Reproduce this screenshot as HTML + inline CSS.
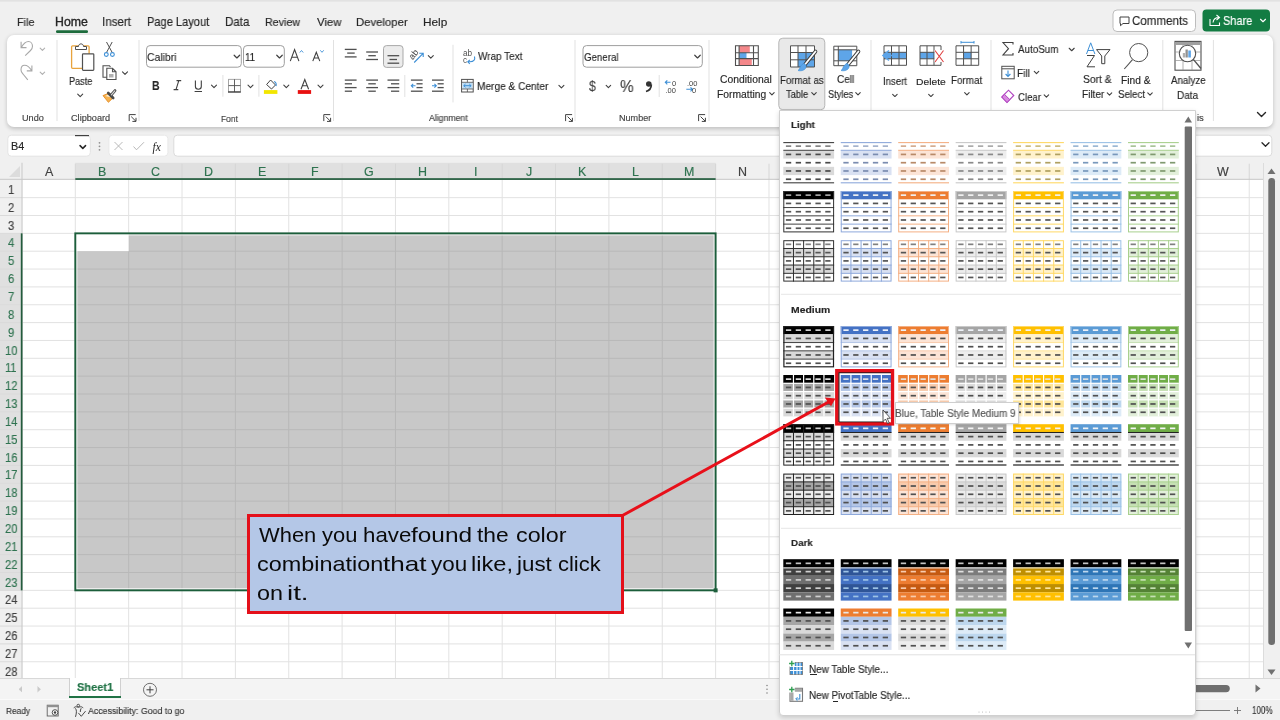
<!DOCTYPE html><html><head><meta charset="utf-8"><style>
*{margin:0;padding:0;box-sizing:border-box}
html,body{width:1280px;height:720px;overflow:hidden;background:#f0f0f0;font-family:"Liberation Sans",sans-serif;color:#262626}
.a{position:absolute}
.t{position:absolute;white-space:nowrap;line-height:1;transform-origin:0 0;will-change:transform;-webkit-text-stroke:0.15px currentColor}
svg.a{overflow:visible}
</style></head><body>
<div class="a" style="left:7px;top:35px;width:1266px;height:91.5px;background:#fff;border-radius:7px;box-shadow:0 1.5px 4px rgba(0,0,0,0.2)"></div><svg class="a" style="left:0;top:0;will-change:transform" width="1280" height="170"><rect x="0" y="0" width="1280" height="1.6" fill="#e2e2e2"/><rect x="56" y="30.2" width="32" height="2.7" rx="1.2" fill="#1d6b3c"/><rect x="1113" y="10" width="82.5" height="21.5" rx="4" fill="#fff" stroke="#bdbdbd" stroke-width="1"/><path d="M1120,17 h9 v6.5 h-6 l-2.5,2.2 v-2.2 h-0.5 z" fill="none" stroke="#404040" stroke-width="1"/><rect x="1202.5" y="9.5" width="67.5" height="22" rx="4" fill="#137c43"/><path d="M1210,19 v6.5 h9.5 v-3 M1213,22.5 c0.5,-3.5 2.5,-5 6,-5 M1216.5,15 l3,2.5 l-3,2.5" fill="none" stroke="#fff" stroke-width="1.1"/><path d="M1260.50,19.25 L1263.00,21.75 L1265.50,19.25" fill="none" stroke="#ffffff" stroke-width="1.1" stroke-linecap="round" stroke-linejoin="round"/><path d="M21.3,47.4 C23.5,43.5 26,41.5 28.5,41.5 C31,41.5 32.5,43.8 32.5,46.3 C32.5,48.2 31.5,49.5 30.5,50.5 L25.2,55.6 M21.1,41.8 V47.6 H26.5" fill="none" stroke="#a8a8a8" stroke-width="1.1"/><path d="M40.15,48.17 L42.40,50.42 L44.65,48.17" fill="none" stroke="#b0b0b0" stroke-width="1.1" stroke-linecap="round" stroke-linejoin="round"/><path d="M31.7,70.7 C29.5,67 27,65.3 24.6,65.3 C22.3,65.3 21,67.5 21,70 C21,71.8 22,73 23,74 L27.8,79.9 M31.9,65.5 V70.9 H26.8" fill="none" stroke="#a8a8a8" stroke-width="1.1"/><path d="M40.15,72.08 L42.40,74.33 L44.65,72.08" fill="none" stroke="#b0b0b0" stroke-width="1.1" stroke-linecap="round" stroke-linejoin="round"/><rect x="56.50" y="40" width="1" height="81" fill="#e1e1e1"/><rect x="71.6" y="45.8" width="17.5" height="22.5" rx="1" fill="#fff" stroke="#e8a33d" stroke-width="1.3"/><path d="M75.5,49.5 V46.5 H78.5 C78.5,43 83.5,43 83.5,46.5 H86.5 V49.5 Z" fill="#fff" stroke="#505050" stroke-width="1"/><rect x="82.5" y="53.8" width="11.3" height="16.5" rx="0.8" fill="#fff" stroke="#505050" stroke-width="1.2"/><path d="M77.70,94.15 L80.20,96.65 L82.70,94.15" fill="none" stroke="#404040" stroke-width="1.1" stroke-linecap="round" stroke-linejoin="round"/><path d="M106.5,42 L112.2,52.5 M112.2,42 L106.5,52.5" stroke="#505050" stroke-width="1" fill="none"/><circle cx="106.3" cy="54.5" r="1.9" fill="none" stroke="#3d8fd6" stroke-width="1.1"/><circle cx="112.4" cy="54.5" r="1.9" fill="none" stroke="#3d8fd6" stroke-width="1.1"/><path d="M108,77.2 H103 V65.8 H109.5 L110.5,67" fill="none" stroke="#505050" stroke-width="1.1"/><path d="M106.8,68.3 H112.5 L116,71.8 V79.5 H106.8 Z M112.5,68.3 V71.8 H116" fill="#fff" stroke="#505050" stroke-width="1.1"/><rect x="109" y="74" width="4.5" height="3.5" fill="#b0b0b0"/><path d="M122.50,71.95 L125.00,74.45 L127.50,71.95" fill="none" stroke="#404040" stroke-width="1.1" stroke-linecap="round" stroke-linejoin="round"/><path d="M103,95.6 L108.4,102.3 L112.4,98.4 L108.8,93.2 Z" fill="#f6b24f" stroke="#e48c22" stroke-width="0.9" stroke-linejoin="round"/><path d="M105.2,96 L109.2,94.2 L110.8,97.2 Z" fill="#fff4e0"/><path d="M108.2,93 L113.2,98" stroke="#4a4a4a" stroke-width="2.6" stroke-linecap="round"/><path d="M111.2,95 L115,90.6" stroke="#4a4a4a" stroke-width="2.8" stroke-linecap="round"/><path d="M111.4,94.8 L114.8,90.8" stroke="#d8d8d8" stroke-width="1.1" stroke-linecap="round"/><path d="M129.2,121.1 V114.6 H135.7" fill="none" stroke="#404040" stroke-width="1"/><path d="M131.2,116.6 L136.0,121.39999999999999 M136.0,117.8 V121.39999999999999 H132.39999999999998" fill="none" stroke="#404040" stroke-width="1"/><rect x="138.50" y="40" width="1" height="81" fill="#e1e1e1"/><rect x="146.5" y="45.6" width="94.8" height="21.6" rx="3.5" fill="#fff" stroke="#9e9e9e" stroke-width="1"/><path d="M234.15,55.23 L236.90,57.98 L239.65,55.23" fill="none" stroke="#404040" stroke-width="1.2" stroke-linecap="round" stroke-linejoin="round"/><rect x="243.5" y="45.6" width="40.8" height="21.6" rx="3.5" fill="#fff" stroke="#9e9e9e" stroke-width="1"/><path d="M276.75,55.23 L279.50,57.98 L282.25,55.23" fill="none" stroke="#404040" stroke-width="1.2" stroke-linecap="round" stroke-linejoin="round"/><path d="M290.3,61.1 L294.6,49.6 L298.9,61.1 M291.9,57.2 H297.3" fill="none" stroke="#404040" stroke-width="1.1"/><path d="M299.8,52.5 L301.5,50.5 L303.2,52.5" fill="none" stroke="#3d8fd6" stroke-width="0.9"/><path d="M312.8,61.1 L316.3,52.3 L319.8,61.1 M314.1,58 H318.5" fill="none" stroke="#404040" stroke-width="1.1"/><path d="M320.3,50.3 L322,52.3 L323.7,50.3" fill="none" stroke="#3d8fd6" stroke-width="0.9"/><path d="M176.5,80.6 H181.2 M173.6,89.6 H178.3 M178.8,80.6 L176,89.6" fill="none" stroke="#404040" stroke-width="1.1"/><path d="M195.4,80.4 V86.6 C195.4,90.2 201.3,90.2 201.3,86.6 V80.4" fill="none" stroke="#404040" stroke-width="1.1"/><rect x="194.60" y="91.00" width="7.40" height="1.0" fill="#404040"/><path d="M211.50,85.05 L214.00,87.55 L216.50,85.05" fill="none" stroke="#404040" stroke-width="1.1" stroke-linecap="round" stroke-linejoin="round"/><rect x="222.40" y="75" width="1" height="21.700000000000003" fill="#e1e1e1"/><rect x="228.6" y="79.3" width="11.8" height="12.6" fill="none" stroke="#909090" stroke-width="0.8"/><path d="M234.5,79.3 V92 M228.6,85.6 H240.4" stroke="#505050" stroke-width="0.9"/><rect x="228.00" y="91.35" width="12.80" height="1.3" fill="#404040"/><path d="M248.00,85.05 L250.50,87.55 L253.00,85.05" fill="none" stroke="#404040" stroke-width="1.1" stroke-linecap="round" stroke-linejoin="round"/><rect x="258.40" y="75" width="1" height="21.700000000000003" fill="#e1e1e1"/><path d="M266.6,84.5 L270.6,80 L275.5,85 L271.5,89 Z" fill="none" stroke="#404040" stroke-width="1"/><path d="M274,81.5 C276,82 276.5,84 276,86" fill="none" stroke="#3d8fd6" stroke-width="1.2"/><rect x="263.9" y="90.1" width="13.5" height="3.8" fill="#f2e600"/><path d="M283.80,85.05 L286.30,87.55 L288.80,85.05" fill="none" stroke="#404040" stroke-width="1.1" stroke-linecap="round" stroke-linejoin="round"/><path d="M301,89.2 L304.8,79.6 L308.6,89.2 M302.4,85.8 H307.2" fill="none" stroke="#404040" stroke-width="1.1"/><rect x="297.8" y="90.1" width="13.3" height="3.8" fill="#e81010"/><path d="M318.00,85.05 L320.50,87.55 L323.00,85.05" fill="none" stroke="#404040" stroke-width="1.1" stroke-linecap="round" stroke-linejoin="round"/><path d="M323.8,121.1 V114.6 H330.3" fill="none" stroke="#404040" stroke-width="1"/><path d="M325.8,116.6 L330.6,121.39999999999999 M330.6,117.8 V121.39999999999999 H327.0" fill="none" stroke="#404040" stroke-width="1"/><rect x="333.00" y="40" width="1" height="81" fill="#e1e1e1"/><rect x="344.80" y="48.75" width="11.80" height="1.3" fill="#505050"/><rect x="347.20" y="52.45" width="7.50" height="1.3" fill="#505050"/><rect x="344.80" y="56.25" width="11.80" height="1.3" fill="#505050"/><rect x="366.20" y="51.35" width="11.80" height="1.3" fill="#505050"/><rect x="368.30" y="55.05" width="7.50" height="1.3" fill="#505050"/><rect x="366.20" y="58.85" width="11.80" height="1.3" fill="#505050"/><rect x="383.5" y="45.6" width="19.5" height="21.8" rx="3" fill="#ececec" stroke="#a0a0a0" stroke-width="0.9"/><rect x="387.50" y="55.05" width="11.70" height="1.3" fill="#505050"/><rect x="389.50" y="58.85" width="7.50" height="1.3" fill="#505050"/><rect x="387.50" y="62.55" width="11.70" height="1.3" fill="#505050"/><text x="0" y="0" transform="translate(412.8,60.2) rotate(-52)" font-family="Liberation Sans" font-size="9" fill="#404040">ab</text><path d="M414.2,62.5 L423.1,53.3 M419.3,53.2 H423.2 V57" fill="none" stroke="#3d8fd6" stroke-width="1.1"/><path d="M428.30,55.55 L430.80,58.05 L433.30,55.55" fill="none" stroke="#404040" stroke-width="1.1" stroke-linecap="round" stroke-linejoin="round"/><rect x="344.80" y="79.45" width="11.80" height="1.3" fill="#505050"/><rect x="344.80" y="83.15" width="7.20" height="1.3" fill="#505050"/><rect x="344.80" y="86.95" width="11.80" height="1.3" fill="#505050"/><rect x="344.80" y="90.55" width="7.20" height="1.3" fill="#505050"/><rect x="366.20" y="79.45" width="11.80" height="1.3" fill="#505050"/><rect x="368.30" y="83.15" width="7.50" height="1.3" fill="#505050"/><rect x="366.20" y="86.95" width="11.80" height="1.3" fill="#505050"/><rect x="368.30" y="90.55" width="7.50" height="1.3" fill="#505050"/><rect x="387.50" y="79.45" width="11.80" height="1.3" fill="#505050"/><rect x="391.00" y="83.15" width="8.20" height="1.3" fill="#505050"/><rect x="387.50" y="86.95" width="11.80" height="1.3" fill="#505050"/><rect x="391.00" y="90.55" width="8.20" height="1.3" fill="#505050"/><rect x="404.30" y="75" width="1" height="22" fill="#e1e1e1"/><rect x="410.90" y="79.45" width="11.70" height="1.3" fill="#505050"/><rect x="416.50" y="83.15" width="6.10" height="1.3" fill="#505050"/><rect x="416.50" y="86.95" width="6.10" height="1.3" fill="#505050"/><rect x="410.90" y="90.55" width="11.70" height="1.3" fill="#505050"/><path d="M415.5,85.7 H411.3 M413.2,83.8 L411.3,85.7 L413.2,87.6" fill="none" stroke="#3d8fd6" stroke-width="1.1"/><rect x="432.00" y="79.45" width="11.70" height="1.3" fill="#505050"/><rect x="437.60" y="83.15" width="6.10" height="1.3" fill="#505050"/><rect x="437.60" y="86.95" width="6.10" height="1.3" fill="#505050"/><rect x="432.00" y="90.55" width="11.70" height="1.3" fill="#505050"/><path d="M432,85.7 H436.3 M434.4,83.8 L436.3,85.7 L434.4,87.6" fill="none" stroke="#3d8fd6" stroke-width="1.1"/><rect x="452.50" y="44.8" width="1" height="57.60000000000001" fill="#e1e1e1"/><text x="463" y="55.5" font-family="Liberation Sans" font-size="8.2" fill="#505050">ab</text><text x="463" y="63" font-family="Liberation Sans" font-size="8.2" fill="#505050">c</text><path d="M474.5,56.5 C475.5,60 473.5,61.8 470,61.8 H467.8 M469.8,59.8 L467.8,61.8 L469.8,63.8" fill="none" stroke="#3d8fd6" stroke-width="1.1"/><rect x="461.6" y="79.4" width="11.6" height="12.6" fill="#fff" stroke="#505050" stroke-width="1"/><rect x="462.4" y="82.5" width="10" height="6.4" fill="#bcdcf5"/><path d="M461.6,82.3 H473.2 M461.6,89 H473.2 M467.4,79.4 V82.3 M467.4,89 V92" stroke="#505050" stroke-width="0.8"/><path d="M463.8,85.7 H471 M465.5,84 L463.8,85.7 L465.5,87.4 M469.3,84 L471,85.7 L469.3,87.4" fill="none" stroke="#3d8fd6" stroke-width="1"/><path d="M558.90,85.35 L561.40,87.85 L563.90,85.35" fill="none" stroke="#404040" stroke-width="1.1" stroke-linecap="round" stroke-linejoin="round"/><path d="M565.6,121.1 V114.6 H572.1" fill="none" stroke="#404040" stroke-width="1"/><path d="M567.6,116.6 L572.4,121.39999999999999 M572.4,117.8 V121.39999999999999 H568.8000000000001" fill="none" stroke="#404040" stroke-width="1"/><rect x="574.50" y="40" width="1" height="81" fill="#e1e1e1"/><rect x="583" y="45.6" width="119.3" height="21.6" rx="3.5" fill="#fff" stroke="#9e9e9e" stroke-width="1"/><path d="M694.75,55.23 L697.50,57.98 L700.25,55.23" fill="none" stroke="#404040" stroke-width="1.2" stroke-linecap="round" stroke-linejoin="round"/><path d="M606.15,85.38 L608.40,87.62 L610.65,85.38" fill="none" stroke="#404040" stroke-width="1.1" stroke-linecap="round" stroke-linejoin="round"/><circle cx="648.8" cy="84" r="2.8" fill="#333"/><path d="M651.3,84.5 C651.3,88 649.5,90.5 646,91.5" fill="none" stroke="#333" stroke-width="1.8"/><rect x="658.70" y="75" width="1" height="22" fill="#e1e1e1"/><path d="M670.5,82.3 H665.3 M667.3,80.3 L665.3,82.3 L667.3,84.3" fill="none" stroke="#3d8fd6" stroke-width="1.1"/><text x="672" y="85.5" font-family="Liberation Sans" font-size="7.5" fill="#404040">0</text><text x="665.5" y="92.6" font-family="Liberation Sans" font-size="7.5" fill="#404040">.00</text><text x="687" y="85.5" font-family="Liberation Sans" font-size="7.5" fill="#404040">.00</text><path d="M686.3,89.3 H692.5 M690.5,87.3 L692.5,89.3 L690.5,91.3" fill="none" stroke="#3d8fd6" stroke-width="1.1"/><text x="692" y="92.6" font-family="Liberation Sans" font-size="7.5" fill="#404040">0</text><path d="M698.6,121.1 V114.6 H705.1" fill="none" stroke="#404040" stroke-width="1"/><path d="M700.6,116.6 L705.4,121.39999999999999 M705.4,117.8 V121.39999999999999 H701.8000000000001" fill="none" stroke="#404040" stroke-width="1"/><rect x="708.50" y="40" width="1" height="81" fill="#e1e1e1"/><rect x="739.1" y="45.6" width="10.7" height="7.1" fill="#f4878a"/><rect x="739.1" y="52.7" width="7.4" height="5.9" fill="#5ea5e8"/><rect x="739.1" y="58.6" width="12.7" height="7.1" fill="#f4878a"/><path d="M735.5,45.8 H758.3 V65.5 H735.5 Z M739.1,45.8 V65.5 M753.5,45.8 V65.5 M735.5,52.7 H758.3 M735.5,58.6 H758.3" fill="none" stroke="#505050" stroke-width="1.1"/><path d="M769.65,92.67 L771.90,94.92 L774.15,92.67" fill="none" stroke="#404040" stroke-width="1.1" stroke-linecap="round" stroke-linejoin="round"/><rect x="778.8" y="38.2" width="46" height="71.5" rx="4" fill="#e9e9e9" stroke="#b5b5b5" stroke-width="1"/><rect x="790.5" y="45.8" width="24" height="21.2" fill="#fff"/><rect x="798" y="52.5" width="16.5" height="14.5" fill="#5ea5e8"/><path d="M790.5,45.8 H814.5 V67 H790.5 Z M798,45.8 V67 M806,45.8 V67 M790.5,52.5 H814.5 M790.5,59.8 H814.5" fill="none" stroke="#505050" stroke-width="1"/><path d="M815.5,51.5 L805,64.5" stroke="#404040" stroke-width="3.6" stroke-linecap="round"/><path d="M815.5,51.5 L805,64.5" stroke="#fff" stroke-width="1.8" stroke-linecap="round"/><path d="M803.5,63.5 C806.5,64 807,67.5 804.5,69.5 C802.5,71 799.5,71 798,70.5 C800,69.5 799.5,66 803.5,63.5 Z" fill="#5ea5e8" stroke="#3d8fd6" stroke-width="0.6"/><path d="M811.75,92.67 L814.00,94.92 L816.25,92.67" fill="none" stroke="#404040" stroke-width="1.1" stroke-linecap="round" stroke-linejoin="round"/><rect x="833.8" y="46.2" width="23" height="19.5" fill="#fff"/><rect x="838.3" y="49.8" width="13.8" height="11" fill="#5ea5e8"/><path d="M833.8,46.2 H856.8 V65.7 H833.8 Z M838.3,46.2 V65.7 M833.8,49.8 H856.8 M833.8,60.8 H856.8" fill="none" stroke="#505050" stroke-width="1"/><path d="M858.5,51.5 L848,64.5" stroke="#404040" stroke-width="3.6" stroke-linecap="round"/><path d="M858.5,51.5 L848,64.5" stroke="#fff" stroke-width="1.8" stroke-linecap="round"/><path d="M846.5,63.5 C849.5,64 850,67.5 847.5,69.5 C845.5,71 842.5,71 841,70.5 C843,69.5 842.5,66 846.5,63.5 Z" fill="#5ea5e8" stroke="#3d8fd6" stroke-width="0.6"/><path d="M855.75,92.67 L858.00,94.92 L860.25,92.67" fill="none" stroke="#404040" stroke-width="1.1" stroke-linecap="round" stroke-linejoin="round"/><rect x="870.50" y="40" width="1" height="81" fill="#e1e1e1"/><rect x="884" y="52.2" width="23" height="6.6" fill="#5ea5e8"/><path d="M884,45.8 H906.5 V65.3 H884 Z M891.50,45.8 V65.3 M899.00,45.8 V65.3 M884,52.30 H906.5 M884,58.80 H906.5" fill="none" stroke="#505050" stroke-width="1"/><path d="M889,50.5 L883,55.5 L889,60.5 M883.5,55.5 H893" fill="none" stroke="#5ea5e8" stroke-width="1.6"/><path d="M892.65,94.28 L894.90,96.53 L897.15,94.28" fill="none" stroke="#404040" stroke-width="1.1" stroke-linecap="round" stroke-linejoin="round"/><rect x="920" y="52.2" width="16" height="6.6" fill="#5ea5e8"/><path d="M934,52.2 L937.5,55.5 L934,58.8 Z" fill="#5ea5e8"/><path d="M920,45.8 H941 V65.3 H920 Z M927.00,45.8 V65.3 M934.00,45.8 V65.3 M920,52.30 H941 M920,58.80 H941" fill="none" stroke="#505050" stroke-width="1"/><rect x="934.5" y="50" width="9.5" height="12" fill="#fff"/><path d="M935,50.5 L943.5,62 M943.5,50.5 L935,62" stroke="#e04040" stroke-width="1.1"/><path d="M928.65,94.28 L930.90,96.53 L933.15,94.28" fill="none" stroke="#404040" stroke-width="1.1" stroke-linecap="round" stroke-linejoin="round"/><rect x="963.5" y="52.2" width="7.7" height="6.6" fill="#5ea5e8"/><path d="M956,45.8 H978.7 V65.3 H956 Z M963.57,45.8 V65.3 M971.13,45.8 V65.3 M956,52.30 H978.7 M956,58.80 H978.7" fill="none" stroke="#505050" stroke-width="1"/><path d="M961,42.3 H974 M961,41 V43.6 M974,41 V43.6" stroke="#3d8fd6" stroke-width="1"/><path d="M964.65,92.58 L966.90,94.83 L969.15,92.58" fill="none" stroke="#404040" stroke-width="1.1" stroke-linecap="round" stroke-linejoin="round"/><rect x="990.50" y="40" width="1" height="81" fill="#e1e1e1"/><path d="M1013,44.5 V42.5 H1003 L1008.5,48.7 L1003,55 H1013 V53" fill="none" stroke="#404040" stroke-width="1.1"/><path d="M1069.20,48.25 L1071.70,50.75 L1074.20,48.25" fill="none" stroke="#404040" stroke-width="1.1" stroke-linecap="round" stroke-linejoin="round"/><rect x="1001.8" y="66.3" width="12.4" height="12.5" fill="#fff" stroke="#505050" stroke-width="1"/><path d="M1001.8,68.8 H1014.2" stroke="#505050" stroke-width="1"/><path d="M1008,70.5 V76.5 M1005.6,74 L1008,76.5 L1010.4,74" fill="none" stroke="#3d8fd6" stroke-width="1.1"/><path d="M1034.25,71.38 L1036.50,73.62 L1038.75,71.38" fill="none" stroke="#404040" stroke-width="1.1" stroke-linecap="round" stroke-linejoin="round"/><path d="M1001.8,97 L1008.5,90.2 L1013.8,95.5 L1007,102.5 Z" fill="#fff" stroke="#b043c0" stroke-width="1.1"/><path d="M1001.8,97 L1004.5,94.4 L1009.8,99.6 L1007,102.5 Z" fill="#d88ae0" stroke="#b043c0" stroke-width="1"/><path d="M1044.15,94.88 L1046.40,97.12 L1048.65,94.88" fill="none" stroke="#404040" stroke-width="1.1" stroke-linecap="round" stroke-linejoin="round"/><path d="M1086.5,54 L1090.7,42.8 L1094.9,54 M1088,50.5 H1093.5" fill="none" stroke="#3d8fd6" stroke-width="1"/><path d="M1087,55.5 H1094.5 L1087,66.8 H1095" fill="none" stroke="#404040" stroke-width="1"/><path d="M1096.5,49.6 H1110 L1104.8,56 V63.7 H1101.7 V56 Z" fill="none" stroke="#404040" stroke-width="1"/><path d="M1107.25,92.88 L1109.50,95.12 L1111.75,92.88" fill="none" stroke="#404040" stroke-width="1.1" stroke-linecap="round" stroke-linejoin="round"/><circle cx="1138.7" cy="52.6" r="9.1" fill="none" stroke="#505050" stroke-width="1"/><path d="M1132.5,59.6 L1124.3,69" stroke="#505050" stroke-width="1.1"/><path d="M1147.75,92.88 L1150.00,95.12 L1152.25,92.88" fill="none" stroke="#404040" stroke-width="1.1" stroke-linecap="round" stroke-linejoin="round"/><rect x="1162.30" y="40" width="1" height="81" fill="#e1e1e1"/><rect x="1175" y="41.4" width="26" height="28.8" fill="#fff" stroke="#505050" stroke-width="1.1"/><rect x="1175.5" y="42" width="25" height="3" fill="#a0a0a0"/><path d="M1175,52 H1201 M1175,60.5 H1201 M1183,45 V70 M1192,45 V70" stroke="#909090" stroke-width="0.7"/><circle cx="1187.5" cy="53.5" r="8.2" fill="#fff" stroke="#505050" stroke-width="1.1"/><rect x="1182.8" y="53" width="2.3" height="4.5" fill="#b0b0b0"/><rect x="1185.5" y="49.5" width="2.3" height="8" fill="#909090"/><rect x="1188.3" y="50.5" width="2.6" height="7" fill="#5ea5e8"/><path d="M1193.3,59.3 L1201,68.5" stroke="#505050" stroke-width="1.3"/><rect x="1212.90" y="40" width="1" height="81" fill="#e1e1e1"/><path d="M1257.50,112.60 L1261.50,116.60 L1265.50,112.60" fill="none" stroke="#262626" stroke-width="1.4" stroke-linecap="round" stroke-linejoin="round"/><rect x="7.8" y="135.2" width="82.5" height="21" rx="3.5" fill="#fff" stroke="#e3e3e3" stroke-width="1"/><rect x="75" y="135" width="14" height="1.2" fill="#404040"/><path d="M80.05,145.62 L82.80,148.38 L85.55,145.62" fill="none" stroke="#262626" stroke-width="1.5" stroke-linecap="round" stroke-linejoin="round"/><circle cx="99.5" cy="142.8" r="0.9" fill="#909090"/><circle cx="99.5" cy="146.3" r="0.9" fill="#909090"/><circle cx="99.5" cy="149.8" r="0.9" fill="#909090"/><rect x="108.9" y="135.2" width="59" height="21" rx="3.5" fill="#fff" stroke="#e8e8e8" stroke-width="1"/><path d="M114.5,142 L122.5,150 M122.5,142 L114.5,150" stroke="#b0b0b0" stroke-width="0.9"/><path d="M133.5,146.5 L136.5,149.8 L144,142.2" fill="none" stroke="#b0b0b0" stroke-width="0.9"/><text x="152.5" y="151" font-family="Liberation Serif" font-style="italic" font-size="11.5" fill="#262626">fx</text><rect x="173.8" y="135.2" width="1098" height="21" rx="3.5" fill="#fff" stroke="#dadada" stroke-width="1"/><path d="M1262.00,142.75 L1265.50,146.25 L1269.00,142.75" fill="none" stroke="#262626" stroke-width="1.3" stroke-linecap="round" stroke-linejoin="round"/></svg><div class="t" style="left:17.13px;top:16.65px;font-size:11.59px;color:#262626;transform:scaleX(0.936);">File</div><div class="t" style="left:55.21px;top:16.15px;font-size:12.17px;color:#262626;transform:scaleX(1.012);-webkit-text-stroke:0.35px #262626;">Home</div><div class="t" style="left:101.76px;top:16.15px;font-size:12.17px;color:#262626;transform:scaleX(0.950);">Insert</div><div class="t" style="left:146.81px;top:16.15px;font-size:12.17px;color:#262626;transform:scaleX(0.911);">Page Layout</div><div class="t" style="left:224.68px;top:16.15px;font-size:12.17px;color:#262626;transform:scaleX(0.947);">Data</div><div class="t" style="left:265.14px;top:16.65px;font-size:11.59px;color:#262626;transform:scaleX(0.925);">Review</div><div class="t" style="left:316.54px;top:16.65px;font-size:11.59px;color:#262626;transform:scaleX(0.982);">View</div><div class="t" style="left:355.99px;top:16.65px;font-size:11.59px;color:#262626;transform:scaleX(0.979);">Developer</div><div class="t" style="left:423.45px;top:16.65px;font-size:11.59px;color:#262626;transform:scaleX(1.021);">Help</div><div class="t" style="left:1132.42px;top:15.11px;font-size:12.57px;color:#262626;transform:scaleX(0.921);">Comments</div><div class="t" style="left:1222.50px;top:15.48px;font-size:12.14px;color:#ffffff;transform:scaleX(0.909);">Share</div><div class="t" style="left:21.51px;top:114.06px;font-size:9.10px;color:#404040;transform:scaleX(1.004);">Undo</div><div class="t" style="left:69.07px;top:76.49px;font-size:11.30px;color:#262626;transform:scaleX(0.808);">Paste</div><div class="t" style="left:71.04px;top:113.96px;font-size:9.10px;color:#404040;transform:scaleX(1.007);">Clipboard</div><div class="t" style="left:147.48px;top:51.59px;font-size:11.31px;color:#262626;transform:scaleX(0.920);">Calibri</div><div class="t" style="left:245.47px;top:51.84px;font-size:11.01px;color:#262626;transform:scaleX(0.883);">11</div><div class="t" style="left:152.22px;top:78.72px;font-size:13.62px;color:#262626;font-weight:bold;transform:scaleX(0.770);">B</div><div class="t" style="left:220.93px;top:113.57px;font-size:9.57px;color:#404040;transform:scaleX(0.879);">Font</div><div class="t" style="left:478.15px;top:51.37px;font-size:11.45px;color:#262626;transform:scaleX(0.869);">Wrap Text</div><div class="t" style="left:477.39px;top:81.49px;font-size:10.71px;color:#262626;transform:scaleX(0.945);">Merge &amp; Center</div><div class="t" style="left:428.60px;top:113.96px;font-size:9.10px;color:#404040;transform:scaleX(0.957);">Alignment</div><div class="t" style="left:584.31px;top:51.69px;font-size:11.31px;color:#262626;transform:scaleX(0.858);">General</div><div class="t" style="left:588.58px;top:79.46px;font-size:14.86px;color:#404040;transform:scaleX(0.825);">$</div><div class="t" style="left:619.86px;top:78.32px;font-size:17.27px;color:#404040;transform:scaleX(0.890);">%</div><div class="t" style="left:618.98px;top:113.96px;font-size:9.10px;color:#404040;transform:scaleX(0.994);">Number</div><div class="t" style="left:720.48px;top:75.31px;font-size:10.34px;color:#262626;transform:scaleX(0.999);">Conditional</div><div class="t" style="left:716.92px;top:90.31px;font-size:10.34px;color:#262626;transform:scaleX(0.998);">Formatting</div><div class="t" style="left:779.82px;top:74.86px;font-size:10.87px;color:#262626;transform:scaleX(0.892);">Format as</div><div class="t" style="left:786.32px;top:90.31px;font-size:10.34px;color:#262626;transform:scaleX(0.894);">Table</div><div class="t" style="left:837.00px;top:75.31px;font-size:10.34px;color:#262626;transform:scaleX(0.964);">Cell</div><div class="t" style="left:828.08px;top:90.31px;font-size:10.34px;color:#262626;transform:scaleX(0.895);">Styles</div><div class="t" style="left:882.84px;top:76.95px;font-size:10.29px;color:#262626;transform:scaleX(0.933);">Insert</div><div class="t" style="left:916.38px;top:77.38px;font-size:9.79px;color:#262626;transform:scaleX(1.053);">Delete</div><div class="t" style="left:951.01px;top:75.21px;font-size:10.58px;color:#262626;transform:scaleX(0.933);">Format</div><div class="t" style="left:1018.20px;top:44.49px;font-size:11.43px;color:#262626;transform:scaleX(0.860);">AutoSum</div><div class="t" style="left:1017.38px;top:68.32px;font-size:11.03px;color:#262626;transform:scaleX(0.930);">Fill</div><div class="t" style="left:1017.72px;top:91.52px;font-size:11.03px;color:#262626;transform:scaleX(0.871);">Clear</div><div class="t" style="left:1083.14px;top:75.44px;font-size:10.43px;color:#262626;transform:scaleX(0.985);">Sort &amp;</div><div class="t" style="left:1081.50px;top:90.34px;font-size:10.07px;color:#262626;transform:scaleX(0.991);">Filter</div><div class="t" style="left:1120.68px;top:75.74px;font-size:10.07px;color:#262626;transform:scaleX(1.013);">Find &amp;</div><div class="t" style="left:1117.76px;top:90.34px;font-size:10.07px;color:#262626;transform:scaleX(0.966);">Select</div><div class="t" style="left:1170.90px;top:75.64px;font-size:10.07px;color:#262626;transform:scaleX(0.965);">Analyze</div><div class="t" style="left:1177.10px;top:89.91px;font-size:10.58px;color:#262626;transform:scaleX(0.941);">Data</div><div class="t" style="left:1196.98px;top:114.26px;font-size:9.10px;color:#404040;transform:scaleX(1.045);">is</div><div class="t" style="left:10.83px;top:141.46px;font-size:10.87px;color:#262626;transform:scaleX(0.999);">B4</div><div class="a" style="left:0;top:162.7px;width:1263.0px;height:515.5999999999999px;background:#fff"></div><svg class="a" style="left:0;top:0" width="1280" height="720"><rect x="0" y="162.7" width="1263.0" height="17.100000000000023" fill="#f0f0f0"/><rect x="0" y="179.8" width="22.5" height="498.49999999999994" fill="#f0f0f0"/><rect x="75.3" y="162.7" width="640.3199999999999" height="17.100000000000023" fill="#e0e0e0"/><rect x="0" y="233.35000000000002" width="22.5" height="357.0" fill="#e0e0e0"/><path d="M9,177 L20,177 L20,166 Z" fill="#dcdcdc"/><rect x="74.80" y="179.8" width="1" height="498.49999999999994" fill="#e2e2e2"/><rect x="74.80" y="163.7" width="1" height="16.100000000000023" fill="#d6d6d6"/><rect x="128.16" y="179.8" width="1" height="498.49999999999994" fill="#e2e2e2"/><rect x="128.16" y="163.7" width="1" height="16.100000000000023" fill="#d6d6d6"/><rect x="181.52" y="179.8" width="1" height="498.49999999999994" fill="#e2e2e2"/><rect x="181.52" y="163.7" width="1" height="16.100000000000023" fill="#d6d6d6"/><rect x="234.88" y="179.8" width="1" height="498.49999999999994" fill="#e2e2e2"/><rect x="234.88" y="163.7" width="1" height="16.100000000000023" fill="#d6d6d6"/><rect x="288.24" y="179.8" width="1" height="498.49999999999994" fill="#e2e2e2"/><rect x="288.24" y="163.7" width="1" height="16.100000000000023" fill="#d6d6d6"/><rect x="341.60" y="179.8" width="1" height="498.49999999999994" fill="#e2e2e2"/><rect x="341.60" y="163.7" width="1" height="16.100000000000023" fill="#d6d6d6"/><rect x="394.96" y="179.8" width="1" height="498.49999999999994" fill="#e2e2e2"/><rect x="394.96" y="163.7" width="1" height="16.100000000000023" fill="#d6d6d6"/><rect x="448.32" y="179.8" width="1" height="498.49999999999994" fill="#e2e2e2"/><rect x="448.32" y="163.7" width="1" height="16.100000000000023" fill="#d6d6d6"/><rect x="501.68" y="179.8" width="1" height="498.49999999999994" fill="#e2e2e2"/><rect x="501.68" y="163.7" width="1" height="16.100000000000023" fill="#d6d6d6"/><rect x="555.04" y="179.8" width="1" height="498.49999999999994" fill="#e2e2e2"/><rect x="555.04" y="163.7" width="1" height="16.100000000000023" fill="#d6d6d6"/><rect x="608.40" y="179.8" width="1" height="498.49999999999994" fill="#e2e2e2"/><rect x="608.40" y="163.7" width="1" height="16.100000000000023" fill="#d6d6d6"/><rect x="661.76" y="179.8" width="1" height="498.49999999999994" fill="#e2e2e2"/><rect x="661.76" y="163.7" width="1" height="16.100000000000023" fill="#d6d6d6"/><rect x="715.12" y="179.8" width="1" height="498.49999999999994" fill="#e2e2e2"/><rect x="715.12" y="163.7" width="1" height="16.100000000000023" fill="#d6d6d6"/><rect x="768.48" y="179.8" width="1" height="498.49999999999994" fill="#e2e2e2"/><rect x="768.48" y="163.7" width="1" height="16.100000000000023" fill="#d6d6d6"/><rect x="821.84" y="179.8" width="1" height="498.49999999999994" fill="#e2e2e2"/><rect x="821.84" y="163.7" width="1" height="16.100000000000023" fill="#d6d6d6"/><rect x="875.20" y="179.8" width="1" height="498.49999999999994" fill="#e2e2e2"/><rect x="875.20" y="163.7" width="1" height="16.100000000000023" fill="#d6d6d6"/><rect x="928.56" y="179.8" width="1" height="498.49999999999994" fill="#e2e2e2"/><rect x="928.56" y="163.7" width="1" height="16.100000000000023" fill="#d6d6d6"/><rect x="981.92" y="179.8" width="1" height="498.49999999999994" fill="#e2e2e2"/><rect x="981.92" y="163.7" width="1" height="16.100000000000023" fill="#d6d6d6"/><rect x="1035.28" y="179.8" width="1" height="498.49999999999994" fill="#e2e2e2"/><rect x="1035.28" y="163.7" width="1" height="16.100000000000023" fill="#d6d6d6"/><rect x="1088.64" y="179.8" width="1" height="498.49999999999994" fill="#e2e2e2"/><rect x="1088.64" y="163.7" width="1" height="16.100000000000023" fill="#d6d6d6"/><rect x="1142.00" y="179.8" width="1" height="498.49999999999994" fill="#e2e2e2"/><rect x="1142.00" y="163.7" width="1" height="16.100000000000023" fill="#d6d6d6"/><rect x="1195.36" y="179.8" width="1" height="498.49999999999994" fill="#e2e2e2"/><rect x="1195.36" y="163.7" width="1" height="16.100000000000023" fill="#d6d6d6"/><rect x="1248.72" y="179.8" width="1" height="498.49999999999994" fill="#e2e2e2"/><rect x="1248.72" y="163.7" width="1" height="16.100000000000023" fill="#d6d6d6"/><rect x="22.5" y="197.15" width="1240.5" height="1" fill="#e2e2e2"/><rect x="0" y="197.15" width="22.5" height="1" fill="#dadada"/><rect x="22.5" y="215.00" width="1240.5" height="1" fill="#e2e2e2"/><rect x="0" y="215.00" width="22.5" height="1" fill="#dadada"/><rect x="22.5" y="232.85" width="1240.5" height="1" fill="#e2e2e2"/><rect x="0" y="232.85" width="22.5" height="1" fill="#dadada"/><rect x="22.5" y="250.70" width="1240.5" height="1" fill="#e2e2e2"/><rect x="0" y="250.70" width="22.5" height="1" fill="#dadada"/><rect x="22.5" y="268.55" width="1240.5" height="1" fill="#e2e2e2"/><rect x="0" y="268.55" width="22.5" height="1" fill="#dadada"/><rect x="22.5" y="286.40" width="1240.5" height="1" fill="#e2e2e2"/><rect x="0" y="286.40" width="22.5" height="1" fill="#dadada"/><rect x="22.5" y="304.25" width="1240.5" height="1" fill="#e2e2e2"/><rect x="0" y="304.25" width="22.5" height="1" fill="#dadada"/><rect x="22.5" y="322.10" width="1240.5" height="1" fill="#e2e2e2"/><rect x="0" y="322.10" width="22.5" height="1" fill="#dadada"/><rect x="22.5" y="339.95" width="1240.5" height="1" fill="#e2e2e2"/><rect x="0" y="339.95" width="22.5" height="1" fill="#dadada"/><rect x="22.5" y="357.80" width="1240.5" height="1" fill="#e2e2e2"/><rect x="0" y="357.80" width="22.5" height="1" fill="#dadada"/><rect x="22.5" y="375.65" width="1240.5" height="1" fill="#e2e2e2"/><rect x="0" y="375.65" width="22.5" height="1" fill="#dadada"/><rect x="22.5" y="393.50" width="1240.5" height="1" fill="#e2e2e2"/><rect x="0" y="393.50" width="22.5" height="1" fill="#dadada"/><rect x="22.5" y="411.35" width="1240.5" height="1" fill="#e2e2e2"/><rect x="0" y="411.35" width="22.5" height="1" fill="#dadada"/><rect x="22.5" y="429.20" width="1240.5" height="1" fill="#e2e2e2"/><rect x="0" y="429.20" width="22.5" height="1" fill="#dadada"/><rect x="22.5" y="447.05" width="1240.5" height="1" fill="#e2e2e2"/><rect x="0" y="447.05" width="22.5" height="1" fill="#dadada"/><rect x="22.5" y="464.90" width="1240.5" height="1" fill="#e2e2e2"/><rect x="0" y="464.90" width="22.5" height="1" fill="#dadada"/><rect x="22.5" y="482.75" width="1240.5" height="1" fill="#e2e2e2"/><rect x="0" y="482.75" width="22.5" height="1" fill="#dadada"/><rect x="22.5" y="500.60" width="1240.5" height="1" fill="#e2e2e2"/><rect x="0" y="500.60" width="22.5" height="1" fill="#dadada"/><rect x="22.5" y="518.45" width="1240.5" height="1" fill="#e2e2e2"/><rect x="0" y="518.45" width="22.5" height="1" fill="#dadada"/><rect x="22.5" y="536.30" width="1240.5" height="1" fill="#e2e2e2"/><rect x="0" y="536.30" width="22.5" height="1" fill="#dadada"/><rect x="22.5" y="554.15" width="1240.5" height="1" fill="#e2e2e2"/><rect x="0" y="554.15" width="22.5" height="1" fill="#dadada"/><rect x="22.5" y="572.00" width="1240.5" height="1" fill="#e2e2e2"/><rect x="0" y="572.00" width="22.5" height="1" fill="#dadada"/><rect x="22.5" y="589.85" width="1240.5" height="1" fill="#e2e2e2"/><rect x="0" y="589.85" width="22.5" height="1" fill="#dadada"/><rect x="22.5" y="607.70" width="1240.5" height="1" fill="#e2e2e2"/><rect x="0" y="607.70" width="22.5" height="1" fill="#dadada"/><rect x="22.5" y="625.55" width="1240.5" height="1" fill="#e2e2e2"/><rect x="0" y="625.55" width="22.5" height="1" fill="#dadada"/><rect x="22.5" y="643.40" width="1240.5" height="1" fill="#e2e2e2"/><rect x="0" y="643.40" width="22.5" height="1" fill="#dadada"/><rect x="22.5" y="661.25" width="1240.5" height="1" fill="#e2e2e2"/><rect x="0" y="661.25" width="22.5" height="1" fill="#dadada"/><rect x="22.5" y="679.10" width="1240.5" height="1" fill="#e2e2e2"/><rect x="0" y="679.10" width="22.5" height="1" fill="#dadada"/><rect x="0" y="178.80" width="1263.0" height="1" fill="#c8c8c8"/><rect x="21.50" y="162.7" width="1" height="515.5999999999999" fill="#c8c8c8"/><rect x="75.3" y="233.35000000000002" width="640.3199999999999" height="357.0" fill="#c8c8c8"/><rect x="75.3" y="233.35000000000002" width="53.36" height="17.85" fill="#ffffff"/><rect x="128.16" y="233.35000000000002" width="1" height="357.0" fill="#b8b8b8"/><rect x="181.52" y="233.35000000000002" width="1" height="357.0" fill="#b8b8b8"/><rect x="234.88" y="233.35000000000002" width="1" height="357.0" fill="#b8b8b8"/><rect x="288.24" y="233.35000000000002" width="1" height="357.0" fill="#b8b8b8"/><rect x="341.60" y="233.35000000000002" width="1" height="357.0" fill="#b8b8b8"/><rect x="394.96" y="233.35000000000002" width="1" height="357.0" fill="#b8b8b8"/><rect x="448.32" y="233.35000000000002" width="1" height="357.0" fill="#b8b8b8"/><rect x="501.68" y="233.35000000000002" width="1" height="357.0" fill="#b8b8b8"/><rect x="555.04" y="233.35000000000002" width="1" height="357.0" fill="#b8b8b8"/><rect x="608.40" y="233.35000000000002" width="1" height="357.0" fill="#b8b8b8"/><rect x="661.76" y="233.35000000000002" width="1" height="357.0" fill="#b8b8b8"/><rect x="75.3" y="250.70" width="640.3199999999999" height="1" fill="#b8b8b8"/><rect x="75.3" y="268.55" width="640.3199999999999" height="1" fill="#b8b8b8"/><rect x="75.3" y="286.40" width="640.3199999999999" height="1" fill="#b8b8b8"/><rect x="75.3" y="304.25" width="640.3199999999999" height="1" fill="#b8b8b8"/><rect x="75.3" y="322.10" width="640.3199999999999" height="1" fill="#b8b8b8"/><rect x="75.3" y="339.95" width="640.3199999999999" height="1" fill="#b8b8b8"/><rect x="75.3" y="357.80" width="640.3199999999999" height="1" fill="#b8b8b8"/><rect x="75.3" y="375.65" width="640.3199999999999" height="1" fill="#b8b8b8"/><rect x="75.3" y="393.50" width="640.3199999999999" height="1" fill="#b8b8b8"/><rect x="75.3" y="411.35" width="640.3199999999999" height="1" fill="#b8b8b8"/><rect x="75.3" y="429.20" width="640.3199999999999" height="1" fill="#b8b8b8"/><rect x="75.3" y="447.05" width="640.3199999999999" height="1" fill="#b8b8b8"/><rect x="75.3" y="464.90" width="640.3199999999999" height="1" fill="#b8b8b8"/><rect x="75.3" y="482.75" width="640.3199999999999" height="1" fill="#b8b8b8"/><rect x="75.3" y="500.60" width="640.3199999999999" height="1" fill="#b8b8b8"/><rect x="75.3" y="518.45" width="640.3199999999999" height="1" fill="#b8b8b8"/><rect x="75.3" y="536.30" width="640.3199999999999" height="1" fill="#b8b8b8"/><rect x="75.3" y="554.15" width="640.3199999999999" height="1" fill="#b8b8b8"/><rect x="75.3" y="572.00" width="640.3199999999999" height="1" fill="#b8b8b8"/><rect x="75.3" y="233.35000000000002" width="53.36" height="17.85" fill="#ffffff"/><rect x="76.80" y="234.85" width="637.32" height="354.00" fill="none" stroke="#ffffff" stroke-width="1"/><rect x="75.30" y="233.35" width="640.32" height="357.00" fill="none" stroke="#1c5e3b" stroke-width="1.9"/><rect x="713.62" y="588.35" width="4" height="4" fill="#1c5e3b"/><rect x="75.3" y="178.20" width="640.3199999999999" height="1.7" fill="#235c3d"/><rect x="20.80" y="233.35000000000002" width="1.7" height="357.0" fill="#235c3d"/></svg><div class="t" style="left:44.76px;top:165.81px;font-size:12.46px;color:#404040;transform:scaleX(1.000);">A</div><div class="t" style="left:97.65px;top:165.81px;font-size:12.46px;color:#2f7350;transform:scaleX(1.000);">B</div><div class="t" style="left:150.76px;top:165.96px;font-size:12.29px;color:#2f7350;transform:scaleX(1.014);">C</div><div class="t" style="left:203.99px;top:165.81px;font-size:12.46px;color:#2f7350;transform:scaleX(1.000);">D</div><div class="t" style="left:257.67px;top:165.81px;font-size:12.46px;color:#2f7350;transform:scaleX(1.000);">E</div><div class="t" style="left:311.37px;top:165.81px;font-size:12.46px;color:#2f7350;transform:scaleX(1.000);">F</div><div class="t" style="left:364.07px;top:165.96px;font-size:12.29px;color:#2f7350;transform:scaleX(1.014);">G</div><div class="t" style="left:417.65px;top:165.81px;font-size:12.46px;color:#2f7350;transform:scaleX(1.000);">H</div><div class="t" style="left:473.79px;top:165.81px;font-size:12.46px;color:#2f7350;transform:scaleX(1.000);">I</div><div class="t" style="left:526.12px;top:165.81px;font-size:12.46px;color:#2f7350;transform:scaleX(1.000);">J</div><div class="t" style="left:577.64px;top:165.81px;font-size:12.46px;color:#2f7350;transform:scaleX(1.000);">K</div><div class="t" style="left:631.81px;top:165.81px;font-size:12.46px;color:#2f7350;transform:scaleX(1.000);">L</div><div class="t" style="left:683.77px;top:165.81px;font-size:12.46px;color:#2f7350;transform:scaleX(1.000);">M</div><div class="t" style="left:737.81px;top:165.81px;font-size:12.46px;color:#404040;transform:scaleX(1.000);">N</div><div class="t" style="left:790.83px;top:165.96px;font-size:12.29px;color:#404040;transform:scaleX(1.014);">O</div><div class="t" style="left:844.69px;top:165.81px;font-size:12.46px;color:#404040;transform:scaleX(1.000);">P</div><div class="t" style="left:897.55px;top:165.96px;font-size:12.29px;color:#404040;transform:scaleX(1.014);">Q</div><div class="t" style="left:951.03px;top:165.81px;font-size:12.46px;color:#404040;transform:scaleX(1.000);">R</div><div class="t" style="left:1004.96px;top:165.96px;font-size:12.29px;color:#404040;transform:scaleX(1.014);">S</div><div class="t" style="left:1058.66px;top:165.81px;font-size:12.46px;color:#404040;transform:scaleX(1.000);">T</div><div class="t" style="left:1111.33px;top:165.81px;font-size:12.46px;color:#404040;transform:scaleX(1.000);">U</div><div class="t" style="left:1165.04px;top:165.81px;font-size:12.46px;color:#404040;transform:scaleX(1.000);">V</div><div class="t" style="left:1216.65px;top:165.81px;font-size:12.46px;color:#404040;transform:scaleX(1.000);">W</div><div class="t" style="left:8.02px;top:183.78px;font-size:12.17px;color:#404040;transform:scaleX(0.920);">1</div><div class="t" style="left:8.19px;top:201.78px;font-size:12.00px;color:#404040;transform:scaleX(0.933);">2</div><div class="t" style="left:8.19px;top:219.62px;font-size:12.00px;color:#404040;transform:scaleX(0.933);">3</div><div class="t" style="left:8.25px;top:237.33px;font-size:12.17px;color:#2f7350;transform:scaleX(0.920);">4</div><div class="t" style="left:8.19px;top:255.18px;font-size:12.17px;color:#2f7350;transform:scaleX(0.920);">5</div><div class="t" style="left:8.14px;top:273.18px;font-size:12.00px;color:#2f7350;transform:scaleX(0.933);">6</div><div class="t" style="left:8.19px;top:290.88px;font-size:12.17px;color:#2f7350;transform:scaleX(0.920);">7</div><div class="t" style="left:8.16px;top:308.88px;font-size:12.00px;color:#2f7350;transform:scaleX(0.933);">8</div><div class="t" style="left:8.19px;top:326.73px;font-size:12.00px;color:#2f7350;transform:scaleX(0.933);">9</div><div class="t" style="left:4.86px;top:344.58px;font-size:12.00px;color:#2f7350;transform:scaleX(0.933);">10</div><div class="t" style="left:5.34px;top:362.28px;font-size:12.17px;color:#2f7350;transform:scaleX(0.920);">11</div><div class="t" style="left:4.94px;top:380.28px;font-size:12.00px;color:#2f7350;transform:scaleX(0.933);">12</div><div class="t" style="left:4.89px;top:398.12px;font-size:12.00px;color:#2f7350;transform:scaleX(0.933);">13</div><div class="t" style="left:4.83px;top:415.83px;font-size:12.17px;color:#2f7350;transform:scaleX(0.920);">14</div><div class="t" style="left:4.89px;top:433.68px;font-size:12.17px;color:#2f7350;transform:scaleX(0.920);">15</div><div class="t" style="left:4.89px;top:451.68px;font-size:12.00px;color:#2f7350;transform:scaleX(0.933);">16</div><div class="t" style="left:4.94px;top:469.38px;font-size:12.17px;color:#2f7350;transform:scaleX(0.920);">17</div><div class="t" style="left:4.89px;top:487.38px;font-size:12.00px;color:#2f7350;transform:scaleX(0.933);">18</div><div class="t" style="left:4.92px;top:505.23px;font-size:12.00px;color:#2f7350;transform:scaleX(0.933);">19</div><div class="t" style="left:5.00px;top:523.08px;font-size:12.00px;color:#2f7350;transform:scaleX(0.933);">20</div><div class="t" style="left:5.06px;top:540.92px;font-size:12.00px;color:#2f7350;transform:scaleX(0.933);">21</div><div class="t" style="left:5.08px;top:558.78px;font-size:12.00px;color:#2f7350;transform:scaleX(0.933);">22</div><div class="t" style="left:5.03px;top:576.62px;font-size:12.00px;color:#2f7350;transform:scaleX(0.933);">23</div><div class="t" style="left:4.97px;top:594.48px;font-size:12.00px;color:#404040;transform:scaleX(0.933);">24</div><div class="t" style="left:5.03px;top:612.33px;font-size:12.00px;color:#404040;transform:scaleX(0.933);">25</div><div class="t" style="left:5.03px;top:630.18px;font-size:12.00px;color:#404040;transform:scaleX(0.933);">26</div><div class="t" style="left:5.08px;top:648.03px;font-size:12.00px;color:#404040;transform:scaleX(0.933);">27</div><div class="t" style="left:5.03px;top:665.88px;font-size:12.00px;color:#404040;transform:scaleX(0.933);">28</div><div class="a" style="left:1263.0px;top:162.7px;width:17.0px;height:515.5999999999999px;background:#f0f0f0;border-left:1px solid #dcdcdc"></div><svg class="a" style="left:0;top:0" width="1280" height="720"><path d="M1267.5,174 L1271.5,168.5 L1275.5,174 Z" fill="#707070"/><rect x="1268.3" y="178" width="6.7" height="467" rx="3.3" fill="#6f6f6f"/><path d="M1267.5,669.5 L1271.5,675 L1275.5,669.5 Z" fill="#707070"/></svg><div class="a" style="left:0;top:678.3px;width:1280px;height:41.700000000000045px;background:#f0f0f0;border-top:1px solid #d8d8d8"></div><div class="a" style="left:0;top:679.3px;width:1280px;height:21.200000000000045px;background:#f4f4f4;border-bottom:1px solid #fafafa"></div><div class="a" style="left:68.8px;top:678.3px;width:52.3px;height:19.3px;background:#fff;border-left:1px solid #d0d0d0;border-right:1px solid #d0d0d0"></div><div class="a" style="left:68.8px;top:696px;width:52.3px;height:1.8px;background:#217346"></div><div class="t" style="left:76.57px;top:681.33px;font-size:11.72px;color:#217346;font-weight:bold;transform:scaleX(0.942);">Sheet1</div><svg class="a" style="left:0;top:0" width="1280" height="720"><path d="M22,686.5 L19,689.3 L22,692" fill="#c8c8c8" stroke="#c8c8c8" stroke-width="0.6"/><path d="M37.5,686.5 L40.5,689.3 L37.5,692" fill="#c8c8c8" stroke="#c8c8c8" stroke-width="0.6"/><circle cx="150" cy="689.8" r="6.5" fill="none" stroke="#606060" stroke-width="0.9"/><path d="M146.5,689.8 H153.5 M150,686.3 V693.3" stroke="#404040" stroke-width="1"/><circle cx="767" cy="685.5" r="0.8" fill="#8a8a8a"/><circle cx="767" cy="689.2" r="0.8" fill="#8a8a8a"/><circle cx="767" cy="693" r="0.8" fill="#8a8a8a"/><rect x="1040" y="684.9" width="189.8" height="7.4" rx="3.7" fill="#6f6f6f"/><path d="M1255.5,684.5 L1260.5,688.5 L1255.5,692.5 Z" fill="#707070"/><rect x="47.2" y="705.2" width="11" height="10.8" fill="none" stroke="#606060" stroke-width="0.9"/><rect x="47.2" y="705.2" width="11" height="2" fill="#909090"/><circle cx="55" cy="712.5" r="2.8" fill="#fff" stroke="#404040" stroke-width="0.9"/><circle cx="55" cy="712.5" r="1.2" fill="#404040"/><circle cx="78.3" cy="705.6" r="1.3" fill="none" stroke="#404040" stroke-width="0.9"/><path d="M74,707.8 C75,705.8 77,707.2 78.3,707.2 C79.6,707.2 81.6,705.8 83,707.8 M75.6,708.6 C76.9,710 76.6,713 75.6,716.5 M81,708.6 C80.5,709.5 80.3,710.5 80.3,711.6 M78.6,713.2 L81.3,716.3 L85.3,711.4" fill="none" stroke="#404040" stroke-width="0.95" stroke-linecap="round"/><path d="M1040,710.5 H1230 M1234,710.5 H1241 M1237.5,707 V714" stroke="#707070" stroke-width="0.9"/></svg><div class="t" style="left:5.58px;top:705.89px;font-size:9.66px;color:#333333;transform:scaleX(0.864);">Ready</div><div class="t" style="left:87.50px;top:705.89px;font-size:9.66px;color:#333333;transform:scaleX(0.912);">Accessibility: Good to go</div><div class="t" style="left:1252.10px;top:705.60px;font-size:10.00px;color:#333333;transform:scaleX(0.804);">100%</div><div class="a" style="left:247.2px;top:514.3px;width:376.5px;height:99.3px;background:#b4c7e7;border:3px solid #e4101a"></div><div class="t" style="left:258.59px;top:524.25px;font-size:21.00px;color:#0a0a0a;transform:scaleX(1.044);-webkit-text-stroke:0;">When</div><div class="t" style="left:322.29px;top:524.25px;font-size:21.00px;color:#0a0a0a;transform:scaleX(1.045);-webkit-text-stroke:0;">you</div><div class="t" style="left:363.04px;top:524.25px;font-size:21.00px;color:#0a0a0a;transform:scaleX(1.062);-webkit-text-stroke:0;">have</div><div class="t" style="left:411.33px;top:524.25px;font-size:21.00px;color:#0a0a0a;transform:scaleX(1.163);-webkit-text-stroke:0;">found</div><div class="t" style="left:477.46px;top:524.25px;font-size:21.00px;color:#0a0a0a;transform:scaleX(1.085);-webkit-text-stroke:0;">the</div><div class="t" style="left:515.57px;top:524.25px;font-size:21.00px;color:#0a0a0a;transform:scaleX(1.110);-webkit-text-stroke:0;">color</div><div class="t" style="left:256.76px;top:553.35px;font-size:21.00px;color:#0a0a0a;transform:scaleX(1.115);-webkit-text-stroke:0;">combination</div><div class="t" style="left:383.21px;top:553.35px;font-size:21.00px;color:#0a0a0a;transform:scaleX(1.242);-webkit-text-stroke:0;">that</div><div class="t" style="left:431.29px;top:553.35px;font-size:21.00px;color:#0a0a0a;transform:scaleX(1.067);-webkit-text-stroke:0;">you</div><div class="t" style="left:471.36px;top:553.35px;font-size:21.00px;color:#0a0a0a;transform:scaleX(1.125);-webkit-text-stroke:0;">like,</div><div class="t" style="left:517.06px;top:553.35px;font-size:21.00px;color:#0a0a0a;transform:scaleX(1.064);-webkit-text-stroke:0;">just</div><div class="t" style="left:557.82px;top:553.35px;font-size:21.00px;color:#0a0a0a;transform:scaleX(1.045);-webkit-text-stroke:0;">click</div><div class="t" style="left:256.76px;top:582.25px;font-size:21.00px;color:#0a0a0a;transform:scaleX(1.113);-webkit-text-stroke:0;">on</div><div class="t" style="left:287.30px;top:582.25px;font-size:21.00px;color:#0a0a0a;transform:scaleX(1.317);-webkit-text-stroke:0;">it.</div><div class="a" style="left:778.5px;top:109.5px;width:417.5px;height:606.5px;background:#fff;border:1px solid #d0d0d0;border-radius:0 0 4px 4px;box-shadow:0 2px 5px rgba(0,0,0,0.16)"></div><div class="t" style="left:791.37px;top:120.46px;font-size:9.93px;color:#262626;font-weight:bold;transform:scaleX(0.979);">Light</div><div class="t" style="left:791.12px;top:304.66px;font-size:9.93px;color:#262626;font-weight:bold;transform:scaleX(1.047);">Medium</div><div class="t" style="left:791.27px;top:537.66px;font-size:9.93px;color:#262626;font-weight:bold;transform:scaleX(0.984);">Dark</div><svg class="a" style="left:0;top:0" width="1280" height="720"><rect x="781" y="293.8" width="400" height="1" fill="#e6e6e6"/><rect x="781" y="527.8" width="400" height="1" fill="#e6e6e6"/><rect x="779" y="654.3" width="416" height="1" fill="#e0e0e0"/><g transform="translate(783.30,142.00)"><rect x="0" y="8.28" width="50.8" height="8.28" fill="#d9d9d9"/><rect x="0" y="24.84" width="50.8" height="8.28" fill="#d9d9d9"/><rect x="0" y="0.05" width="50.8" height="1.1" fill="#404040"/><rect x="0" y="7.78" width="50.8" height="1.0" fill="#404040"/><rect x="0" y="40.25" width="50.8" height="1.1" fill="#404040"/><rect x="2.60" y="3.29" width="5.3" height="1.7" fill="#858585"/><rect x="12.44" y="3.29" width="5.3" height="1.7" fill="#858585"/><rect x="22.28" y="3.29" width="5.3" height="1.7" fill="#858585"/><rect x="32.12" y="3.29" width="5.3" height="1.7" fill="#858585"/><rect x="41.96" y="3.29" width="5.3" height="1.7" fill="#858585"/><rect x="2.60" y="11.57" width="5.3" height="1.7" fill="#4a4a4a"/><rect x="12.44" y="11.57" width="5.3" height="1.7" fill="#4a4a4a"/><rect x="22.28" y="11.57" width="5.3" height="1.7" fill="#4a4a4a"/><rect x="32.12" y="11.57" width="5.3" height="1.7" fill="#4a4a4a"/><rect x="41.96" y="11.57" width="5.3" height="1.7" fill="#4a4a4a"/><rect x="2.60" y="19.85" width="5.3" height="1.7" fill="#4a4a4a"/><rect x="12.44" y="19.85" width="5.3" height="1.7" fill="#4a4a4a"/><rect x="22.28" y="19.85" width="5.3" height="1.7" fill="#4a4a4a"/><rect x="32.12" y="19.85" width="5.3" height="1.7" fill="#4a4a4a"/><rect x="41.96" y="19.85" width="5.3" height="1.7" fill="#4a4a4a"/><rect x="2.60" y="28.13" width="5.3" height="1.7" fill="#4a4a4a"/><rect x="12.44" y="28.13" width="5.3" height="1.7" fill="#4a4a4a"/><rect x="22.28" y="28.13" width="5.3" height="1.7" fill="#4a4a4a"/><rect x="32.12" y="28.13" width="5.3" height="1.7" fill="#4a4a4a"/><rect x="41.96" y="28.13" width="5.3" height="1.7" fill="#4a4a4a"/><rect x="2.60" y="36.41" width="5.3" height="1.7" fill="#4a4a4a"/><rect x="12.44" y="36.41" width="5.3" height="1.7" fill="#4a4a4a"/><rect x="22.28" y="36.41" width="5.3" height="1.7" fill="#4a4a4a"/><rect x="32.12" y="36.41" width="5.3" height="1.7" fill="#4a4a4a"/><rect x="41.96" y="36.41" width="5.3" height="1.7" fill="#4a4a4a"/></g><g transform="translate(840.75,142.00)"><rect x="0" y="8.28" width="50.8" height="8.28" fill="#d9e1f2"/><rect x="0" y="24.84" width="50.8" height="8.28" fill="#d9e1f2"/><rect x="0" y="0.05" width="50.8" height="1.1" fill="#8ea9db"/><rect x="0" y="7.78" width="50.8" height="1.0" fill="#8ea9db"/><rect x="0" y="40.25" width="50.8" height="1.1" fill="#8ea9db"/><rect x="2.60" y="3.29" width="5.3" height="1.7" fill="#a4b2cc"/><rect x="12.44" y="3.29" width="5.3" height="1.7" fill="#a4b2cc"/><rect x="22.28" y="3.29" width="5.3" height="1.7" fill="#a4b2cc"/><rect x="32.12" y="3.29" width="5.3" height="1.7" fill="#a4b2cc"/><rect x="41.96" y="3.29" width="5.3" height="1.7" fill="#a4b2cc"/><rect x="2.60" y="11.57" width="5.3" height="1.7" fill="#7a8cb0"/><rect x="12.44" y="11.57" width="5.3" height="1.7" fill="#7a8cb0"/><rect x="22.28" y="11.57" width="5.3" height="1.7" fill="#7a8cb0"/><rect x="32.12" y="11.57" width="5.3" height="1.7" fill="#7a8cb0"/><rect x="41.96" y="11.57" width="5.3" height="1.7" fill="#7a8cb0"/><rect x="2.60" y="19.85" width="5.3" height="1.7" fill="#7a8cb0"/><rect x="12.44" y="19.85" width="5.3" height="1.7" fill="#7a8cb0"/><rect x="22.28" y="19.85" width="5.3" height="1.7" fill="#7a8cb0"/><rect x="32.12" y="19.85" width="5.3" height="1.7" fill="#7a8cb0"/><rect x="41.96" y="19.85" width="5.3" height="1.7" fill="#7a8cb0"/><rect x="2.60" y="28.13" width="5.3" height="1.7" fill="#7a8cb0"/><rect x="12.44" y="28.13" width="5.3" height="1.7" fill="#7a8cb0"/><rect x="22.28" y="28.13" width="5.3" height="1.7" fill="#7a8cb0"/><rect x="32.12" y="28.13" width="5.3" height="1.7" fill="#7a8cb0"/><rect x="41.96" y="28.13" width="5.3" height="1.7" fill="#7a8cb0"/><rect x="2.60" y="36.41" width="5.3" height="1.7" fill="#7a8cb0"/><rect x="12.44" y="36.41" width="5.3" height="1.7" fill="#7a8cb0"/><rect x="22.28" y="36.41" width="5.3" height="1.7" fill="#7a8cb0"/><rect x="32.12" y="36.41" width="5.3" height="1.7" fill="#7a8cb0"/><rect x="41.96" y="36.41" width="5.3" height="1.7" fill="#7a8cb0"/></g><g transform="translate(898.20,142.00)"><rect x="0" y="8.28" width="50.8" height="8.28" fill="#fce4d6"/><rect x="0" y="24.84" width="50.8" height="8.28" fill="#fce4d6"/><rect x="0" y="0.05" width="50.8" height="1.1" fill="#f4b084"/><rect x="0" y="7.78" width="50.8" height="1.0" fill="#f4b084"/><rect x="0" y="40.25" width="50.8" height="1.1" fill="#f4b084"/><rect x="2.60" y="3.29" width="5.3" height="1.7" fill="#d4ac90"/><rect x="12.44" y="3.29" width="5.3" height="1.7" fill="#d4ac90"/><rect x="22.28" y="3.29" width="5.3" height="1.7" fill="#d4ac90"/><rect x="32.12" y="3.29" width="5.3" height="1.7" fill="#d4ac90"/><rect x="41.96" y="3.29" width="5.3" height="1.7" fill="#d4ac90"/><rect x="2.60" y="11.57" width="5.3" height="1.7" fill="#b88a68"/><rect x="12.44" y="11.57" width="5.3" height="1.7" fill="#b88a68"/><rect x="22.28" y="11.57" width="5.3" height="1.7" fill="#b88a68"/><rect x="32.12" y="11.57" width="5.3" height="1.7" fill="#b88a68"/><rect x="41.96" y="11.57" width="5.3" height="1.7" fill="#b88a68"/><rect x="2.60" y="19.85" width="5.3" height="1.7" fill="#b88a68"/><rect x="12.44" y="19.85" width="5.3" height="1.7" fill="#b88a68"/><rect x="22.28" y="19.85" width="5.3" height="1.7" fill="#b88a68"/><rect x="32.12" y="19.85" width="5.3" height="1.7" fill="#b88a68"/><rect x="41.96" y="19.85" width="5.3" height="1.7" fill="#b88a68"/><rect x="2.60" y="28.13" width="5.3" height="1.7" fill="#b88a68"/><rect x="12.44" y="28.13" width="5.3" height="1.7" fill="#b88a68"/><rect x="22.28" y="28.13" width="5.3" height="1.7" fill="#b88a68"/><rect x="32.12" y="28.13" width="5.3" height="1.7" fill="#b88a68"/><rect x="41.96" y="28.13" width="5.3" height="1.7" fill="#b88a68"/><rect x="2.60" y="36.41" width="5.3" height="1.7" fill="#b88a68"/><rect x="12.44" y="36.41" width="5.3" height="1.7" fill="#b88a68"/><rect x="22.28" y="36.41" width="5.3" height="1.7" fill="#b88a68"/><rect x="32.12" y="36.41" width="5.3" height="1.7" fill="#b88a68"/><rect x="41.96" y="36.41" width="5.3" height="1.7" fill="#b88a68"/></g><g transform="translate(955.65,142.00)"><rect x="0" y="8.28" width="50.8" height="8.28" fill="#ededed"/><rect x="0" y="24.84" width="50.8" height="8.28" fill="#ededed"/><rect x="0" y="0.05" width="50.8" height="1.1" fill="#c9c9c9"/><rect x="0" y="7.78" width="50.8" height="1.0" fill="#c9c9c9"/><rect x="0" y="40.25" width="50.8" height="1.1" fill="#c9c9c9"/><rect x="2.60" y="3.29" width="5.3" height="1.7" fill="#ababab"/><rect x="12.44" y="3.29" width="5.3" height="1.7" fill="#ababab"/><rect x="22.28" y="3.29" width="5.3" height="1.7" fill="#ababab"/><rect x="32.12" y="3.29" width="5.3" height="1.7" fill="#ababab"/><rect x="41.96" y="3.29" width="5.3" height="1.7" fill="#ababab"/><rect x="2.60" y="11.57" width="5.3" height="1.7" fill="#8a8a8a"/><rect x="12.44" y="11.57" width="5.3" height="1.7" fill="#8a8a8a"/><rect x="22.28" y="11.57" width="5.3" height="1.7" fill="#8a8a8a"/><rect x="32.12" y="11.57" width="5.3" height="1.7" fill="#8a8a8a"/><rect x="41.96" y="11.57" width="5.3" height="1.7" fill="#8a8a8a"/><rect x="2.60" y="19.85" width="5.3" height="1.7" fill="#8a8a8a"/><rect x="12.44" y="19.85" width="5.3" height="1.7" fill="#8a8a8a"/><rect x="22.28" y="19.85" width="5.3" height="1.7" fill="#8a8a8a"/><rect x="32.12" y="19.85" width="5.3" height="1.7" fill="#8a8a8a"/><rect x="41.96" y="19.85" width="5.3" height="1.7" fill="#8a8a8a"/><rect x="2.60" y="28.13" width="5.3" height="1.7" fill="#8a8a8a"/><rect x="12.44" y="28.13" width="5.3" height="1.7" fill="#8a8a8a"/><rect x="22.28" y="28.13" width="5.3" height="1.7" fill="#8a8a8a"/><rect x="32.12" y="28.13" width="5.3" height="1.7" fill="#8a8a8a"/><rect x="41.96" y="28.13" width="5.3" height="1.7" fill="#8a8a8a"/><rect x="2.60" y="36.41" width="5.3" height="1.7" fill="#8a8a8a"/><rect x="12.44" y="36.41" width="5.3" height="1.7" fill="#8a8a8a"/><rect x="22.28" y="36.41" width="5.3" height="1.7" fill="#8a8a8a"/><rect x="32.12" y="36.41" width="5.3" height="1.7" fill="#8a8a8a"/><rect x="41.96" y="36.41" width="5.3" height="1.7" fill="#8a8a8a"/></g><g transform="translate(1013.10,142.00)"><rect x="0" y="8.28" width="50.8" height="8.28" fill="#fff2cc"/><rect x="0" y="24.84" width="50.8" height="8.28" fill="#fff2cc"/><rect x="0" y="0.05" width="50.8" height="1.1" fill="#ffd966"/><rect x="0" y="7.78" width="50.8" height="1.0" fill="#ffd966"/><rect x="0" y="40.25" width="50.8" height="1.1" fill="#ffd966"/><rect x="2.60" y="3.29" width="5.3" height="1.7" fill="#ccbc80"/><rect x="12.44" y="3.29" width="5.3" height="1.7" fill="#ccbc80"/><rect x="22.28" y="3.29" width="5.3" height="1.7" fill="#ccbc80"/><rect x="32.12" y="3.29" width="5.3" height="1.7" fill="#ccbc80"/><rect x="41.96" y="3.29" width="5.3" height="1.7" fill="#ccbc80"/><rect x="2.60" y="11.57" width="5.3" height="1.7" fill="#b0a060"/><rect x="12.44" y="11.57" width="5.3" height="1.7" fill="#b0a060"/><rect x="22.28" y="11.57" width="5.3" height="1.7" fill="#b0a060"/><rect x="32.12" y="11.57" width="5.3" height="1.7" fill="#b0a060"/><rect x="41.96" y="11.57" width="5.3" height="1.7" fill="#b0a060"/><rect x="2.60" y="19.85" width="5.3" height="1.7" fill="#b0a060"/><rect x="12.44" y="19.85" width="5.3" height="1.7" fill="#b0a060"/><rect x="22.28" y="19.85" width="5.3" height="1.7" fill="#b0a060"/><rect x="32.12" y="19.85" width="5.3" height="1.7" fill="#b0a060"/><rect x="41.96" y="19.85" width="5.3" height="1.7" fill="#b0a060"/><rect x="2.60" y="28.13" width="5.3" height="1.7" fill="#b0a060"/><rect x="12.44" y="28.13" width="5.3" height="1.7" fill="#b0a060"/><rect x="22.28" y="28.13" width="5.3" height="1.7" fill="#b0a060"/><rect x="32.12" y="28.13" width="5.3" height="1.7" fill="#b0a060"/><rect x="41.96" y="28.13" width="5.3" height="1.7" fill="#b0a060"/><rect x="2.60" y="36.41" width="5.3" height="1.7" fill="#b0a060"/><rect x="12.44" y="36.41" width="5.3" height="1.7" fill="#b0a060"/><rect x="22.28" y="36.41" width="5.3" height="1.7" fill="#b0a060"/><rect x="32.12" y="36.41" width="5.3" height="1.7" fill="#b0a060"/><rect x="41.96" y="36.41" width="5.3" height="1.7" fill="#b0a060"/></g><g transform="translate(1070.55,142.00)"><rect x="0" y="8.28" width="50.8" height="8.28" fill="#ddebf7"/><rect x="0" y="24.84" width="50.8" height="8.28" fill="#ddebf7"/><rect x="0" y="0.05" width="50.8" height="1.1" fill="#9bc2e6"/><rect x="0" y="7.78" width="50.8" height="1.0" fill="#9bc2e6"/><rect x="0" y="40.25" width="50.8" height="1.1" fill="#9bc2e6"/><rect x="2.60" y="3.29" width="5.3" height="1.7" fill="#9cb8d4"/><rect x="12.44" y="3.29" width="5.3" height="1.7" fill="#9cb8d4"/><rect x="22.28" y="3.29" width="5.3" height="1.7" fill="#9cb8d4"/><rect x="32.12" y="3.29" width="5.3" height="1.7" fill="#9cb8d4"/><rect x="41.96" y="3.29" width="5.3" height="1.7" fill="#9cb8d4"/><rect x="2.60" y="11.57" width="5.3" height="1.7" fill="#7898bc"/><rect x="12.44" y="11.57" width="5.3" height="1.7" fill="#7898bc"/><rect x="22.28" y="11.57" width="5.3" height="1.7" fill="#7898bc"/><rect x="32.12" y="11.57" width="5.3" height="1.7" fill="#7898bc"/><rect x="41.96" y="11.57" width="5.3" height="1.7" fill="#7898bc"/><rect x="2.60" y="19.85" width="5.3" height="1.7" fill="#7898bc"/><rect x="12.44" y="19.85" width="5.3" height="1.7" fill="#7898bc"/><rect x="22.28" y="19.85" width="5.3" height="1.7" fill="#7898bc"/><rect x="32.12" y="19.85" width="5.3" height="1.7" fill="#7898bc"/><rect x="41.96" y="19.85" width="5.3" height="1.7" fill="#7898bc"/><rect x="2.60" y="28.13" width="5.3" height="1.7" fill="#7898bc"/><rect x="12.44" y="28.13" width="5.3" height="1.7" fill="#7898bc"/><rect x="22.28" y="28.13" width="5.3" height="1.7" fill="#7898bc"/><rect x="32.12" y="28.13" width="5.3" height="1.7" fill="#7898bc"/><rect x="41.96" y="28.13" width="5.3" height="1.7" fill="#7898bc"/><rect x="2.60" y="36.41" width="5.3" height="1.7" fill="#7898bc"/><rect x="12.44" y="36.41" width="5.3" height="1.7" fill="#7898bc"/><rect x="22.28" y="36.41" width="5.3" height="1.7" fill="#7898bc"/><rect x="32.12" y="36.41" width="5.3" height="1.7" fill="#7898bc"/><rect x="41.96" y="36.41" width="5.3" height="1.7" fill="#7898bc"/></g><g transform="translate(1128.00,142.00)"><rect x="0" y="8.28" width="50.8" height="8.28" fill="#e2efda"/><rect x="0" y="24.84" width="50.8" height="8.28" fill="#e2efda"/><rect x="0" y="0.05" width="50.8" height="1.1" fill="#a9d08e"/><rect x="0" y="7.78" width="50.8" height="1.0" fill="#a9d08e"/><rect x="0" y="40.25" width="50.8" height="1.1" fill="#a9d08e"/><rect x="2.60" y="3.29" width="5.3" height="1.7" fill="#a8c498"/><rect x="12.44" y="3.29" width="5.3" height="1.7" fill="#a8c498"/><rect x="22.28" y="3.29" width="5.3" height="1.7" fill="#a8c498"/><rect x="32.12" y="3.29" width="5.3" height="1.7" fill="#a8c498"/><rect x="41.96" y="3.29" width="5.3" height="1.7" fill="#a8c498"/><rect x="2.60" y="11.57" width="5.3" height="1.7" fill="#809a70"/><rect x="12.44" y="11.57" width="5.3" height="1.7" fill="#809a70"/><rect x="22.28" y="11.57" width="5.3" height="1.7" fill="#809a70"/><rect x="32.12" y="11.57" width="5.3" height="1.7" fill="#809a70"/><rect x="41.96" y="11.57" width="5.3" height="1.7" fill="#809a70"/><rect x="2.60" y="19.85" width="5.3" height="1.7" fill="#809a70"/><rect x="12.44" y="19.85" width="5.3" height="1.7" fill="#809a70"/><rect x="22.28" y="19.85" width="5.3" height="1.7" fill="#809a70"/><rect x="32.12" y="19.85" width="5.3" height="1.7" fill="#809a70"/><rect x="41.96" y="19.85" width="5.3" height="1.7" fill="#809a70"/><rect x="2.60" y="28.13" width="5.3" height="1.7" fill="#809a70"/><rect x="12.44" y="28.13" width="5.3" height="1.7" fill="#809a70"/><rect x="22.28" y="28.13" width="5.3" height="1.7" fill="#809a70"/><rect x="32.12" y="28.13" width="5.3" height="1.7" fill="#809a70"/><rect x="41.96" y="28.13" width="5.3" height="1.7" fill="#809a70"/><rect x="2.60" y="36.41" width="5.3" height="1.7" fill="#809a70"/><rect x="12.44" y="36.41" width="5.3" height="1.7" fill="#809a70"/><rect x="22.28" y="36.41" width="5.3" height="1.7" fill="#809a70"/><rect x="32.12" y="36.41" width="5.3" height="1.7" fill="#809a70"/><rect x="41.96" y="36.41" width="5.3" height="1.7" fill="#809a70"/></g><g transform="translate(783.30,191.00)"><rect x="0" y="0.00" width="50.8" height="8.28" fill="#000000"/><rect x="0" y="16.06" width="50.8" height="1.0" fill="#404040"/><rect x="0" y="24.34" width="50.8" height="1.0" fill="#404040"/><rect x="0" y="32.62" width="50.8" height="1.0" fill="#404040"/><rect x="0.5" y="0.5" width="49.80" height="40.40" fill="none" stroke="#303030" stroke-width="1.0"/><rect x="2.60" y="3.29" width="5.3" height="1.7" fill="#a6a6a6"/><rect x="12.44" y="3.29" width="5.3" height="1.7" fill="#a6a6a6"/><rect x="22.28" y="3.29" width="5.3" height="1.7" fill="#a6a6a6"/><rect x="32.12" y="3.29" width="5.3" height="1.7" fill="#a6a6a6"/><rect x="41.96" y="3.29" width="5.3" height="1.7" fill="#a6a6a6"/><rect x="2.60" y="11.57" width="5.3" height="1.7" fill="#555555"/><rect x="12.44" y="11.57" width="5.3" height="1.7" fill="#555555"/><rect x="22.28" y="11.57" width="5.3" height="1.7" fill="#555555"/><rect x="32.12" y="11.57" width="5.3" height="1.7" fill="#555555"/><rect x="41.96" y="11.57" width="5.3" height="1.7" fill="#555555"/><rect x="2.60" y="19.85" width="5.3" height="1.7" fill="#555555"/><rect x="12.44" y="19.85" width="5.3" height="1.7" fill="#555555"/><rect x="22.28" y="19.85" width="5.3" height="1.7" fill="#555555"/><rect x="32.12" y="19.85" width="5.3" height="1.7" fill="#555555"/><rect x="41.96" y="19.85" width="5.3" height="1.7" fill="#555555"/><rect x="2.60" y="28.13" width="5.3" height="1.7" fill="#555555"/><rect x="12.44" y="28.13" width="5.3" height="1.7" fill="#555555"/><rect x="22.28" y="28.13" width="5.3" height="1.7" fill="#555555"/><rect x="32.12" y="28.13" width="5.3" height="1.7" fill="#555555"/><rect x="41.96" y="28.13" width="5.3" height="1.7" fill="#555555"/><rect x="2.60" y="36.41" width="5.3" height="1.7" fill="#555555"/><rect x="12.44" y="36.41" width="5.3" height="1.7" fill="#555555"/><rect x="22.28" y="36.41" width="5.3" height="1.7" fill="#555555"/><rect x="32.12" y="36.41" width="5.3" height="1.7" fill="#555555"/><rect x="41.96" y="36.41" width="5.3" height="1.7" fill="#555555"/></g><g transform="translate(840.75,191.00)"><rect x="0" y="0.00" width="50.8" height="8.28" fill="#4472c4"/><rect x="0" y="16.06" width="50.8" height="1.0" fill="#8ea9db"/><rect x="0" y="24.34" width="50.8" height="1.0" fill="#8ea9db"/><rect x="0" y="32.62" width="50.8" height="1.0" fill="#8ea9db"/><rect x="0.5" y="0.5" width="49.80" height="40.40" fill="none" stroke="#8ea9db" stroke-width="1.0"/><rect x="2.60" y="3.29" width="5.3" height="1.7" fill="#f0f0f0"/><rect x="12.44" y="3.29" width="5.3" height="1.7" fill="#f0f0f0"/><rect x="22.28" y="3.29" width="5.3" height="1.7" fill="#f0f0f0"/><rect x="32.12" y="3.29" width="5.3" height="1.7" fill="#f0f0f0"/><rect x="41.96" y="3.29" width="5.3" height="1.7" fill="#f0f0f0"/><rect x="2.60" y="11.57" width="5.3" height="1.7" fill="#555555"/><rect x="12.44" y="11.57" width="5.3" height="1.7" fill="#555555"/><rect x="22.28" y="11.57" width="5.3" height="1.7" fill="#555555"/><rect x="32.12" y="11.57" width="5.3" height="1.7" fill="#555555"/><rect x="41.96" y="11.57" width="5.3" height="1.7" fill="#555555"/><rect x="2.60" y="19.85" width="5.3" height="1.7" fill="#555555"/><rect x="12.44" y="19.85" width="5.3" height="1.7" fill="#555555"/><rect x="22.28" y="19.85" width="5.3" height="1.7" fill="#555555"/><rect x="32.12" y="19.85" width="5.3" height="1.7" fill="#555555"/><rect x="41.96" y="19.85" width="5.3" height="1.7" fill="#555555"/><rect x="2.60" y="28.13" width="5.3" height="1.7" fill="#555555"/><rect x="12.44" y="28.13" width="5.3" height="1.7" fill="#555555"/><rect x="22.28" y="28.13" width="5.3" height="1.7" fill="#555555"/><rect x="32.12" y="28.13" width="5.3" height="1.7" fill="#555555"/><rect x="41.96" y="28.13" width="5.3" height="1.7" fill="#555555"/><rect x="2.60" y="36.41" width="5.3" height="1.7" fill="#555555"/><rect x="12.44" y="36.41" width="5.3" height="1.7" fill="#555555"/><rect x="22.28" y="36.41" width="5.3" height="1.7" fill="#555555"/><rect x="32.12" y="36.41" width="5.3" height="1.7" fill="#555555"/><rect x="41.96" y="36.41" width="5.3" height="1.7" fill="#555555"/></g><g transform="translate(898.20,191.00)"><rect x="0" y="0.00" width="50.8" height="8.28" fill="#ed7d31"/><rect x="0" y="16.06" width="50.8" height="1.0" fill="#f4b084"/><rect x="0" y="24.34" width="50.8" height="1.0" fill="#f4b084"/><rect x="0" y="32.62" width="50.8" height="1.0" fill="#f4b084"/><rect x="0.5" y="0.5" width="49.80" height="40.40" fill="none" stroke="#f4b084" stroke-width="1.0"/><rect x="2.60" y="3.29" width="5.3" height="1.7" fill="#f0f0f0"/><rect x="12.44" y="3.29" width="5.3" height="1.7" fill="#f0f0f0"/><rect x="22.28" y="3.29" width="5.3" height="1.7" fill="#f0f0f0"/><rect x="32.12" y="3.29" width="5.3" height="1.7" fill="#f0f0f0"/><rect x="41.96" y="3.29" width="5.3" height="1.7" fill="#f0f0f0"/><rect x="2.60" y="11.57" width="5.3" height="1.7" fill="#555555"/><rect x="12.44" y="11.57" width="5.3" height="1.7" fill="#555555"/><rect x="22.28" y="11.57" width="5.3" height="1.7" fill="#555555"/><rect x="32.12" y="11.57" width="5.3" height="1.7" fill="#555555"/><rect x="41.96" y="11.57" width="5.3" height="1.7" fill="#555555"/><rect x="2.60" y="19.85" width="5.3" height="1.7" fill="#555555"/><rect x="12.44" y="19.85" width="5.3" height="1.7" fill="#555555"/><rect x="22.28" y="19.85" width="5.3" height="1.7" fill="#555555"/><rect x="32.12" y="19.85" width="5.3" height="1.7" fill="#555555"/><rect x="41.96" y="19.85" width="5.3" height="1.7" fill="#555555"/><rect x="2.60" y="28.13" width="5.3" height="1.7" fill="#555555"/><rect x="12.44" y="28.13" width="5.3" height="1.7" fill="#555555"/><rect x="22.28" y="28.13" width="5.3" height="1.7" fill="#555555"/><rect x="32.12" y="28.13" width="5.3" height="1.7" fill="#555555"/><rect x="41.96" y="28.13" width="5.3" height="1.7" fill="#555555"/><rect x="2.60" y="36.41" width="5.3" height="1.7" fill="#555555"/><rect x="12.44" y="36.41" width="5.3" height="1.7" fill="#555555"/><rect x="22.28" y="36.41" width="5.3" height="1.7" fill="#555555"/><rect x="32.12" y="36.41" width="5.3" height="1.7" fill="#555555"/><rect x="41.96" y="36.41" width="5.3" height="1.7" fill="#555555"/></g><g transform="translate(955.65,191.00)"><rect x="0" y="0.00" width="50.8" height="8.28" fill="#a5a5a5"/><rect x="0" y="16.06" width="50.8" height="1.0" fill="#c9c9c9"/><rect x="0" y="24.34" width="50.8" height="1.0" fill="#c9c9c9"/><rect x="0" y="32.62" width="50.8" height="1.0" fill="#c9c9c9"/><rect x="0.5" y="0.5" width="49.80" height="40.40" fill="none" stroke="#c9c9c9" stroke-width="1.0"/><rect x="2.60" y="3.29" width="5.3" height="1.7" fill="#f0f0f0"/><rect x="12.44" y="3.29" width="5.3" height="1.7" fill="#f0f0f0"/><rect x="22.28" y="3.29" width="5.3" height="1.7" fill="#f0f0f0"/><rect x="32.12" y="3.29" width="5.3" height="1.7" fill="#f0f0f0"/><rect x="41.96" y="3.29" width="5.3" height="1.7" fill="#f0f0f0"/><rect x="2.60" y="11.57" width="5.3" height="1.7" fill="#555555"/><rect x="12.44" y="11.57" width="5.3" height="1.7" fill="#555555"/><rect x="22.28" y="11.57" width="5.3" height="1.7" fill="#555555"/><rect x="32.12" y="11.57" width="5.3" height="1.7" fill="#555555"/><rect x="41.96" y="11.57" width="5.3" height="1.7" fill="#555555"/><rect x="2.60" y="19.85" width="5.3" height="1.7" fill="#555555"/><rect x="12.44" y="19.85" width="5.3" height="1.7" fill="#555555"/><rect x="22.28" y="19.85" width="5.3" height="1.7" fill="#555555"/><rect x="32.12" y="19.85" width="5.3" height="1.7" fill="#555555"/><rect x="41.96" y="19.85" width="5.3" height="1.7" fill="#555555"/><rect x="2.60" y="28.13" width="5.3" height="1.7" fill="#555555"/><rect x="12.44" y="28.13" width="5.3" height="1.7" fill="#555555"/><rect x="22.28" y="28.13" width="5.3" height="1.7" fill="#555555"/><rect x="32.12" y="28.13" width="5.3" height="1.7" fill="#555555"/><rect x="41.96" y="28.13" width="5.3" height="1.7" fill="#555555"/><rect x="2.60" y="36.41" width="5.3" height="1.7" fill="#555555"/><rect x="12.44" y="36.41" width="5.3" height="1.7" fill="#555555"/><rect x="22.28" y="36.41" width="5.3" height="1.7" fill="#555555"/><rect x="32.12" y="36.41" width="5.3" height="1.7" fill="#555555"/><rect x="41.96" y="36.41" width="5.3" height="1.7" fill="#555555"/></g><g transform="translate(1013.10,191.00)"><rect x="0" y="0.00" width="50.8" height="8.28" fill="#ffc000"/><rect x="0" y="16.06" width="50.8" height="1.0" fill="#ffd966"/><rect x="0" y="24.34" width="50.8" height="1.0" fill="#ffd966"/><rect x="0" y="32.62" width="50.8" height="1.0" fill="#ffd966"/><rect x="0.5" y="0.5" width="49.80" height="40.40" fill="none" stroke="#ffd966" stroke-width="1.0"/><rect x="2.60" y="3.29" width="5.3" height="1.7" fill="#f0f0f0"/><rect x="12.44" y="3.29" width="5.3" height="1.7" fill="#f0f0f0"/><rect x="22.28" y="3.29" width="5.3" height="1.7" fill="#f0f0f0"/><rect x="32.12" y="3.29" width="5.3" height="1.7" fill="#f0f0f0"/><rect x="41.96" y="3.29" width="5.3" height="1.7" fill="#f0f0f0"/><rect x="2.60" y="11.57" width="5.3" height="1.7" fill="#555555"/><rect x="12.44" y="11.57" width="5.3" height="1.7" fill="#555555"/><rect x="22.28" y="11.57" width="5.3" height="1.7" fill="#555555"/><rect x="32.12" y="11.57" width="5.3" height="1.7" fill="#555555"/><rect x="41.96" y="11.57" width="5.3" height="1.7" fill="#555555"/><rect x="2.60" y="19.85" width="5.3" height="1.7" fill="#555555"/><rect x="12.44" y="19.85" width="5.3" height="1.7" fill="#555555"/><rect x="22.28" y="19.85" width="5.3" height="1.7" fill="#555555"/><rect x="32.12" y="19.85" width="5.3" height="1.7" fill="#555555"/><rect x="41.96" y="19.85" width="5.3" height="1.7" fill="#555555"/><rect x="2.60" y="28.13" width="5.3" height="1.7" fill="#555555"/><rect x="12.44" y="28.13" width="5.3" height="1.7" fill="#555555"/><rect x="22.28" y="28.13" width="5.3" height="1.7" fill="#555555"/><rect x="32.12" y="28.13" width="5.3" height="1.7" fill="#555555"/><rect x="41.96" y="28.13" width="5.3" height="1.7" fill="#555555"/><rect x="2.60" y="36.41" width="5.3" height="1.7" fill="#555555"/><rect x="12.44" y="36.41" width="5.3" height="1.7" fill="#555555"/><rect x="22.28" y="36.41" width="5.3" height="1.7" fill="#555555"/><rect x="32.12" y="36.41" width="5.3" height="1.7" fill="#555555"/><rect x="41.96" y="36.41" width="5.3" height="1.7" fill="#555555"/></g><g transform="translate(1070.55,191.00)"><rect x="0" y="0.00" width="50.8" height="8.28" fill="#5b9bd5"/><rect x="0" y="16.06" width="50.8" height="1.0" fill="#9bc2e6"/><rect x="0" y="24.34" width="50.8" height="1.0" fill="#9bc2e6"/><rect x="0" y="32.62" width="50.8" height="1.0" fill="#9bc2e6"/><rect x="0.5" y="0.5" width="49.80" height="40.40" fill="none" stroke="#9bc2e6" stroke-width="1.0"/><rect x="2.60" y="3.29" width="5.3" height="1.7" fill="#f0f0f0"/><rect x="12.44" y="3.29" width="5.3" height="1.7" fill="#f0f0f0"/><rect x="22.28" y="3.29" width="5.3" height="1.7" fill="#f0f0f0"/><rect x="32.12" y="3.29" width="5.3" height="1.7" fill="#f0f0f0"/><rect x="41.96" y="3.29" width="5.3" height="1.7" fill="#f0f0f0"/><rect x="2.60" y="11.57" width="5.3" height="1.7" fill="#555555"/><rect x="12.44" y="11.57" width="5.3" height="1.7" fill="#555555"/><rect x="22.28" y="11.57" width="5.3" height="1.7" fill="#555555"/><rect x="32.12" y="11.57" width="5.3" height="1.7" fill="#555555"/><rect x="41.96" y="11.57" width="5.3" height="1.7" fill="#555555"/><rect x="2.60" y="19.85" width="5.3" height="1.7" fill="#555555"/><rect x="12.44" y="19.85" width="5.3" height="1.7" fill="#555555"/><rect x="22.28" y="19.85" width="5.3" height="1.7" fill="#555555"/><rect x="32.12" y="19.85" width="5.3" height="1.7" fill="#555555"/><rect x="41.96" y="19.85" width="5.3" height="1.7" fill="#555555"/><rect x="2.60" y="28.13" width="5.3" height="1.7" fill="#555555"/><rect x="12.44" y="28.13" width="5.3" height="1.7" fill="#555555"/><rect x="22.28" y="28.13" width="5.3" height="1.7" fill="#555555"/><rect x="32.12" y="28.13" width="5.3" height="1.7" fill="#555555"/><rect x="41.96" y="28.13" width="5.3" height="1.7" fill="#555555"/><rect x="2.60" y="36.41" width="5.3" height="1.7" fill="#555555"/><rect x="12.44" y="36.41" width="5.3" height="1.7" fill="#555555"/><rect x="22.28" y="36.41" width="5.3" height="1.7" fill="#555555"/><rect x="32.12" y="36.41" width="5.3" height="1.7" fill="#555555"/><rect x="41.96" y="36.41" width="5.3" height="1.7" fill="#555555"/></g><g transform="translate(1128.00,191.00)"><rect x="0" y="0.00" width="50.8" height="8.28" fill="#70ad47"/><rect x="0" y="16.06" width="50.8" height="1.0" fill="#a9d08e"/><rect x="0" y="24.34" width="50.8" height="1.0" fill="#a9d08e"/><rect x="0" y="32.62" width="50.8" height="1.0" fill="#a9d08e"/><rect x="0.5" y="0.5" width="49.80" height="40.40" fill="none" stroke="#a9d08e" stroke-width="1.0"/><rect x="2.60" y="3.29" width="5.3" height="1.7" fill="#f0f0f0"/><rect x="12.44" y="3.29" width="5.3" height="1.7" fill="#f0f0f0"/><rect x="22.28" y="3.29" width="5.3" height="1.7" fill="#f0f0f0"/><rect x="32.12" y="3.29" width="5.3" height="1.7" fill="#f0f0f0"/><rect x="41.96" y="3.29" width="5.3" height="1.7" fill="#f0f0f0"/><rect x="2.60" y="11.57" width="5.3" height="1.7" fill="#555555"/><rect x="12.44" y="11.57" width="5.3" height="1.7" fill="#555555"/><rect x="22.28" y="11.57" width="5.3" height="1.7" fill="#555555"/><rect x="32.12" y="11.57" width="5.3" height="1.7" fill="#555555"/><rect x="41.96" y="11.57" width="5.3" height="1.7" fill="#555555"/><rect x="2.60" y="19.85" width="5.3" height="1.7" fill="#555555"/><rect x="12.44" y="19.85" width="5.3" height="1.7" fill="#555555"/><rect x="22.28" y="19.85" width="5.3" height="1.7" fill="#555555"/><rect x="32.12" y="19.85" width="5.3" height="1.7" fill="#555555"/><rect x="41.96" y="19.85" width="5.3" height="1.7" fill="#555555"/><rect x="2.60" y="28.13" width="5.3" height="1.7" fill="#555555"/><rect x="12.44" y="28.13" width="5.3" height="1.7" fill="#555555"/><rect x="22.28" y="28.13" width="5.3" height="1.7" fill="#555555"/><rect x="32.12" y="28.13" width="5.3" height="1.7" fill="#555555"/><rect x="41.96" y="28.13" width="5.3" height="1.7" fill="#555555"/><rect x="2.60" y="36.41" width="5.3" height="1.7" fill="#555555"/><rect x="12.44" y="36.41" width="5.3" height="1.7" fill="#555555"/><rect x="22.28" y="36.41" width="5.3" height="1.7" fill="#555555"/><rect x="32.12" y="36.41" width="5.3" height="1.7" fill="#555555"/><rect x="41.96" y="36.41" width="5.3" height="1.7" fill="#555555"/></g><g transform="translate(783.30,240.20)"><rect x="0" y="8.28" width="50.8" height="8.28" fill="#d9d9d9"/><rect x="0" y="24.84" width="50.8" height="8.28" fill="#d9d9d9"/><rect x="0" y="7.78" width="50.8" height="1.0" fill="#303030"/><rect x="0" y="16.06" width="50.8" height="1.0" fill="#303030"/><rect x="0" y="24.34" width="50.8" height="1.0" fill="#303030"/><rect x="0" y="32.62" width="50.8" height="1.0" fill="#303030"/><rect x="9.66" y="0" width="1.0" height="41.4" fill="#303030"/><rect x="19.82" y="0" width="1.0" height="41.4" fill="#303030"/><rect x="29.98" y="0" width="1.0" height="41.4" fill="#303030"/><rect x="40.14" y="0" width="1.0" height="41.4" fill="#303030"/><rect x="0.5" y="0.5" width="49.80" height="40.40" fill="none" stroke="#303030" stroke-width="1.0"/><rect x="2.60" y="3.29" width="5.3" height="1.7" fill="#808080"/><rect x="12.44" y="3.29" width="5.3" height="1.7" fill="#808080"/><rect x="22.28" y="3.29" width="5.3" height="1.7" fill="#808080"/><rect x="32.12" y="3.29" width="5.3" height="1.7" fill="#808080"/><rect x="41.96" y="3.29" width="5.3" height="1.7" fill="#808080"/><rect x="2.60" y="11.57" width="5.3" height="1.7" fill="#555555"/><rect x="12.44" y="11.57" width="5.3" height="1.7" fill="#555555"/><rect x="22.28" y="11.57" width="5.3" height="1.7" fill="#555555"/><rect x="32.12" y="11.57" width="5.3" height="1.7" fill="#555555"/><rect x="41.96" y="11.57" width="5.3" height="1.7" fill="#555555"/><rect x="2.60" y="19.85" width="5.3" height="1.7" fill="#555555"/><rect x="12.44" y="19.85" width="5.3" height="1.7" fill="#555555"/><rect x="22.28" y="19.85" width="5.3" height="1.7" fill="#555555"/><rect x="32.12" y="19.85" width="5.3" height="1.7" fill="#555555"/><rect x="41.96" y="19.85" width="5.3" height="1.7" fill="#555555"/><rect x="2.60" y="28.13" width="5.3" height="1.7" fill="#555555"/><rect x="12.44" y="28.13" width="5.3" height="1.7" fill="#555555"/><rect x="22.28" y="28.13" width="5.3" height="1.7" fill="#555555"/><rect x="32.12" y="28.13" width="5.3" height="1.7" fill="#555555"/><rect x="41.96" y="28.13" width="5.3" height="1.7" fill="#555555"/><rect x="2.60" y="36.41" width="5.3" height="1.7" fill="#555555"/><rect x="12.44" y="36.41" width="5.3" height="1.7" fill="#555555"/><rect x="22.28" y="36.41" width="5.3" height="1.7" fill="#555555"/><rect x="32.12" y="36.41" width="5.3" height="1.7" fill="#555555"/><rect x="41.96" y="36.41" width="5.3" height="1.7" fill="#555555"/></g><g transform="translate(840.75,240.20)"><rect x="0" y="8.28" width="50.8" height="8.28" fill="#d9e1f2"/><rect x="0" y="24.84" width="50.8" height="8.28" fill="#d9e1f2"/><rect x="0" y="7.78" width="50.8" height="1.0" fill="#8ea9db"/><rect x="0" y="16.06" width="50.8" height="1.0" fill="#8ea9db"/><rect x="0" y="24.34" width="50.8" height="1.0" fill="#8ea9db"/><rect x="0" y="32.62" width="50.8" height="1.0" fill="#8ea9db"/><rect x="9.66" y="0" width="1.0" height="41.4" fill="#8ea9db"/><rect x="19.82" y="0" width="1.0" height="41.4" fill="#8ea9db"/><rect x="29.98" y="0" width="1.0" height="41.4" fill="#8ea9db"/><rect x="40.14" y="0" width="1.0" height="41.4" fill="#8ea9db"/><rect x="0.5" y="0.5" width="49.80" height="40.40" fill="none" stroke="#8ea9db" stroke-width="1.0"/><rect x="2.60" y="3.29" width="5.3" height="1.7" fill="#808080"/><rect x="12.44" y="3.29" width="5.3" height="1.7" fill="#808080"/><rect x="22.28" y="3.29" width="5.3" height="1.7" fill="#808080"/><rect x="32.12" y="3.29" width="5.3" height="1.7" fill="#808080"/><rect x="41.96" y="3.29" width="5.3" height="1.7" fill="#808080"/><rect x="2.60" y="11.57" width="5.3" height="1.7" fill="#555555"/><rect x="12.44" y="11.57" width="5.3" height="1.7" fill="#555555"/><rect x="22.28" y="11.57" width="5.3" height="1.7" fill="#555555"/><rect x="32.12" y="11.57" width="5.3" height="1.7" fill="#555555"/><rect x="41.96" y="11.57" width="5.3" height="1.7" fill="#555555"/><rect x="2.60" y="19.85" width="5.3" height="1.7" fill="#555555"/><rect x="12.44" y="19.85" width="5.3" height="1.7" fill="#555555"/><rect x="22.28" y="19.85" width="5.3" height="1.7" fill="#555555"/><rect x="32.12" y="19.85" width="5.3" height="1.7" fill="#555555"/><rect x="41.96" y="19.85" width="5.3" height="1.7" fill="#555555"/><rect x="2.60" y="28.13" width="5.3" height="1.7" fill="#555555"/><rect x="12.44" y="28.13" width="5.3" height="1.7" fill="#555555"/><rect x="22.28" y="28.13" width="5.3" height="1.7" fill="#555555"/><rect x="32.12" y="28.13" width="5.3" height="1.7" fill="#555555"/><rect x="41.96" y="28.13" width="5.3" height="1.7" fill="#555555"/><rect x="2.60" y="36.41" width="5.3" height="1.7" fill="#555555"/><rect x="12.44" y="36.41" width="5.3" height="1.7" fill="#555555"/><rect x="22.28" y="36.41" width="5.3" height="1.7" fill="#555555"/><rect x="32.12" y="36.41" width="5.3" height="1.7" fill="#555555"/><rect x="41.96" y="36.41" width="5.3" height="1.7" fill="#555555"/></g><g transform="translate(898.20,240.20)"><rect x="0" y="8.28" width="50.8" height="8.28" fill="#fce4d6"/><rect x="0" y="24.84" width="50.8" height="8.28" fill="#fce4d6"/><rect x="0" y="7.78" width="50.8" height="1.0" fill="#f4b084"/><rect x="0" y="16.06" width="50.8" height="1.0" fill="#f4b084"/><rect x="0" y="24.34" width="50.8" height="1.0" fill="#f4b084"/><rect x="0" y="32.62" width="50.8" height="1.0" fill="#f4b084"/><rect x="9.66" y="0" width="1.0" height="41.4" fill="#f4b084"/><rect x="19.82" y="0" width="1.0" height="41.4" fill="#f4b084"/><rect x="29.98" y="0" width="1.0" height="41.4" fill="#f4b084"/><rect x="40.14" y="0" width="1.0" height="41.4" fill="#f4b084"/><rect x="0.5" y="0.5" width="49.80" height="40.40" fill="none" stroke="#f4b084" stroke-width="1.0"/><rect x="2.60" y="3.29" width="5.3" height="1.7" fill="#808080"/><rect x="12.44" y="3.29" width="5.3" height="1.7" fill="#808080"/><rect x="22.28" y="3.29" width="5.3" height="1.7" fill="#808080"/><rect x="32.12" y="3.29" width="5.3" height="1.7" fill="#808080"/><rect x="41.96" y="3.29" width="5.3" height="1.7" fill="#808080"/><rect x="2.60" y="11.57" width="5.3" height="1.7" fill="#555555"/><rect x="12.44" y="11.57" width="5.3" height="1.7" fill="#555555"/><rect x="22.28" y="11.57" width="5.3" height="1.7" fill="#555555"/><rect x="32.12" y="11.57" width="5.3" height="1.7" fill="#555555"/><rect x="41.96" y="11.57" width="5.3" height="1.7" fill="#555555"/><rect x="2.60" y="19.85" width="5.3" height="1.7" fill="#555555"/><rect x="12.44" y="19.85" width="5.3" height="1.7" fill="#555555"/><rect x="22.28" y="19.85" width="5.3" height="1.7" fill="#555555"/><rect x="32.12" y="19.85" width="5.3" height="1.7" fill="#555555"/><rect x="41.96" y="19.85" width="5.3" height="1.7" fill="#555555"/><rect x="2.60" y="28.13" width="5.3" height="1.7" fill="#555555"/><rect x="12.44" y="28.13" width="5.3" height="1.7" fill="#555555"/><rect x="22.28" y="28.13" width="5.3" height="1.7" fill="#555555"/><rect x="32.12" y="28.13" width="5.3" height="1.7" fill="#555555"/><rect x="41.96" y="28.13" width="5.3" height="1.7" fill="#555555"/><rect x="2.60" y="36.41" width="5.3" height="1.7" fill="#555555"/><rect x="12.44" y="36.41" width="5.3" height="1.7" fill="#555555"/><rect x="22.28" y="36.41" width="5.3" height="1.7" fill="#555555"/><rect x="32.12" y="36.41" width="5.3" height="1.7" fill="#555555"/><rect x="41.96" y="36.41" width="5.3" height="1.7" fill="#555555"/></g><g transform="translate(955.65,240.20)"><rect x="0" y="8.28" width="50.8" height="8.28" fill="#ededed"/><rect x="0" y="24.84" width="50.8" height="8.28" fill="#ededed"/><rect x="0" y="7.78" width="50.8" height="1.0" fill="#c9c9c9"/><rect x="0" y="16.06" width="50.8" height="1.0" fill="#c9c9c9"/><rect x="0" y="24.34" width="50.8" height="1.0" fill="#c9c9c9"/><rect x="0" y="32.62" width="50.8" height="1.0" fill="#c9c9c9"/><rect x="9.66" y="0" width="1.0" height="41.4" fill="#c9c9c9"/><rect x="19.82" y="0" width="1.0" height="41.4" fill="#c9c9c9"/><rect x="29.98" y="0" width="1.0" height="41.4" fill="#c9c9c9"/><rect x="40.14" y="0" width="1.0" height="41.4" fill="#c9c9c9"/><rect x="0.5" y="0.5" width="49.80" height="40.40" fill="none" stroke="#c9c9c9" stroke-width="1.0"/><rect x="2.60" y="3.29" width="5.3" height="1.7" fill="#808080"/><rect x="12.44" y="3.29" width="5.3" height="1.7" fill="#808080"/><rect x="22.28" y="3.29" width="5.3" height="1.7" fill="#808080"/><rect x="32.12" y="3.29" width="5.3" height="1.7" fill="#808080"/><rect x="41.96" y="3.29" width="5.3" height="1.7" fill="#808080"/><rect x="2.60" y="11.57" width="5.3" height="1.7" fill="#555555"/><rect x="12.44" y="11.57" width="5.3" height="1.7" fill="#555555"/><rect x="22.28" y="11.57" width="5.3" height="1.7" fill="#555555"/><rect x="32.12" y="11.57" width="5.3" height="1.7" fill="#555555"/><rect x="41.96" y="11.57" width="5.3" height="1.7" fill="#555555"/><rect x="2.60" y="19.85" width="5.3" height="1.7" fill="#555555"/><rect x="12.44" y="19.85" width="5.3" height="1.7" fill="#555555"/><rect x="22.28" y="19.85" width="5.3" height="1.7" fill="#555555"/><rect x="32.12" y="19.85" width="5.3" height="1.7" fill="#555555"/><rect x="41.96" y="19.85" width="5.3" height="1.7" fill="#555555"/><rect x="2.60" y="28.13" width="5.3" height="1.7" fill="#555555"/><rect x="12.44" y="28.13" width="5.3" height="1.7" fill="#555555"/><rect x="22.28" y="28.13" width="5.3" height="1.7" fill="#555555"/><rect x="32.12" y="28.13" width="5.3" height="1.7" fill="#555555"/><rect x="41.96" y="28.13" width="5.3" height="1.7" fill="#555555"/><rect x="2.60" y="36.41" width="5.3" height="1.7" fill="#555555"/><rect x="12.44" y="36.41" width="5.3" height="1.7" fill="#555555"/><rect x="22.28" y="36.41" width="5.3" height="1.7" fill="#555555"/><rect x="32.12" y="36.41" width="5.3" height="1.7" fill="#555555"/><rect x="41.96" y="36.41" width="5.3" height="1.7" fill="#555555"/></g><g transform="translate(1013.10,240.20)"><rect x="0" y="8.28" width="50.8" height="8.28" fill="#fff2cc"/><rect x="0" y="24.84" width="50.8" height="8.28" fill="#fff2cc"/><rect x="0" y="7.78" width="50.8" height="1.0" fill="#ffd966"/><rect x="0" y="16.06" width="50.8" height="1.0" fill="#ffd966"/><rect x="0" y="24.34" width="50.8" height="1.0" fill="#ffd966"/><rect x="0" y="32.62" width="50.8" height="1.0" fill="#ffd966"/><rect x="9.66" y="0" width="1.0" height="41.4" fill="#ffd966"/><rect x="19.82" y="0" width="1.0" height="41.4" fill="#ffd966"/><rect x="29.98" y="0" width="1.0" height="41.4" fill="#ffd966"/><rect x="40.14" y="0" width="1.0" height="41.4" fill="#ffd966"/><rect x="0.5" y="0.5" width="49.80" height="40.40" fill="none" stroke="#ffd966" stroke-width="1.0"/><rect x="2.60" y="3.29" width="5.3" height="1.7" fill="#808080"/><rect x="12.44" y="3.29" width="5.3" height="1.7" fill="#808080"/><rect x="22.28" y="3.29" width="5.3" height="1.7" fill="#808080"/><rect x="32.12" y="3.29" width="5.3" height="1.7" fill="#808080"/><rect x="41.96" y="3.29" width="5.3" height="1.7" fill="#808080"/><rect x="2.60" y="11.57" width="5.3" height="1.7" fill="#555555"/><rect x="12.44" y="11.57" width="5.3" height="1.7" fill="#555555"/><rect x="22.28" y="11.57" width="5.3" height="1.7" fill="#555555"/><rect x="32.12" y="11.57" width="5.3" height="1.7" fill="#555555"/><rect x="41.96" y="11.57" width="5.3" height="1.7" fill="#555555"/><rect x="2.60" y="19.85" width="5.3" height="1.7" fill="#555555"/><rect x="12.44" y="19.85" width="5.3" height="1.7" fill="#555555"/><rect x="22.28" y="19.85" width="5.3" height="1.7" fill="#555555"/><rect x="32.12" y="19.85" width="5.3" height="1.7" fill="#555555"/><rect x="41.96" y="19.85" width="5.3" height="1.7" fill="#555555"/><rect x="2.60" y="28.13" width="5.3" height="1.7" fill="#555555"/><rect x="12.44" y="28.13" width="5.3" height="1.7" fill="#555555"/><rect x="22.28" y="28.13" width="5.3" height="1.7" fill="#555555"/><rect x="32.12" y="28.13" width="5.3" height="1.7" fill="#555555"/><rect x="41.96" y="28.13" width="5.3" height="1.7" fill="#555555"/><rect x="2.60" y="36.41" width="5.3" height="1.7" fill="#555555"/><rect x="12.44" y="36.41" width="5.3" height="1.7" fill="#555555"/><rect x="22.28" y="36.41" width="5.3" height="1.7" fill="#555555"/><rect x="32.12" y="36.41" width="5.3" height="1.7" fill="#555555"/><rect x="41.96" y="36.41" width="5.3" height="1.7" fill="#555555"/></g><g transform="translate(1070.55,240.20)"><rect x="0" y="8.28" width="50.8" height="8.28" fill="#ddebf7"/><rect x="0" y="24.84" width="50.8" height="8.28" fill="#ddebf7"/><rect x="0" y="7.78" width="50.8" height="1.0" fill="#9bc2e6"/><rect x="0" y="16.06" width="50.8" height="1.0" fill="#9bc2e6"/><rect x="0" y="24.34" width="50.8" height="1.0" fill="#9bc2e6"/><rect x="0" y="32.62" width="50.8" height="1.0" fill="#9bc2e6"/><rect x="9.66" y="0" width="1.0" height="41.4" fill="#9bc2e6"/><rect x="19.82" y="0" width="1.0" height="41.4" fill="#9bc2e6"/><rect x="29.98" y="0" width="1.0" height="41.4" fill="#9bc2e6"/><rect x="40.14" y="0" width="1.0" height="41.4" fill="#9bc2e6"/><rect x="0.5" y="0.5" width="49.80" height="40.40" fill="none" stroke="#9bc2e6" stroke-width="1.0"/><rect x="2.60" y="3.29" width="5.3" height="1.7" fill="#808080"/><rect x="12.44" y="3.29" width="5.3" height="1.7" fill="#808080"/><rect x="22.28" y="3.29" width="5.3" height="1.7" fill="#808080"/><rect x="32.12" y="3.29" width="5.3" height="1.7" fill="#808080"/><rect x="41.96" y="3.29" width="5.3" height="1.7" fill="#808080"/><rect x="2.60" y="11.57" width="5.3" height="1.7" fill="#555555"/><rect x="12.44" y="11.57" width="5.3" height="1.7" fill="#555555"/><rect x="22.28" y="11.57" width="5.3" height="1.7" fill="#555555"/><rect x="32.12" y="11.57" width="5.3" height="1.7" fill="#555555"/><rect x="41.96" y="11.57" width="5.3" height="1.7" fill="#555555"/><rect x="2.60" y="19.85" width="5.3" height="1.7" fill="#555555"/><rect x="12.44" y="19.85" width="5.3" height="1.7" fill="#555555"/><rect x="22.28" y="19.85" width="5.3" height="1.7" fill="#555555"/><rect x="32.12" y="19.85" width="5.3" height="1.7" fill="#555555"/><rect x="41.96" y="19.85" width="5.3" height="1.7" fill="#555555"/><rect x="2.60" y="28.13" width="5.3" height="1.7" fill="#555555"/><rect x="12.44" y="28.13" width="5.3" height="1.7" fill="#555555"/><rect x="22.28" y="28.13" width="5.3" height="1.7" fill="#555555"/><rect x="32.12" y="28.13" width="5.3" height="1.7" fill="#555555"/><rect x="41.96" y="28.13" width="5.3" height="1.7" fill="#555555"/><rect x="2.60" y="36.41" width="5.3" height="1.7" fill="#555555"/><rect x="12.44" y="36.41" width="5.3" height="1.7" fill="#555555"/><rect x="22.28" y="36.41" width="5.3" height="1.7" fill="#555555"/><rect x="32.12" y="36.41" width="5.3" height="1.7" fill="#555555"/><rect x="41.96" y="36.41" width="5.3" height="1.7" fill="#555555"/></g><g transform="translate(1128.00,240.20)"><rect x="0" y="8.28" width="50.8" height="8.28" fill="#e2efda"/><rect x="0" y="24.84" width="50.8" height="8.28" fill="#e2efda"/><rect x="0" y="7.78" width="50.8" height="1.0" fill="#a9d08e"/><rect x="0" y="16.06" width="50.8" height="1.0" fill="#a9d08e"/><rect x="0" y="24.34" width="50.8" height="1.0" fill="#a9d08e"/><rect x="0" y="32.62" width="50.8" height="1.0" fill="#a9d08e"/><rect x="9.66" y="0" width="1.0" height="41.4" fill="#a9d08e"/><rect x="19.82" y="0" width="1.0" height="41.4" fill="#a9d08e"/><rect x="29.98" y="0" width="1.0" height="41.4" fill="#a9d08e"/><rect x="40.14" y="0" width="1.0" height="41.4" fill="#a9d08e"/><rect x="0.5" y="0.5" width="49.80" height="40.40" fill="none" stroke="#a9d08e" stroke-width="1.0"/><rect x="2.60" y="3.29" width="5.3" height="1.7" fill="#808080"/><rect x="12.44" y="3.29" width="5.3" height="1.7" fill="#808080"/><rect x="22.28" y="3.29" width="5.3" height="1.7" fill="#808080"/><rect x="32.12" y="3.29" width="5.3" height="1.7" fill="#808080"/><rect x="41.96" y="3.29" width="5.3" height="1.7" fill="#808080"/><rect x="2.60" y="11.57" width="5.3" height="1.7" fill="#555555"/><rect x="12.44" y="11.57" width="5.3" height="1.7" fill="#555555"/><rect x="22.28" y="11.57" width="5.3" height="1.7" fill="#555555"/><rect x="32.12" y="11.57" width="5.3" height="1.7" fill="#555555"/><rect x="41.96" y="11.57" width="5.3" height="1.7" fill="#555555"/><rect x="2.60" y="19.85" width="5.3" height="1.7" fill="#555555"/><rect x="12.44" y="19.85" width="5.3" height="1.7" fill="#555555"/><rect x="22.28" y="19.85" width="5.3" height="1.7" fill="#555555"/><rect x="32.12" y="19.85" width="5.3" height="1.7" fill="#555555"/><rect x="41.96" y="19.85" width="5.3" height="1.7" fill="#555555"/><rect x="2.60" y="28.13" width="5.3" height="1.7" fill="#555555"/><rect x="12.44" y="28.13" width="5.3" height="1.7" fill="#555555"/><rect x="22.28" y="28.13" width="5.3" height="1.7" fill="#555555"/><rect x="32.12" y="28.13" width="5.3" height="1.7" fill="#555555"/><rect x="41.96" y="28.13" width="5.3" height="1.7" fill="#555555"/><rect x="2.60" y="36.41" width="5.3" height="1.7" fill="#555555"/><rect x="12.44" y="36.41" width="5.3" height="1.7" fill="#555555"/><rect x="22.28" y="36.41" width="5.3" height="1.7" fill="#555555"/><rect x="32.12" y="36.41" width="5.3" height="1.7" fill="#555555"/><rect x="41.96" y="36.41" width="5.3" height="1.7" fill="#555555"/></g><g transform="translate(783.30,326.00)"><rect x="0" y="0.00" width="50.8" height="8.28" fill="#000000"/><rect x="0" y="8.28" width="50.8" height="8.28" fill="#d9d9d9"/><rect x="0" y="24.84" width="50.8" height="8.28" fill="#d9d9d9"/><rect x="0" y="16.06" width="50.8" height="1.0" fill="#404040"/><rect x="0" y="24.34" width="50.8" height="1.0" fill="#404040"/><rect x="0" y="32.62" width="50.8" height="1.0" fill="#404040"/><rect x="0.6" y="0.6" width="49.60" height="40.20" fill="none" stroke="#202020" stroke-width="1.2"/><rect x="2.60" y="3.29" width="5.3" height="1.7" fill="#d0d0d0"/><rect x="12.44" y="3.29" width="5.3" height="1.7" fill="#d0d0d0"/><rect x="22.28" y="3.29" width="5.3" height="1.7" fill="#d0d0d0"/><rect x="32.12" y="3.29" width="5.3" height="1.7" fill="#d0d0d0"/><rect x="41.96" y="3.29" width="5.3" height="1.7" fill="#d0d0d0"/><rect x="2.60" y="11.57" width="5.3" height="1.7" fill="#505050"/><rect x="12.44" y="11.57" width="5.3" height="1.7" fill="#505050"/><rect x="22.28" y="11.57" width="5.3" height="1.7" fill="#505050"/><rect x="32.12" y="11.57" width="5.3" height="1.7" fill="#505050"/><rect x="41.96" y="11.57" width="5.3" height="1.7" fill="#505050"/><rect x="2.60" y="19.85" width="5.3" height="1.7" fill="#505050"/><rect x="12.44" y="19.85" width="5.3" height="1.7" fill="#505050"/><rect x="22.28" y="19.85" width="5.3" height="1.7" fill="#505050"/><rect x="32.12" y="19.85" width="5.3" height="1.7" fill="#505050"/><rect x="41.96" y="19.85" width="5.3" height="1.7" fill="#505050"/><rect x="2.60" y="28.13" width="5.3" height="1.7" fill="#505050"/><rect x="12.44" y="28.13" width="5.3" height="1.7" fill="#505050"/><rect x="22.28" y="28.13" width="5.3" height="1.7" fill="#505050"/><rect x="32.12" y="28.13" width="5.3" height="1.7" fill="#505050"/><rect x="41.96" y="28.13" width="5.3" height="1.7" fill="#505050"/><rect x="2.60" y="36.41" width="5.3" height="1.7" fill="#505050"/><rect x="12.44" y="36.41" width="5.3" height="1.7" fill="#505050"/><rect x="22.28" y="36.41" width="5.3" height="1.7" fill="#505050"/><rect x="32.12" y="36.41" width="5.3" height="1.7" fill="#505050"/><rect x="41.96" y="36.41" width="5.3" height="1.7" fill="#505050"/></g><g transform="translate(840.75,326.00)"><rect x="0" y="0.00" width="50.8" height="8.28" fill="#4472c4"/><rect x="0" y="8.28" width="50.8" height="8.28" fill="#d9e1f2"/><rect x="0" y="24.84" width="50.8" height="8.28" fill="#d9e1f2"/><rect x="0" y="16.06" width="50.8" height="1.0" fill="#b4c6e7"/><rect x="0" y="24.34" width="50.8" height="1.0" fill="#b4c6e7"/><rect x="0" y="32.62" width="50.8" height="1.0" fill="#b4c6e7"/><rect x="0.5" y="0.5" width="49.80" height="40.40" fill="none" stroke="#8ea9db" stroke-width="1.0"/><rect x="2.60" y="3.29" width="5.3" height="1.7" fill="#eef2f8"/><rect x="12.44" y="3.29" width="5.3" height="1.7" fill="#eef2f8"/><rect x="22.28" y="3.29" width="5.3" height="1.7" fill="#eef2f8"/><rect x="32.12" y="3.29" width="5.3" height="1.7" fill="#eef2f8"/><rect x="41.96" y="3.29" width="5.3" height="1.7" fill="#eef2f8"/><rect x="2.60" y="11.57" width="5.3" height="1.7" fill="#505050"/><rect x="12.44" y="11.57" width="5.3" height="1.7" fill="#505050"/><rect x="22.28" y="11.57" width="5.3" height="1.7" fill="#505050"/><rect x="32.12" y="11.57" width="5.3" height="1.7" fill="#505050"/><rect x="41.96" y="11.57" width="5.3" height="1.7" fill="#505050"/><rect x="2.60" y="19.85" width="5.3" height="1.7" fill="#505050"/><rect x="12.44" y="19.85" width="5.3" height="1.7" fill="#505050"/><rect x="22.28" y="19.85" width="5.3" height="1.7" fill="#505050"/><rect x="32.12" y="19.85" width="5.3" height="1.7" fill="#505050"/><rect x="41.96" y="19.85" width="5.3" height="1.7" fill="#505050"/><rect x="2.60" y="28.13" width="5.3" height="1.7" fill="#505050"/><rect x="12.44" y="28.13" width="5.3" height="1.7" fill="#505050"/><rect x="22.28" y="28.13" width="5.3" height="1.7" fill="#505050"/><rect x="32.12" y="28.13" width="5.3" height="1.7" fill="#505050"/><rect x="41.96" y="28.13" width="5.3" height="1.7" fill="#505050"/><rect x="2.60" y="36.41" width="5.3" height="1.7" fill="#505050"/><rect x="12.44" y="36.41" width="5.3" height="1.7" fill="#505050"/><rect x="22.28" y="36.41" width="5.3" height="1.7" fill="#505050"/><rect x="32.12" y="36.41" width="5.3" height="1.7" fill="#505050"/><rect x="41.96" y="36.41" width="5.3" height="1.7" fill="#505050"/></g><g transform="translate(898.20,326.00)"><rect x="0" y="0.00" width="50.8" height="8.28" fill="#ed7d31"/><rect x="0" y="8.28" width="50.8" height="8.28" fill="#fce4d6"/><rect x="0" y="24.84" width="50.8" height="8.28" fill="#fce4d6"/><rect x="0" y="16.06" width="50.8" height="1.0" fill="#f8cbad"/><rect x="0" y="24.34" width="50.8" height="1.0" fill="#f8cbad"/><rect x="0" y="32.62" width="50.8" height="1.0" fill="#f8cbad"/><rect x="0.5" y="0.5" width="49.80" height="40.40" fill="none" stroke="#f4b084" stroke-width="1.0"/><rect x="2.60" y="3.29" width="5.3" height="1.7" fill="#eef2f8"/><rect x="12.44" y="3.29" width="5.3" height="1.7" fill="#eef2f8"/><rect x="22.28" y="3.29" width="5.3" height="1.7" fill="#eef2f8"/><rect x="32.12" y="3.29" width="5.3" height="1.7" fill="#eef2f8"/><rect x="41.96" y="3.29" width="5.3" height="1.7" fill="#eef2f8"/><rect x="2.60" y="11.57" width="5.3" height="1.7" fill="#505050"/><rect x="12.44" y="11.57" width="5.3" height="1.7" fill="#505050"/><rect x="22.28" y="11.57" width="5.3" height="1.7" fill="#505050"/><rect x="32.12" y="11.57" width="5.3" height="1.7" fill="#505050"/><rect x="41.96" y="11.57" width="5.3" height="1.7" fill="#505050"/><rect x="2.60" y="19.85" width="5.3" height="1.7" fill="#505050"/><rect x="12.44" y="19.85" width="5.3" height="1.7" fill="#505050"/><rect x="22.28" y="19.85" width="5.3" height="1.7" fill="#505050"/><rect x="32.12" y="19.85" width="5.3" height="1.7" fill="#505050"/><rect x="41.96" y="19.85" width="5.3" height="1.7" fill="#505050"/><rect x="2.60" y="28.13" width="5.3" height="1.7" fill="#505050"/><rect x="12.44" y="28.13" width="5.3" height="1.7" fill="#505050"/><rect x="22.28" y="28.13" width="5.3" height="1.7" fill="#505050"/><rect x="32.12" y="28.13" width="5.3" height="1.7" fill="#505050"/><rect x="41.96" y="28.13" width="5.3" height="1.7" fill="#505050"/><rect x="2.60" y="36.41" width="5.3" height="1.7" fill="#505050"/><rect x="12.44" y="36.41" width="5.3" height="1.7" fill="#505050"/><rect x="22.28" y="36.41" width="5.3" height="1.7" fill="#505050"/><rect x="32.12" y="36.41" width="5.3" height="1.7" fill="#505050"/><rect x="41.96" y="36.41" width="5.3" height="1.7" fill="#505050"/></g><g transform="translate(955.65,326.00)"><rect x="0" y="0.00" width="50.8" height="8.28" fill="#a5a5a5"/><rect x="0" y="8.28" width="50.8" height="8.28" fill="#ededed"/><rect x="0" y="24.84" width="50.8" height="8.28" fill="#ededed"/><rect x="0" y="16.06" width="50.8" height="1.0" fill="#dbdbdb"/><rect x="0" y="24.34" width="50.8" height="1.0" fill="#dbdbdb"/><rect x="0" y="32.62" width="50.8" height="1.0" fill="#dbdbdb"/><rect x="0.5" y="0.5" width="49.80" height="40.40" fill="none" stroke="#c9c9c9" stroke-width="1.0"/><rect x="2.60" y="3.29" width="5.3" height="1.7" fill="#eef2f8"/><rect x="12.44" y="3.29" width="5.3" height="1.7" fill="#eef2f8"/><rect x="22.28" y="3.29" width="5.3" height="1.7" fill="#eef2f8"/><rect x="32.12" y="3.29" width="5.3" height="1.7" fill="#eef2f8"/><rect x="41.96" y="3.29" width="5.3" height="1.7" fill="#eef2f8"/><rect x="2.60" y="11.57" width="5.3" height="1.7" fill="#505050"/><rect x="12.44" y="11.57" width="5.3" height="1.7" fill="#505050"/><rect x="22.28" y="11.57" width="5.3" height="1.7" fill="#505050"/><rect x="32.12" y="11.57" width="5.3" height="1.7" fill="#505050"/><rect x="41.96" y="11.57" width="5.3" height="1.7" fill="#505050"/><rect x="2.60" y="19.85" width="5.3" height="1.7" fill="#505050"/><rect x="12.44" y="19.85" width="5.3" height="1.7" fill="#505050"/><rect x="22.28" y="19.85" width="5.3" height="1.7" fill="#505050"/><rect x="32.12" y="19.85" width="5.3" height="1.7" fill="#505050"/><rect x="41.96" y="19.85" width="5.3" height="1.7" fill="#505050"/><rect x="2.60" y="28.13" width="5.3" height="1.7" fill="#505050"/><rect x="12.44" y="28.13" width="5.3" height="1.7" fill="#505050"/><rect x="22.28" y="28.13" width="5.3" height="1.7" fill="#505050"/><rect x="32.12" y="28.13" width="5.3" height="1.7" fill="#505050"/><rect x="41.96" y="28.13" width="5.3" height="1.7" fill="#505050"/><rect x="2.60" y="36.41" width="5.3" height="1.7" fill="#505050"/><rect x="12.44" y="36.41" width="5.3" height="1.7" fill="#505050"/><rect x="22.28" y="36.41" width="5.3" height="1.7" fill="#505050"/><rect x="32.12" y="36.41" width="5.3" height="1.7" fill="#505050"/><rect x="41.96" y="36.41" width="5.3" height="1.7" fill="#505050"/></g><g transform="translate(1013.10,326.00)"><rect x="0" y="0.00" width="50.8" height="8.28" fill="#ffc000"/><rect x="0" y="8.28" width="50.8" height="8.28" fill="#fff2cc"/><rect x="0" y="24.84" width="50.8" height="8.28" fill="#fff2cc"/><rect x="0" y="16.06" width="50.8" height="1.0" fill="#ffe699"/><rect x="0" y="24.34" width="50.8" height="1.0" fill="#ffe699"/><rect x="0" y="32.62" width="50.8" height="1.0" fill="#ffe699"/><rect x="0.5" y="0.5" width="49.80" height="40.40" fill="none" stroke="#ffd966" stroke-width="1.0"/><rect x="2.60" y="3.29" width="5.3" height="1.7" fill="#eef2f8"/><rect x="12.44" y="3.29" width="5.3" height="1.7" fill="#eef2f8"/><rect x="22.28" y="3.29" width="5.3" height="1.7" fill="#eef2f8"/><rect x="32.12" y="3.29" width="5.3" height="1.7" fill="#eef2f8"/><rect x="41.96" y="3.29" width="5.3" height="1.7" fill="#eef2f8"/><rect x="2.60" y="11.57" width="5.3" height="1.7" fill="#505050"/><rect x="12.44" y="11.57" width="5.3" height="1.7" fill="#505050"/><rect x="22.28" y="11.57" width="5.3" height="1.7" fill="#505050"/><rect x="32.12" y="11.57" width="5.3" height="1.7" fill="#505050"/><rect x="41.96" y="11.57" width="5.3" height="1.7" fill="#505050"/><rect x="2.60" y="19.85" width="5.3" height="1.7" fill="#505050"/><rect x="12.44" y="19.85" width="5.3" height="1.7" fill="#505050"/><rect x="22.28" y="19.85" width="5.3" height="1.7" fill="#505050"/><rect x="32.12" y="19.85" width="5.3" height="1.7" fill="#505050"/><rect x="41.96" y="19.85" width="5.3" height="1.7" fill="#505050"/><rect x="2.60" y="28.13" width="5.3" height="1.7" fill="#505050"/><rect x="12.44" y="28.13" width="5.3" height="1.7" fill="#505050"/><rect x="22.28" y="28.13" width="5.3" height="1.7" fill="#505050"/><rect x="32.12" y="28.13" width="5.3" height="1.7" fill="#505050"/><rect x="41.96" y="28.13" width="5.3" height="1.7" fill="#505050"/><rect x="2.60" y="36.41" width="5.3" height="1.7" fill="#505050"/><rect x="12.44" y="36.41" width="5.3" height="1.7" fill="#505050"/><rect x="22.28" y="36.41" width="5.3" height="1.7" fill="#505050"/><rect x="32.12" y="36.41" width="5.3" height="1.7" fill="#505050"/><rect x="41.96" y="36.41" width="5.3" height="1.7" fill="#505050"/></g><g transform="translate(1070.55,326.00)"><rect x="0" y="0.00" width="50.8" height="8.28" fill="#5b9bd5"/><rect x="0" y="8.28" width="50.8" height="8.28" fill="#ddebf7"/><rect x="0" y="24.84" width="50.8" height="8.28" fill="#ddebf7"/><rect x="0" y="16.06" width="50.8" height="1.0" fill="#bdd7ee"/><rect x="0" y="24.34" width="50.8" height="1.0" fill="#bdd7ee"/><rect x="0" y="32.62" width="50.8" height="1.0" fill="#bdd7ee"/><rect x="0.5" y="0.5" width="49.80" height="40.40" fill="none" stroke="#9bc2e6" stroke-width="1.0"/><rect x="2.60" y="3.29" width="5.3" height="1.7" fill="#eef2f8"/><rect x="12.44" y="3.29" width="5.3" height="1.7" fill="#eef2f8"/><rect x="22.28" y="3.29" width="5.3" height="1.7" fill="#eef2f8"/><rect x="32.12" y="3.29" width="5.3" height="1.7" fill="#eef2f8"/><rect x="41.96" y="3.29" width="5.3" height="1.7" fill="#eef2f8"/><rect x="2.60" y="11.57" width="5.3" height="1.7" fill="#505050"/><rect x="12.44" y="11.57" width="5.3" height="1.7" fill="#505050"/><rect x="22.28" y="11.57" width="5.3" height="1.7" fill="#505050"/><rect x="32.12" y="11.57" width="5.3" height="1.7" fill="#505050"/><rect x="41.96" y="11.57" width="5.3" height="1.7" fill="#505050"/><rect x="2.60" y="19.85" width="5.3" height="1.7" fill="#505050"/><rect x="12.44" y="19.85" width="5.3" height="1.7" fill="#505050"/><rect x="22.28" y="19.85" width="5.3" height="1.7" fill="#505050"/><rect x="32.12" y="19.85" width="5.3" height="1.7" fill="#505050"/><rect x="41.96" y="19.85" width="5.3" height="1.7" fill="#505050"/><rect x="2.60" y="28.13" width="5.3" height="1.7" fill="#505050"/><rect x="12.44" y="28.13" width="5.3" height="1.7" fill="#505050"/><rect x="22.28" y="28.13" width="5.3" height="1.7" fill="#505050"/><rect x="32.12" y="28.13" width="5.3" height="1.7" fill="#505050"/><rect x="41.96" y="28.13" width="5.3" height="1.7" fill="#505050"/><rect x="2.60" y="36.41" width="5.3" height="1.7" fill="#505050"/><rect x="12.44" y="36.41" width="5.3" height="1.7" fill="#505050"/><rect x="22.28" y="36.41" width="5.3" height="1.7" fill="#505050"/><rect x="32.12" y="36.41" width="5.3" height="1.7" fill="#505050"/><rect x="41.96" y="36.41" width="5.3" height="1.7" fill="#505050"/></g><g transform="translate(1128.00,326.00)"><rect x="0" y="0.00" width="50.8" height="8.28" fill="#70ad47"/><rect x="0" y="8.28" width="50.8" height="8.28" fill="#e2efda"/><rect x="0" y="24.84" width="50.8" height="8.28" fill="#e2efda"/><rect x="0" y="16.06" width="50.8" height="1.0" fill="#c6e0b4"/><rect x="0" y="24.34" width="50.8" height="1.0" fill="#c6e0b4"/><rect x="0" y="32.62" width="50.8" height="1.0" fill="#c6e0b4"/><rect x="0.5" y="0.5" width="49.80" height="40.40" fill="none" stroke="#a9d08e" stroke-width="1.0"/><rect x="2.60" y="3.29" width="5.3" height="1.7" fill="#eef2f8"/><rect x="12.44" y="3.29" width="5.3" height="1.7" fill="#eef2f8"/><rect x="22.28" y="3.29" width="5.3" height="1.7" fill="#eef2f8"/><rect x="32.12" y="3.29" width="5.3" height="1.7" fill="#eef2f8"/><rect x="41.96" y="3.29" width="5.3" height="1.7" fill="#eef2f8"/><rect x="2.60" y="11.57" width="5.3" height="1.7" fill="#505050"/><rect x="12.44" y="11.57" width="5.3" height="1.7" fill="#505050"/><rect x="22.28" y="11.57" width="5.3" height="1.7" fill="#505050"/><rect x="32.12" y="11.57" width="5.3" height="1.7" fill="#505050"/><rect x="41.96" y="11.57" width="5.3" height="1.7" fill="#505050"/><rect x="2.60" y="19.85" width="5.3" height="1.7" fill="#505050"/><rect x="12.44" y="19.85" width="5.3" height="1.7" fill="#505050"/><rect x="22.28" y="19.85" width="5.3" height="1.7" fill="#505050"/><rect x="32.12" y="19.85" width="5.3" height="1.7" fill="#505050"/><rect x="41.96" y="19.85" width="5.3" height="1.7" fill="#505050"/><rect x="2.60" y="28.13" width="5.3" height="1.7" fill="#505050"/><rect x="12.44" y="28.13" width="5.3" height="1.7" fill="#505050"/><rect x="22.28" y="28.13" width="5.3" height="1.7" fill="#505050"/><rect x="32.12" y="28.13" width="5.3" height="1.7" fill="#505050"/><rect x="41.96" y="28.13" width="5.3" height="1.7" fill="#505050"/><rect x="2.60" y="36.41" width="5.3" height="1.7" fill="#505050"/><rect x="12.44" y="36.41" width="5.3" height="1.7" fill="#505050"/><rect x="22.28" y="36.41" width="5.3" height="1.7" fill="#505050"/><rect x="32.12" y="36.41" width="5.3" height="1.7" fill="#505050"/><rect x="41.96" y="36.41" width="5.3" height="1.7" fill="#505050"/></g><g transform="translate(783.30,375.00)"><rect x="0" y="0.00" width="50.8" height="8.28" fill="#000000"/><rect x="0" y="8.28" width="50.8" height="8.28" fill="#a6a6a6"/><rect x="0" y="24.84" width="50.8" height="8.28" fill="#a6a6a6"/><rect x="0" y="16.56" width="50.8" height="8.28" fill="#d9d9d9"/><rect x="0" y="33.12" width="50.8" height="8.28" fill="#d9d9d9"/><rect x="0" y="7.68" width="50.8" height="1.2" fill="#ffffff"/><rect x="0" y="15.96" width="50.8" height="1.2" fill="#ffffff"/><rect x="0" y="24.24" width="50.8" height="1.2" fill="#ffffff"/><rect x="0" y="32.52" width="50.8" height="1.2" fill="#ffffff"/><rect x="9.56" y="0" width="1.2" height="41.4" fill="#ffffff"/><rect x="19.72" y="0" width="1.2" height="41.4" fill="#ffffff"/><rect x="29.88" y="0" width="1.2" height="41.4" fill="#ffffff"/><rect x="40.04" y="0" width="1.2" height="41.4" fill="#ffffff"/><rect x="2.60" y="3.29" width="5.3" height="1.7" fill="#e0e0e0"/><rect x="12.44" y="3.29" width="5.3" height="1.7" fill="#e0e0e0"/><rect x="22.28" y="3.29" width="5.3" height="1.7" fill="#e0e0e0"/><rect x="32.12" y="3.29" width="5.3" height="1.7" fill="#e0e0e0"/><rect x="41.96" y="3.29" width="5.3" height="1.7" fill="#e0e0e0"/><rect x="2.60" y="11.57" width="5.3" height="1.7" fill="#505050"/><rect x="12.44" y="11.57" width="5.3" height="1.7" fill="#505050"/><rect x="22.28" y="11.57" width="5.3" height="1.7" fill="#505050"/><rect x="32.12" y="11.57" width="5.3" height="1.7" fill="#505050"/><rect x="41.96" y="11.57" width="5.3" height="1.7" fill="#505050"/><rect x="2.60" y="19.85" width="5.3" height="1.7" fill="#505050"/><rect x="12.44" y="19.85" width="5.3" height="1.7" fill="#505050"/><rect x="22.28" y="19.85" width="5.3" height="1.7" fill="#505050"/><rect x="32.12" y="19.85" width="5.3" height="1.7" fill="#505050"/><rect x="41.96" y="19.85" width="5.3" height="1.7" fill="#505050"/><rect x="2.60" y="28.13" width="5.3" height="1.7" fill="#505050"/><rect x="12.44" y="28.13" width="5.3" height="1.7" fill="#505050"/><rect x="22.28" y="28.13" width="5.3" height="1.7" fill="#505050"/><rect x="32.12" y="28.13" width="5.3" height="1.7" fill="#505050"/><rect x="41.96" y="28.13" width="5.3" height="1.7" fill="#505050"/><rect x="2.60" y="36.41" width="5.3" height="1.7" fill="#505050"/><rect x="12.44" y="36.41" width="5.3" height="1.7" fill="#505050"/><rect x="22.28" y="36.41" width="5.3" height="1.7" fill="#505050"/><rect x="32.12" y="36.41" width="5.3" height="1.7" fill="#505050"/><rect x="41.96" y="36.41" width="5.3" height="1.7" fill="#505050"/></g><g transform="translate(840.75,375.00)"><rect x="0" y="0.00" width="50.8" height="8.28" fill="#4472c4"/><rect x="0" y="8.28" width="50.8" height="8.28" fill="#b4c6e7"/><rect x="0" y="24.84" width="50.8" height="8.28" fill="#b4c6e7"/><rect x="0" y="16.56" width="50.8" height="8.28" fill="#d9e1f2"/><rect x="0" y="33.12" width="50.8" height="8.28" fill="#d9e1f2"/><rect x="0" y="7.68" width="50.8" height="1.2" fill="#ffffff"/><rect x="0" y="15.96" width="50.8" height="1.2" fill="#ffffff"/><rect x="0" y="24.24" width="50.8" height="1.2" fill="#ffffff"/><rect x="0" y="32.52" width="50.8" height="1.2" fill="#ffffff"/><rect x="9.56" y="0" width="1.2" height="41.4" fill="#ffffff"/><rect x="19.72" y="0" width="1.2" height="41.4" fill="#ffffff"/><rect x="29.88" y="0" width="1.2" height="41.4" fill="#ffffff"/><rect x="40.04" y="0" width="1.2" height="41.4" fill="#ffffff"/><rect x="2.60" y="3.29" width="5.3" height="1.7" fill="#e0e0e0"/><rect x="12.44" y="3.29" width="5.3" height="1.7" fill="#e0e0e0"/><rect x="22.28" y="3.29" width="5.3" height="1.7" fill="#e0e0e0"/><rect x="32.12" y="3.29" width="5.3" height="1.7" fill="#e0e0e0"/><rect x="41.96" y="3.29" width="5.3" height="1.7" fill="#e0e0e0"/><rect x="2.60" y="11.57" width="5.3" height="1.7" fill="#505050"/><rect x="12.44" y="11.57" width="5.3" height="1.7" fill="#505050"/><rect x="22.28" y="11.57" width="5.3" height="1.7" fill="#505050"/><rect x="32.12" y="11.57" width="5.3" height="1.7" fill="#505050"/><rect x="41.96" y="11.57" width="5.3" height="1.7" fill="#505050"/><rect x="2.60" y="19.85" width="5.3" height="1.7" fill="#505050"/><rect x="12.44" y="19.85" width="5.3" height="1.7" fill="#505050"/><rect x="22.28" y="19.85" width="5.3" height="1.7" fill="#505050"/><rect x="32.12" y="19.85" width="5.3" height="1.7" fill="#505050"/><rect x="41.96" y="19.85" width="5.3" height="1.7" fill="#505050"/><rect x="2.60" y="28.13" width="5.3" height="1.7" fill="#505050"/><rect x="12.44" y="28.13" width="5.3" height="1.7" fill="#505050"/><rect x="22.28" y="28.13" width="5.3" height="1.7" fill="#505050"/><rect x="32.12" y="28.13" width="5.3" height="1.7" fill="#505050"/><rect x="41.96" y="28.13" width="5.3" height="1.7" fill="#505050"/><rect x="2.60" y="36.41" width="5.3" height="1.7" fill="#505050"/><rect x="12.44" y="36.41" width="5.3" height="1.7" fill="#505050"/><rect x="22.28" y="36.41" width="5.3" height="1.7" fill="#505050"/><rect x="32.12" y="36.41" width="5.3" height="1.7" fill="#505050"/><rect x="41.96" y="36.41" width="5.3" height="1.7" fill="#505050"/></g><g transform="translate(898.20,375.00)"><rect x="0" y="0.00" width="50.8" height="8.28" fill="#ed7d31"/><rect x="0" y="8.28" width="50.8" height="8.28" fill="#f8cbad"/><rect x="0" y="24.84" width="50.8" height="8.28" fill="#f8cbad"/><rect x="0" y="16.56" width="50.8" height="8.28" fill="#fce4d6"/><rect x="0" y="33.12" width="50.8" height="8.28" fill="#fce4d6"/><rect x="0" y="7.68" width="50.8" height="1.2" fill="#ffffff"/><rect x="0" y="15.96" width="50.8" height="1.2" fill="#ffffff"/><rect x="0" y="24.24" width="50.8" height="1.2" fill="#ffffff"/><rect x="0" y="32.52" width="50.8" height="1.2" fill="#ffffff"/><rect x="9.56" y="0" width="1.2" height="41.4" fill="#ffffff"/><rect x="19.72" y="0" width="1.2" height="41.4" fill="#ffffff"/><rect x="29.88" y="0" width="1.2" height="41.4" fill="#ffffff"/><rect x="40.04" y="0" width="1.2" height="41.4" fill="#ffffff"/><rect x="2.60" y="3.29" width="5.3" height="1.7" fill="#e0e0e0"/><rect x="12.44" y="3.29" width="5.3" height="1.7" fill="#e0e0e0"/><rect x="22.28" y="3.29" width="5.3" height="1.7" fill="#e0e0e0"/><rect x="32.12" y="3.29" width="5.3" height="1.7" fill="#e0e0e0"/><rect x="41.96" y="3.29" width="5.3" height="1.7" fill="#e0e0e0"/><rect x="2.60" y="11.57" width="5.3" height="1.7" fill="#505050"/><rect x="12.44" y="11.57" width="5.3" height="1.7" fill="#505050"/><rect x="22.28" y="11.57" width="5.3" height="1.7" fill="#505050"/><rect x="32.12" y="11.57" width="5.3" height="1.7" fill="#505050"/><rect x="41.96" y="11.57" width="5.3" height="1.7" fill="#505050"/><rect x="2.60" y="19.85" width="5.3" height="1.7" fill="#505050"/><rect x="12.44" y="19.85" width="5.3" height="1.7" fill="#505050"/><rect x="22.28" y="19.85" width="5.3" height="1.7" fill="#505050"/><rect x="32.12" y="19.85" width="5.3" height="1.7" fill="#505050"/><rect x="41.96" y="19.85" width="5.3" height="1.7" fill="#505050"/><rect x="2.60" y="28.13" width="5.3" height="1.7" fill="#505050"/><rect x="12.44" y="28.13" width="5.3" height="1.7" fill="#505050"/><rect x="22.28" y="28.13" width="5.3" height="1.7" fill="#505050"/><rect x="32.12" y="28.13" width="5.3" height="1.7" fill="#505050"/><rect x="41.96" y="28.13" width="5.3" height="1.7" fill="#505050"/><rect x="2.60" y="36.41" width="5.3" height="1.7" fill="#505050"/><rect x="12.44" y="36.41" width="5.3" height="1.7" fill="#505050"/><rect x="22.28" y="36.41" width="5.3" height="1.7" fill="#505050"/><rect x="32.12" y="36.41" width="5.3" height="1.7" fill="#505050"/><rect x="41.96" y="36.41" width="5.3" height="1.7" fill="#505050"/></g><g transform="translate(955.65,375.00)"><rect x="0" y="0.00" width="50.8" height="8.28" fill="#a5a5a5"/><rect x="0" y="8.28" width="50.8" height="8.28" fill="#dbdbdb"/><rect x="0" y="24.84" width="50.8" height="8.28" fill="#dbdbdb"/><rect x="0" y="16.56" width="50.8" height="8.28" fill="#ededed"/><rect x="0" y="33.12" width="50.8" height="8.28" fill="#ededed"/><rect x="0" y="7.68" width="50.8" height="1.2" fill="#ffffff"/><rect x="0" y="15.96" width="50.8" height="1.2" fill="#ffffff"/><rect x="0" y="24.24" width="50.8" height="1.2" fill="#ffffff"/><rect x="0" y="32.52" width="50.8" height="1.2" fill="#ffffff"/><rect x="9.56" y="0" width="1.2" height="41.4" fill="#ffffff"/><rect x="19.72" y="0" width="1.2" height="41.4" fill="#ffffff"/><rect x="29.88" y="0" width="1.2" height="41.4" fill="#ffffff"/><rect x="40.04" y="0" width="1.2" height="41.4" fill="#ffffff"/><rect x="2.60" y="3.29" width="5.3" height="1.7" fill="#e0e0e0"/><rect x="12.44" y="3.29" width="5.3" height="1.7" fill="#e0e0e0"/><rect x="22.28" y="3.29" width="5.3" height="1.7" fill="#e0e0e0"/><rect x="32.12" y="3.29" width="5.3" height="1.7" fill="#e0e0e0"/><rect x="41.96" y="3.29" width="5.3" height="1.7" fill="#e0e0e0"/><rect x="2.60" y="11.57" width="5.3" height="1.7" fill="#505050"/><rect x="12.44" y="11.57" width="5.3" height="1.7" fill="#505050"/><rect x="22.28" y="11.57" width="5.3" height="1.7" fill="#505050"/><rect x="32.12" y="11.57" width="5.3" height="1.7" fill="#505050"/><rect x="41.96" y="11.57" width="5.3" height="1.7" fill="#505050"/><rect x="2.60" y="19.85" width="5.3" height="1.7" fill="#505050"/><rect x="12.44" y="19.85" width="5.3" height="1.7" fill="#505050"/><rect x="22.28" y="19.85" width="5.3" height="1.7" fill="#505050"/><rect x="32.12" y="19.85" width="5.3" height="1.7" fill="#505050"/><rect x="41.96" y="19.85" width="5.3" height="1.7" fill="#505050"/><rect x="2.60" y="28.13" width="5.3" height="1.7" fill="#505050"/><rect x="12.44" y="28.13" width="5.3" height="1.7" fill="#505050"/><rect x="22.28" y="28.13" width="5.3" height="1.7" fill="#505050"/><rect x="32.12" y="28.13" width="5.3" height="1.7" fill="#505050"/><rect x="41.96" y="28.13" width="5.3" height="1.7" fill="#505050"/><rect x="2.60" y="36.41" width="5.3" height="1.7" fill="#505050"/><rect x="12.44" y="36.41" width="5.3" height="1.7" fill="#505050"/><rect x="22.28" y="36.41" width="5.3" height="1.7" fill="#505050"/><rect x="32.12" y="36.41" width="5.3" height="1.7" fill="#505050"/><rect x="41.96" y="36.41" width="5.3" height="1.7" fill="#505050"/></g><g transform="translate(1013.10,375.00)"><rect x="0" y="0.00" width="50.8" height="8.28" fill="#ffc000"/><rect x="0" y="8.28" width="50.8" height="8.28" fill="#ffe699"/><rect x="0" y="24.84" width="50.8" height="8.28" fill="#ffe699"/><rect x="0" y="16.56" width="50.8" height="8.28" fill="#fff2cc"/><rect x="0" y="33.12" width="50.8" height="8.28" fill="#fff2cc"/><rect x="0" y="7.68" width="50.8" height="1.2" fill="#ffffff"/><rect x="0" y="15.96" width="50.8" height="1.2" fill="#ffffff"/><rect x="0" y="24.24" width="50.8" height="1.2" fill="#ffffff"/><rect x="0" y="32.52" width="50.8" height="1.2" fill="#ffffff"/><rect x="9.56" y="0" width="1.2" height="41.4" fill="#ffffff"/><rect x="19.72" y="0" width="1.2" height="41.4" fill="#ffffff"/><rect x="29.88" y="0" width="1.2" height="41.4" fill="#ffffff"/><rect x="40.04" y="0" width="1.2" height="41.4" fill="#ffffff"/><rect x="2.60" y="3.29" width="5.3" height="1.7" fill="#e0e0e0"/><rect x="12.44" y="3.29" width="5.3" height="1.7" fill="#e0e0e0"/><rect x="22.28" y="3.29" width="5.3" height="1.7" fill="#e0e0e0"/><rect x="32.12" y="3.29" width="5.3" height="1.7" fill="#e0e0e0"/><rect x="41.96" y="3.29" width="5.3" height="1.7" fill="#e0e0e0"/><rect x="2.60" y="11.57" width="5.3" height="1.7" fill="#505050"/><rect x="12.44" y="11.57" width="5.3" height="1.7" fill="#505050"/><rect x="22.28" y="11.57" width="5.3" height="1.7" fill="#505050"/><rect x="32.12" y="11.57" width="5.3" height="1.7" fill="#505050"/><rect x="41.96" y="11.57" width="5.3" height="1.7" fill="#505050"/><rect x="2.60" y="19.85" width="5.3" height="1.7" fill="#505050"/><rect x="12.44" y="19.85" width="5.3" height="1.7" fill="#505050"/><rect x="22.28" y="19.85" width="5.3" height="1.7" fill="#505050"/><rect x="32.12" y="19.85" width="5.3" height="1.7" fill="#505050"/><rect x="41.96" y="19.85" width="5.3" height="1.7" fill="#505050"/><rect x="2.60" y="28.13" width="5.3" height="1.7" fill="#505050"/><rect x="12.44" y="28.13" width="5.3" height="1.7" fill="#505050"/><rect x="22.28" y="28.13" width="5.3" height="1.7" fill="#505050"/><rect x="32.12" y="28.13" width="5.3" height="1.7" fill="#505050"/><rect x="41.96" y="28.13" width="5.3" height="1.7" fill="#505050"/><rect x="2.60" y="36.41" width="5.3" height="1.7" fill="#505050"/><rect x="12.44" y="36.41" width="5.3" height="1.7" fill="#505050"/><rect x="22.28" y="36.41" width="5.3" height="1.7" fill="#505050"/><rect x="32.12" y="36.41" width="5.3" height="1.7" fill="#505050"/><rect x="41.96" y="36.41" width="5.3" height="1.7" fill="#505050"/></g><g transform="translate(1070.55,375.00)"><rect x="0" y="0.00" width="50.8" height="8.28" fill="#5b9bd5"/><rect x="0" y="8.28" width="50.8" height="8.28" fill="#bdd7ee"/><rect x="0" y="24.84" width="50.8" height="8.28" fill="#bdd7ee"/><rect x="0" y="16.56" width="50.8" height="8.28" fill="#ddebf7"/><rect x="0" y="33.12" width="50.8" height="8.28" fill="#ddebf7"/><rect x="0" y="7.68" width="50.8" height="1.2" fill="#ffffff"/><rect x="0" y="15.96" width="50.8" height="1.2" fill="#ffffff"/><rect x="0" y="24.24" width="50.8" height="1.2" fill="#ffffff"/><rect x="0" y="32.52" width="50.8" height="1.2" fill="#ffffff"/><rect x="9.56" y="0" width="1.2" height="41.4" fill="#ffffff"/><rect x="19.72" y="0" width="1.2" height="41.4" fill="#ffffff"/><rect x="29.88" y="0" width="1.2" height="41.4" fill="#ffffff"/><rect x="40.04" y="0" width="1.2" height="41.4" fill="#ffffff"/><rect x="2.60" y="3.29" width="5.3" height="1.7" fill="#e0e0e0"/><rect x="12.44" y="3.29" width="5.3" height="1.7" fill="#e0e0e0"/><rect x="22.28" y="3.29" width="5.3" height="1.7" fill="#e0e0e0"/><rect x="32.12" y="3.29" width="5.3" height="1.7" fill="#e0e0e0"/><rect x="41.96" y="3.29" width="5.3" height="1.7" fill="#e0e0e0"/><rect x="2.60" y="11.57" width="5.3" height="1.7" fill="#505050"/><rect x="12.44" y="11.57" width="5.3" height="1.7" fill="#505050"/><rect x="22.28" y="11.57" width="5.3" height="1.7" fill="#505050"/><rect x="32.12" y="11.57" width="5.3" height="1.7" fill="#505050"/><rect x="41.96" y="11.57" width="5.3" height="1.7" fill="#505050"/><rect x="2.60" y="19.85" width="5.3" height="1.7" fill="#505050"/><rect x="12.44" y="19.85" width="5.3" height="1.7" fill="#505050"/><rect x="22.28" y="19.85" width="5.3" height="1.7" fill="#505050"/><rect x="32.12" y="19.85" width="5.3" height="1.7" fill="#505050"/><rect x="41.96" y="19.85" width="5.3" height="1.7" fill="#505050"/><rect x="2.60" y="28.13" width="5.3" height="1.7" fill="#505050"/><rect x="12.44" y="28.13" width="5.3" height="1.7" fill="#505050"/><rect x="22.28" y="28.13" width="5.3" height="1.7" fill="#505050"/><rect x="32.12" y="28.13" width="5.3" height="1.7" fill="#505050"/><rect x="41.96" y="28.13" width="5.3" height="1.7" fill="#505050"/><rect x="2.60" y="36.41" width="5.3" height="1.7" fill="#505050"/><rect x="12.44" y="36.41" width="5.3" height="1.7" fill="#505050"/><rect x="22.28" y="36.41" width="5.3" height="1.7" fill="#505050"/><rect x="32.12" y="36.41" width="5.3" height="1.7" fill="#505050"/><rect x="41.96" y="36.41" width="5.3" height="1.7" fill="#505050"/></g><g transform="translate(1128.00,375.00)"><rect x="0" y="0.00" width="50.8" height="8.28" fill="#70ad47"/><rect x="0" y="8.28" width="50.8" height="8.28" fill="#c6e0b4"/><rect x="0" y="24.84" width="50.8" height="8.28" fill="#c6e0b4"/><rect x="0" y="16.56" width="50.8" height="8.28" fill="#e2efda"/><rect x="0" y="33.12" width="50.8" height="8.28" fill="#e2efda"/><rect x="0" y="7.68" width="50.8" height="1.2" fill="#ffffff"/><rect x="0" y="15.96" width="50.8" height="1.2" fill="#ffffff"/><rect x="0" y="24.24" width="50.8" height="1.2" fill="#ffffff"/><rect x="0" y="32.52" width="50.8" height="1.2" fill="#ffffff"/><rect x="9.56" y="0" width="1.2" height="41.4" fill="#ffffff"/><rect x="19.72" y="0" width="1.2" height="41.4" fill="#ffffff"/><rect x="29.88" y="0" width="1.2" height="41.4" fill="#ffffff"/><rect x="40.04" y="0" width="1.2" height="41.4" fill="#ffffff"/><rect x="2.60" y="3.29" width="5.3" height="1.7" fill="#e0e0e0"/><rect x="12.44" y="3.29" width="5.3" height="1.7" fill="#e0e0e0"/><rect x="22.28" y="3.29" width="5.3" height="1.7" fill="#e0e0e0"/><rect x="32.12" y="3.29" width="5.3" height="1.7" fill="#e0e0e0"/><rect x="41.96" y="3.29" width="5.3" height="1.7" fill="#e0e0e0"/><rect x="2.60" y="11.57" width="5.3" height="1.7" fill="#505050"/><rect x="12.44" y="11.57" width="5.3" height="1.7" fill="#505050"/><rect x="22.28" y="11.57" width="5.3" height="1.7" fill="#505050"/><rect x="32.12" y="11.57" width="5.3" height="1.7" fill="#505050"/><rect x="41.96" y="11.57" width="5.3" height="1.7" fill="#505050"/><rect x="2.60" y="19.85" width="5.3" height="1.7" fill="#505050"/><rect x="12.44" y="19.85" width="5.3" height="1.7" fill="#505050"/><rect x="22.28" y="19.85" width="5.3" height="1.7" fill="#505050"/><rect x="32.12" y="19.85" width="5.3" height="1.7" fill="#505050"/><rect x="41.96" y="19.85" width="5.3" height="1.7" fill="#505050"/><rect x="2.60" y="28.13" width="5.3" height="1.7" fill="#505050"/><rect x="12.44" y="28.13" width="5.3" height="1.7" fill="#505050"/><rect x="22.28" y="28.13" width="5.3" height="1.7" fill="#505050"/><rect x="32.12" y="28.13" width="5.3" height="1.7" fill="#505050"/><rect x="41.96" y="28.13" width="5.3" height="1.7" fill="#505050"/><rect x="2.60" y="36.41" width="5.3" height="1.7" fill="#505050"/><rect x="12.44" y="36.41" width="5.3" height="1.7" fill="#505050"/><rect x="22.28" y="36.41" width="5.3" height="1.7" fill="#505050"/><rect x="32.12" y="36.41" width="5.3" height="1.7" fill="#505050"/><rect x="41.96" y="36.41" width="5.3" height="1.7" fill="#505050"/></g><g transform="translate(783.30,424.20)"><rect x="0" y="0.00" width="50.8" height="8.28" fill="#000000"/><rect x="0" y="8.28" width="50.8" height="8.28" fill="#d9d9d9"/><rect x="0" y="24.84" width="50.8" height="8.28" fill="#d9d9d9"/><rect x="0" y="7.78" width="50.8" height="1.0" fill="#202020"/><rect x="0" y="16.06" width="50.8" height="1.0" fill="#202020"/><rect x="0" y="24.34" width="50.8" height="1.0" fill="#202020"/><rect x="0" y="32.62" width="50.8" height="1.0" fill="#202020"/><rect x="9.66" y="0" width="1.0" height="41.4" fill="#202020"/><rect x="19.82" y="0" width="1.0" height="41.4" fill="#202020"/><rect x="29.98" y="0" width="1.0" height="41.4" fill="#202020"/><rect x="40.14" y="0" width="1.0" height="41.4" fill="#202020"/><rect x="0.5" y="0.5" width="49.80" height="40.40" fill="none" stroke="#202020" stroke-width="1.0"/><rect x="2.60" y="3.29" width="5.3" height="1.7" fill="#d0d0d0"/><rect x="12.44" y="3.29" width="5.3" height="1.7" fill="#d0d0d0"/><rect x="22.28" y="3.29" width="5.3" height="1.7" fill="#d0d0d0"/><rect x="32.12" y="3.29" width="5.3" height="1.7" fill="#d0d0d0"/><rect x="41.96" y="3.29" width="5.3" height="1.7" fill="#d0d0d0"/><rect x="2.60" y="11.57" width="5.3" height="1.7" fill="#505050"/><rect x="12.44" y="11.57" width="5.3" height="1.7" fill="#505050"/><rect x="22.28" y="11.57" width="5.3" height="1.7" fill="#505050"/><rect x="32.12" y="11.57" width="5.3" height="1.7" fill="#505050"/><rect x="41.96" y="11.57" width="5.3" height="1.7" fill="#505050"/><rect x="2.60" y="19.85" width="5.3" height="1.7" fill="#505050"/><rect x="12.44" y="19.85" width="5.3" height="1.7" fill="#505050"/><rect x="22.28" y="19.85" width="5.3" height="1.7" fill="#505050"/><rect x="32.12" y="19.85" width="5.3" height="1.7" fill="#505050"/><rect x="41.96" y="19.85" width="5.3" height="1.7" fill="#505050"/><rect x="2.60" y="28.13" width="5.3" height="1.7" fill="#505050"/><rect x="12.44" y="28.13" width="5.3" height="1.7" fill="#505050"/><rect x="22.28" y="28.13" width="5.3" height="1.7" fill="#505050"/><rect x="32.12" y="28.13" width="5.3" height="1.7" fill="#505050"/><rect x="41.96" y="28.13" width="5.3" height="1.7" fill="#505050"/><rect x="2.60" y="36.41" width="5.3" height="1.7" fill="#505050"/><rect x="12.44" y="36.41" width="5.3" height="1.7" fill="#505050"/><rect x="22.28" y="36.41" width="5.3" height="1.7" fill="#505050"/><rect x="32.12" y="36.41" width="5.3" height="1.7" fill="#505050"/><rect x="41.96" y="36.41" width="5.3" height="1.7" fill="#505050"/></g><g transform="translate(840.75,424.20)"><rect x="0" y="0.00" width="50.8" height="8.28" fill="#4472c4"/><rect x="0" y="8.28" width="50.8" height="8.28" fill="#d9d9d9"/><rect x="0" y="24.84" width="50.8" height="8.28" fill="#d9d9d9"/><rect x="0" y="7.78" width="50.8" height="1.0" fill="#202020"/><rect x="0" y="40.20" width="50.8" height="1.2" fill="#202020"/><rect x="2.60" y="3.29" width="5.3" height="1.7" fill="#f4f4f4"/><rect x="12.44" y="3.29" width="5.3" height="1.7" fill="#f4f4f4"/><rect x="22.28" y="3.29" width="5.3" height="1.7" fill="#f4f4f4"/><rect x="32.12" y="3.29" width="5.3" height="1.7" fill="#f4f4f4"/><rect x="41.96" y="3.29" width="5.3" height="1.7" fill="#f4f4f4"/><rect x="2.60" y="11.57" width="5.3" height="1.7" fill="#505050"/><rect x="12.44" y="11.57" width="5.3" height="1.7" fill="#505050"/><rect x="22.28" y="11.57" width="5.3" height="1.7" fill="#505050"/><rect x="32.12" y="11.57" width="5.3" height="1.7" fill="#505050"/><rect x="41.96" y="11.57" width="5.3" height="1.7" fill="#505050"/><rect x="2.60" y="19.85" width="5.3" height="1.7" fill="#505050"/><rect x="12.44" y="19.85" width="5.3" height="1.7" fill="#505050"/><rect x="22.28" y="19.85" width="5.3" height="1.7" fill="#505050"/><rect x="32.12" y="19.85" width="5.3" height="1.7" fill="#505050"/><rect x="41.96" y="19.85" width="5.3" height="1.7" fill="#505050"/><rect x="2.60" y="28.13" width="5.3" height="1.7" fill="#505050"/><rect x="12.44" y="28.13" width="5.3" height="1.7" fill="#505050"/><rect x="22.28" y="28.13" width="5.3" height="1.7" fill="#505050"/><rect x="32.12" y="28.13" width="5.3" height="1.7" fill="#505050"/><rect x="41.96" y="28.13" width="5.3" height="1.7" fill="#505050"/><rect x="2.60" y="36.41" width="5.3" height="1.7" fill="#505050"/><rect x="12.44" y="36.41" width="5.3" height="1.7" fill="#505050"/><rect x="22.28" y="36.41" width="5.3" height="1.7" fill="#505050"/><rect x="32.12" y="36.41" width="5.3" height="1.7" fill="#505050"/><rect x="41.96" y="36.41" width="5.3" height="1.7" fill="#505050"/></g><g transform="translate(898.20,424.20)"><rect x="0" y="0.00" width="50.8" height="8.28" fill="#ed7d31"/><rect x="0" y="8.28" width="50.8" height="8.28" fill="#d9d9d9"/><rect x="0" y="24.84" width="50.8" height="8.28" fill="#d9d9d9"/><rect x="0" y="7.78" width="50.8" height="1.0" fill="#202020"/><rect x="0" y="40.20" width="50.8" height="1.2" fill="#202020"/><rect x="2.60" y="3.29" width="5.3" height="1.7" fill="#f4f4f4"/><rect x="12.44" y="3.29" width="5.3" height="1.7" fill="#f4f4f4"/><rect x="22.28" y="3.29" width="5.3" height="1.7" fill="#f4f4f4"/><rect x="32.12" y="3.29" width="5.3" height="1.7" fill="#f4f4f4"/><rect x="41.96" y="3.29" width="5.3" height="1.7" fill="#f4f4f4"/><rect x="2.60" y="11.57" width="5.3" height="1.7" fill="#505050"/><rect x="12.44" y="11.57" width="5.3" height="1.7" fill="#505050"/><rect x="22.28" y="11.57" width="5.3" height="1.7" fill="#505050"/><rect x="32.12" y="11.57" width="5.3" height="1.7" fill="#505050"/><rect x="41.96" y="11.57" width="5.3" height="1.7" fill="#505050"/><rect x="2.60" y="19.85" width="5.3" height="1.7" fill="#505050"/><rect x="12.44" y="19.85" width="5.3" height="1.7" fill="#505050"/><rect x="22.28" y="19.85" width="5.3" height="1.7" fill="#505050"/><rect x="32.12" y="19.85" width="5.3" height="1.7" fill="#505050"/><rect x="41.96" y="19.85" width="5.3" height="1.7" fill="#505050"/><rect x="2.60" y="28.13" width="5.3" height="1.7" fill="#505050"/><rect x="12.44" y="28.13" width="5.3" height="1.7" fill="#505050"/><rect x="22.28" y="28.13" width="5.3" height="1.7" fill="#505050"/><rect x="32.12" y="28.13" width="5.3" height="1.7" fill="#505050"/><rect x="41.96" y="28.13" width="5.3" height="1.7" fill="#505050"/><rect x="2.60" y="36.41" width="5.3" height="1.7" fill="#505050"/><rect x="12.44" y="36.41" width="5.3" height="1.7" fill="#505050"/><rect x="22.28" y="36.41" width="5.3" height="1.7" fill="#505050"/><rect x="32.12" y="36.41" width="5.3" height="1.7" fill="#505050"/><rect x="41.96" y="36.41" width="5.3" height="1.7" fill="#505050"/></g><g transform="translate(955.65,424.20)"><rect x="0" y="0.00" width="50.8" height="8.28" fill="#a5a5a5"/><rect x="0" y="8.28" width="50.8" height="8.28" fill="#d9d9d9"/><rect x="0" y="24.84" width="50.8" height="8.28" fill="#d9d9d9"/><rect x="0" y="7.78" width="50.8" height="1.0" fill="#202020"/><rect x="0" y="40.20" width="50.8" height="1.2" fill="#202020"/><rect x="2.60" y="3.29" width="5.3" height="1.7" fill="#f4f4f4"/><rect x="12.44" y="3.29" width="5.3" height="1.7" fill="#f4f4f4"/><rect x="22.28" y="3.29" width="5.3" height="1.7" fill="#f4f4f4"/><rect x="32.12" y="3.29" width="5.3" height="1.7" fill="#f4f4f4"/><rect x="41.96" y="3.29" width="5.3" height="1.7" fill="#f4f4f4"/><rect x="2.60" y="11.57" width="5.3" height="1.7" fill="#505050"/><rect x="12.44" y="11.57" width="5.3" height="1.7" fill="#505050"/><rect x="22.28" y="11.57" width="5.3" height="1.7" fill="#505050"/><rect x="32.12" y="11.57" width="5.3" height="1.7" fill="#505050"/><rect x="41.96" y="11.57" width="5.3" height="1.7" fill="#505050"/><rect x="2.60" y="19.85" width="5.3" height="1.7" fill="#505050"/><rect x="12.44" y="19.85" width="5.3" height="1.7" fill="#505050"/><rect x="22.28" y="19.85" width="5.3" height="1.7" fill="#505050"/><rect x="32.12" y="19.85" width="5.3" height="1.7" fill="#505050"/><rect x="41.96" y="19.85" width="5.3" height="1.7" fill="#505050"/><rect x="2.60" y="28.13" width="5.3" height="1.7" fill="#505050"/><rect x="12.44" y="28.13" width="5.3" height="1.7" fill="#505050"/><rect x="22.28" y="28.13" width="5.3" height="1.7" fill="#505050"/><rect x="32.12" y="28.13" width="5.3" height="1.7" fill="#505050"/><rect x="41.96" y="28.13" width="5.3" height="1.7" fill="#505050"/><rect x="2.60" y="36.41" width="5.3" height="1.7" fill="#505050"/><rect x="12.44" y="36.41" width="5.3" height="1.7" fill="#505050"/><rect x="22.28" y="36.41" width="5.3" height="1.7" fill="#505050"/><rect x="32.12" y="36.41" width="5.3" height="1.7" fill="#505050"/><rect x="41.96" y="36.41" width="5.3" height="1.7" fill="#505050"/></g><g transform="translate(1013.10,424.20)"><rect x="0" y="0.00" width="50.8" height="8.28" fill="#ffc000"/><rect x="0" y="8.28" width="50.8" height="8.28" fill="#d9d9d9"/><rect x="0" y="24.84" width="50.8" height="8.28" fill="#d9d9d9"/><rect x="0" y="7.78" width="50.8" height="1.0" fill="#202020"/><rect x="0" y="40.20" width="50.8" height="1.2" fill="#202020"/><rect x="2.60" y="3.29" width="5.3" height="1.7" fill="#f4f4f4"/><rect x="12.44" y="3.29" width="5.3" height="1.7" fill="#f4f4f4"/><rect x="22.28" y="3.29" width="5.3" height="1.7" fill="#f4f4f4"/><rect x="32.12" y="3.29" width="5.3" height="1.7" fill="#f4f4f4"/><rect x="41.96" y="3.29" width="5.3" height="1.7" fill="#f4f4f4"/><rect x="2.60" y="11.57" width="5.3" height="1.7" fill="#505050"/><rect x="12.44" y="11.57" width="5.3" height="1.7" fill="#505050"/><rect x="22.28" y="11.57" width="5.3" height="1.7" fill="#505050"/><rect x="32.12" y="11.57" width="5.3" height="1.7" fill="#505050"/><rect x="41.96" y="11.57" width="5.3" height="1.7" fill="#505050"/><rect x="2.60" y="19.85" width="5.3" height="1.7" fill="#505050"/><rect x="12.44" y="19.85" width="5.3" height="1.7" fill="#505050"/><rect x="22.28" y="19.85" width="5.3" height="1.7" fill="#505050"/><rect x="32.12" y="19.85" width="5.3" height="1.7" fill="#505050"/><rect x="41.96" y="19.85" width="5.3" height="1.7" fill="#505050"/><rect x="2.60" y="28.13" width="5.3" height="1.7" fill="#505050"/><rect x="12.44" y="28.13" width="5.3" height="1.7" fill="#505050"/><rect x="22.28" y="28.13" width="5.3" height="1.7" fill="#505050"/><rect x="32.12" y="28.13" width="5.3" height="1.7" fill="#505050"/><rect x="41.96" y="28.13" width="5.3" height="1.7" fill="#505050"/><rect x="2.60" y="36.41" width="5.3" height="1.7" fill="#505050"/><rect x="12.44" y="36.41" width="5.3" height="1.7" fill="#505050"/><rect x="22.28" y="36.41" width="5.3" height="1.7" fill="#505050"/><rect x="32.12" y="36.41" width="5.3" height="1.7" fill="#505050"/><rect x="41.96" y="36.41" width="5.3" height="1.7" fill="#505050"/></g><g transform="translate(1070.55,424.20)"><rect x="0" y="0.00" width="50.8" height="8.28" fill="#5b9bd5"/><rect x="0" y="8.28" width="50.8" height="8.28" fill="#d9d9d9"/><rect x="0" y="24.84" width="50.8" height="8.28" fill="#d9d9d9"/><rect x="0" y="7.78" width="50.8" height="1.0" fill="#202020"/><rect x="0" y="40.20" width="50.8" height="1.2" fill="#202020"/><rect x="2.60" y="3.29" width="5.3" height="1.7" fill="#f4f4f4"/><rect x="12.44" y="3.29" width="5.3" height="1.7" fill="#f4f4f4"/><rect x="22.28" y="3.29" width="5.3" height="1.7" fill="#f4f4f4"/><rect x="32.12" y="3.29" width="5.3" height="1.7" fill="#f4f4f4"/><rect x="41.96" y="3.29" width="5.3" height="1.7" fill="#f4f4f4"/><rect x="2.60" y="11.57" width="5.3" height="1.7" fill="#505050"/><rect x="12.44" y="11.57" width="5.3" height="1.7" fill="#505050"/><rect x="22.28" y="11.57" width="5.3" height="1.7" fill="#505050"/><rect x="32.12" y="11.57" width="5.3" height="1.7" fill="#505050"/><rect x="41.96" y="11.57" width="5.3" height="1.7" fill="#505050"/><rect x="2.60" y="19.85" width="5.3" height="1.7" fill="#505050"/><rect x="12.44" y="19.85" width="5.3" height="1.7" fill="#505050"/><rect x="22.28" y="19.85" width="5.3" height="1.7" fill="#505050"/><rect x="32.12" y="19.85" width="5.3" height="1.7" fill="#505050"/><rect x="41.96" y="19.85" width="5.3" height="1.7" fill="#505050"/><rect x="2.60" y="28.13" width="5.3" height="1.7" fill="#505050"/><rect x="12.44" y="28.13" width="5.3" height="1.7" fill="#505050"/><rect x="22.28" y="28.13" width="5.3" height="1.7" fill="#505050"/><rect x="32.12" y="28.13" width="5.3" height="1.7" fill="#505050"/><rect x="41.96" y="28.13" width="5.3" height="1.7" fill="#505050"/><rect x="2.60" y="36.41" width="5.3" height="1.7" fill="#505050"/><rect x="12.44" y="36.41" width="5.3" height="1.7" fill="#505050"/><rect x="22.28" y="36.41" width="5.3" height="1.7" fill="#505050"/><rect x="32.12" y="36.41" width="5.3" height="1.7" fill="#505050"/><rect x="41.96" y="36.41" width="5.3" height="1.7" fill="#505050"/></g><g transform="translate(1128.00,424.20)"><rect x="0" y="0.00" width="50.8" height="8.28" fill="#70ad47"/><rect x="0" y="8.28" width="50.8" height="8.28" fill="#d9d9d9"/><rect x="0" y="24.84" width="50.8" height="8.28" fill="#d9d9d9"/><rect x="0" y="7.78" width="50.8" height="1.0" fill="#202020"/><rect x="0" y="40.20" width="50.8" height="1.2" fill="#202020"/><rect x="2.60" y="3.29" width="5.3" height="1.7" fill="#f4f4f4"/><rect x="12.44" y="3.29" width="5.3" height="1.7" fill="#f4f4f4"/><rect x="22.28" y="3.29" width="5.3" height="1.7" fill="#f4f4f4"/><rect x="32.12" y="3.29" width="5.3" height="1.7" fill="#f4f4f4"/><rect x="41.96" y="3.29" width="5.3" height="1.7" fill="#f4f4f4"/><rect x="2.60" y="11.57" width="5.3" height="1.7" fill="#505050"/><rect x="12.44" y="11.57" width="5.3" height="1.7" fill="#505050"/><rect x="22.28" y="11.57" width="5.3" height="1.7" fill="#505050"/><rect x="32.12" y="11.57" width="5.3" height="1.7" fill="#505050"/><rect x="41.96" y="11.57" width="5.3" height="1.7" fill="#505050"/><rect x="2.60" y="19.85" width="5.3" height="1.7" fill="#505050"/><rect x="12.44" y="19.85" width="5.3" height="1.7" fill="#505050"/><rect x="22.28" y="19.85" width="5.3" height="1.7" fill="#505050"/><rect x="32.12" y="19.85" width="5.3" height="1.7" fill="#505050"/><rect x="41.96" y="19.85" width="5.3" height="1.7" fill="#505050"/><rect x="2.60" y="28.13" width="5.3" height="1.7" fill="#505050"/><rect x="12.44" y="28.13" width="5.3" height="1.7" fill="#505050"/><rect x="22.28" y="28.13" width="5.3" height="1.7" fill="#505050"/><rect x="32.12" y="28.13" width="5.3" height="1.7" fill="#505050"/><rect x="41.96" y="28.13" width="5.3" height="1.7" fill="#505050"/><rect x="2.60" y="36.41" width="5.3" height="1.7" fill="#505050"/><rect x="12.44" y="36.41" width="5.3" height="1.7" fill="#505050"/><rect x="22.28" y="36.41" width="5.3" height="1.7" fill="#505050"/><rect x="32.12" y="36.41" width="5.3" height="1.7" fill="#505050"/><rect x="41.96" y="36.41" width="5.3" height="1.7" fill="#505050"/></g><g transform="translate(783.30,473.60)"><rect x="0" y="0.00" width="50.8" height="8.28" fill="#eeeeee"/><rect x="0" y="16.56" width="50.8" height="8.28" fill="#eeeeee"/><rect x="0" y="33.12" width="50.8" height="8.28" fill="#eeeeee"/><rect x="0" y="8.28" width="50.8" height="8.28" fill="#a6a6a6"/><rect x="0" y="24.84" width="50.8" height="8.28" fill="#a6a6a6"/><rect x="0" y="7.78" width="50.8" height="1.0" fill="#202020"/><rect x="0" y="16.06" width="50.8" height="1.0" fill="#202020"/><rect x="0" y="24.34" width="50.8" height="1.0" fill="#202020"/><rect x="0" y="32.62" width="50.8" height="1.0" fill="#202020"/><rect x="9.66" y="0" width="1.0" height="41.4" fill="#202020"/><rect x="19.82" y="0" width="1.0" height="41.4" fill="#202020"/><rect x="29.98" y="0" width="1.0" height="41.4" fill="#202020"/><rect x="40.14" y="0" width="1.0" height="41.4" fill="#202020"/><rect x="0.5" y="0.5" width="49.80" height="40.40" fill="none" stroke="#202020" stroke-width="1.0"/><rect x="2.60" y="3.29" width="5.3" height="1.7" fill="#505050"/><rect x="12.44" y="3.29" width="5.3" height="1.7" fill="#505050"/><rect x="22.28" y="3.29" width="5.3" height="1.7" fill="#505050"/><rect x="32.12" y="3.29" width="5.3" height="1.7" fill="#505050"/><rect x="41.96" y="3.29" width="5.3" height="1.7" fill="#505050"/><rect x="2.60" y="11.57" width="5.3" height="1.7" fill="#505050"/><rect x="12.44" y="11.57" width="5.3" height="1.7" fill="#505050"/><rect x="22.28" y="11.57" width="5.3" height="1.7" fill="#505050"/><rect x="32.12" y="11.57" width="5.3" height="1.7" fill="#505050"/><rect x="41.96" y="11.57" width="5.3" height="1.7" fill="#505050"/><rect x="2.60" y="19.85" width="5.3" height="1.7" fill="#505050"/><rect x="12.44" y="19.85" width="5.3" height="1.7" fill="#505050"/><rect x="22.28" y="19.85" width="5.3" height="1.7" fill="#505050"/><rect x="32.12" y="19.85" width="5.3" height="1.7" fill="#505050"/><rect x="41.96" y="19.85" width="5.3" height="1.7" fill="#505050"/><rect x="2.60" y="28.13" width="5.3" height="1.7" fill="#505050"/><rect x="12.44" y="28.13" width="5.3" height="1.7" fill="#505050"/><rect x="22.28" y="28.13" width="5.3" height="1.7" fill="#505050"/><rect x="32.12" y="28.13" width="5.3" height="1.7" fill="#505050"/><rect x="41.96" y="28.13" width="5.3" height="1.7" fill="#505050"/><rect x="2.60" y="36.41" width="5.3" height="1.7" fill="#505050"/><rect x="12.44" y="36.41" width="5.3" height="1.7" fill="#505050"/><rect x="22.28" y="36.41" width="5.3" height="1.7" fill="#505050"/><rect x="32.12" y="36.41" width="5.3" height="1.7" fill="#505050"/><rect x="41.96" y="36.41" width="5.3" height="1.7" fill="#505050"/></g><g transform="translate(840.75,473.60)"><rect x="0" y="0.00" width="50.8" height="8.28" fill="#d9e1f2"/><rect x="0" y="16.56" width="50.8" height="8.28" fill="#d9e1f2"/><rect x="0" y="33.12" width="50.8" height="8.28" fill="#d9e1f2"/><rect x="0" y="8.28" width="50.8" height="8.28" fill="#b4c6e7"/><rect x="0" y="24.84" width="50.8" height="8.28" fill="#b4c6e7"/><rect x="0" y="7.78" width="50.8" height="1.0" fill="#8ea9db"/><rect x="0" y="16.06" width="50.8" height="1.0" fill="#8ea9db"/><rect x="0" y="24.34" width="50.8" height="1.0" fill="#8ea9db"/><rect x="0" y="32.62" width="50.8" height="1.0" fill="#8ea9db"/><rect x="9.66" y="0" width="1.0" height="41.4" fill="#8ea9db"/><rect x="19.82" y="0" width="1.0" height="41.4" fill="#8ea9db"/><rect x="29.98" y="0" width="1.0" height="41.4" fill="#8ea9db"/><rect x="40.14" y="0" width="1.0" height="41.4" fill="#8ea9db"/><rect x="0.5" y="0.5" width="49.80" height="40.40" fill="none" stroke="#8ea9db" stroke-width="1.0"/><rect x="2.60" y="3.29" width="5.3" height="1.7" fill="#505050"/><rect x="12.44" y="3.29" width="5.3" height="1.7" fill="#505050"/><rect x="22.28" y="3.29" width="5.3" height="1.7" fill="#505050"/><rect x="32.12" y="3.29" width="5.3" height="1.7" fill="#505050"/><rect x="41.96" y="3.29" width="5.3" height="1.7" fill="#505050"/><rect x="2.60" y="11.57" width="5.3" height="1.7" fill="#505050"/><rect x="12.44" y="11.57" width="5.3" height="1.7" fill="#505050"/><rect x="22.28" y="11.57" width="5.3" height="1.7" fill="#505050"/><rect x="32.12" y="11.57" width="5.3" height="1.7" fill="#505050"/><rect x="41.96" y="11.57" width="5.3" height="1.7" fill="#505050"/><rect x="2.60" y="19.85" width="5.3" height="1.7" fill="#505050"/><rect x="12.44" y="19.85" width="5.3" height="1.7" fill="#505050"/><rect x="22.28" y="19.85" width="5.3" height="1.7" fill="#505050"/><rect x="32.12" y="19.85" width="5.3" height="1.7" fill="#505050"/><rect x="41.96" y="19.85" width="5.3" height="1.7" fill="#505050"/><rect x="2.60" y="28.13" width="5.3" height="1.7" fill="#505050"/><rect x="12.44" y="28.13" width="5.3" height="1.7" fill="#505050"/><rect x="22.28" y="28.13" width="5.3" height="1.7" fill="#505050"/><rect x="32.12" y="28.13" width="5.3" height="1.7" fill="#505050"/><rect x="41.96" y="28.13" width="5.3" height="1.7" fill="#505050"/><rect x="2.60" y="36.41" width="5.3" height="1.7" fill="#505050"/><rect x="12.44" y="36.41" width="5.3" height="1.7" fill="#505050"/><rect x="22.28" y="36.41" width="5.3" height="1.7" fill="#505050"/><rect x="32.12" y="36.41" width="5.3" height="1.7" fill="#505050"/><rect x="41.96" y="36.41" width="5.3" height="1.7" fill="#505050"/></g><g transform="translate(898.20,473.60)"><rect x="0" y="0.00" width="50.8" height="8.28" fill="#fce4d6"/><rect x="0" y="16.56" width="50.8" height="8.28" fill="#fce4d6"/><rect x="0" y="33.12" width="50.8" height="8.28" fill="#fce4d6"/><rect x="0" y="8.28" width="50.8" height="8.28" fill="#f8cbad"/><rect x="0" y="24.84" width="50.8" height="8.28" fill="#f8cbad"/><rect x="0" y="7.78" width="50.8" height="1.0" fill="#f4b084"/><rect x="0" y="16.06" width="50.8" height="1.0" fill="#f4b084"/><rect x="0" y="24.34" width="50.8" height="1.0" fill="#f4b084"/><rect x="0" y="32.62" width="50.8" height="1.0" fill="#f4b084"/><rect x="9.66" y="0" width="1.0" height="41.4" fill="#f4b084"/><rect x="19.82" y="0" width="1.0" height="41.4" fill="#f4b084"/><rect x="29.98" y="0" width="1.0" height="41.4" fill="#f4b084"/><rect x="40.14" y="0" width="1.0" height="41.4" fill="#f4b084"/><rect x="0.5" y="0.5" width="49.80" height="40.40" fill="none" stroke="#f4b084" stroke-width="1.0"/><rect x="2.60" y="3.29" width="5.3" height="1.7" fill="#505050"/><rect x="12.44" y="3.29" width="5.3" height="1.7" fill="#505050"/><rect x="22.28" y="3.29" width="5.3" height="1.7" fill="#505050"/><rect x="32.12" y="3.29" width="5.3" height="1.7" fill="#505050"/><rect x="41.96" y="3.29" width="5.3" height="1.7" fill="#505050"/><rect x="2.60" y="11.57" width="5.3" height="1.7" fill="#505050"/><rect x="12.44" y="11.57" width="5.3" height="1.7" fill="#505050"/><rect x="22.28" y="11.57" width="5.3" height="1.7" fill="#505050"/><rect x="32.12" y="11.57" width="5.3" height="1.7" fill="#505050"/><rect x="41.96" y="11.57" width="5.3" height="1.7" fill="#505050"/><rect x="2.60" y="19.85" width="5.3" height="1.7" fill="#505050"/><rect x="12.44" y="19.85" width="5.3" height="1.7" fill="#505050"/><rect x="22.28" y="19.85" width="5.3" height="1.7" fill="#505050"/><rect x="32.12" y="19.85" width="5.3" height="1.7" fill="#505050"/><rect x="41.96" y="19.85" width="5.3" height="1.7" fill="#505050"/><rect x="2.60" y="28.13" width="5.3" height="1.7" fill="#505050"/><rect x="12.44" y="28.13" width="5.3" height="1.7" fill="#505050"/><rect x="22.28" y="28.13" width="5.3" height="1.7" fill="#505050"/><rect x="32.12" y="28.13" width="5.3" height="1.7" fill="#505050"/><rect x="41.96" y="28.13" width="5.3" height="1.7" fill="#505050"/><rect x="2.60" y="36.41" width="5.3" height="1.7" fill="#505050"/><rect x="12.44" y="36.41" width="5.3" height="1.7" fill="#505050"/><rect x="22.28" y="36.41" width="5.3" height="1.7" fill="#505050"/><rect x="32.12" y="36.41" width="5.3" height="1.7" fill="#505050"/><rect x="41.96" y="36.41" width="5.3" height="1.7" fill="#505050"/></g><g transform="translate(955.65,473.60)"><rect x="0" y="0.00" width="50.8" height="8.28" fill="#ededed"/><rect x="0" y="16.56" width="50.8" height="8.28" fill="#ededed"/><rect x="0" y="33.12" width="50.8" height="8.28" fill="#ededed"/><rect x="0" y="8.28" width="50.8" height="8.28" fill="#dbdbdb"/><rect x="0" y="24.84" width="50.8" height="8.28" fill="#dbdbdb"/><rect x="0" y="7.78" width="50.8" height="1.0" fill="#c9c9c9"/><rect x="0" y="16.06" width="50.8" height="1.0" fill="#c9c9c9"/><rect x="0" y="24.34" width="50.8" height="1.0" fill="#c9c9c9"/><rect x="0" y="32.62" width="50.8" height="1.0" fill="#c9c9c9"/><rect x="9.66" y="0" width="1.0" height="41.4" fill="#c9c9c9"/><rect x="19.82" y="0" width="1.0" height="41.4" fill="#c9c9c9"/><rect x="29.98" y="0" width="1.0" height="41.4" fill="#c9c9c9"/><rect x="40.14" y="0" width="1.0" height="41.4" fill="#c9c9c9"/><rect x="0.5" y="0.5" width="49.80" height="40.40" fill="none" stroke="#c9c9c9" stroke-width="1.0"/><rect x="2.60" y="3.29" width="5.3" height="1.7" fill="#505050"/><rect x="12.44" y="3.29" width="5.3" height="1.7" fill="#505050"/><rect x="22.28" y="3.29" width="5.3" height="1.7" fill="#505050"/><rect x="32.12" y="3.29" width="5.3" height="1.7" fill="#505050"/><rect x="41.96" y="3.29" width="5.3" height="1.7" fill="#505050"/><rect x="2.60" y="11.57" width="5.3" height="1.7" fill="#505050"/><rect x="12.44" y="11.57" width="5.3" height="1.7" fill="#505050"/><rect x="22.28" y="11.57" width="5.3" height="1.7" fill="#505050"/><rect x="32.12" y="11.57" width="5.3" height="1.7" fill="#505050"/><rect x="41.96" y="11.57" width="5.3" height="1.7" fill="#505050"/><rect x="2.60" y="19.85" width="5.3" height="1.7" fill="#505050"/><rect x="12.44" y="19.85" width="5.3" height="1.7" fill="#505050"/><rect x="22.28" y="19.85" width="5.3" height="1.7" fill="#505050"/><rect x="32.12" y="19.85" width="5.3" height="1.7" fill="#505050"/><rect x="41.96" y="19.85" width="5.3" height="1.7" fill="#505050"/><rect x="2.60" y="28.13" width="5.3" height="1.7" fill="#505050"/><rect x="12.44" y="28.13" width="5.3" height="1.7" fill="#505050"/><rect x="22.28" y="28.13" width="5.3" height="1.7" fill="#505050"/><rect x="32.12" y="28.13" width="5.3" height="1.7" fill="#505050"/><rect x="41.96" y="28.13" width="5.3" height="1.7" fill="#505050"/><rect x="2.60" y="36.41" width="5.3" height="1.7" fill="#505050"/><rect x="12.44" y="36.41" width="5.3" height="1.7" fill="#505050"/><rect x="22.28" y="36.41" width="5.3" height="1.7" fill="#505050"/><rect x="32.12" y="36.41" width="5.3" height="1.7" fill="#505050"/><rect x="41.96" y="36.41" width="5.3" height="1.7" fill="#505050"/></g><g transform="translate(1013.10,473.60)"><rect x="0" y="0.00" width="50.8" height="8.28" fill="#fff2cc"/><rect x="0" y="16.56" width="50.8" height="8.28" fill="#fff2cc"/><rect x="0" y="33.12" width="50.8" height="8.28" fill="#fff2cc"/><rect x="0" y="8.28" width="50.8" height="8.28" fill="#ffe699"/><rect x="0" y="24.84" width="50.8" height="8.28" fill="#ffe699"/><rect x="0" y="7.78" width="50.8" height="1.0" fill="#ffd966"/><rect x="0" y="16.06" width="50.8" height="1.0" fill="#ffd966"/><rect x="0" y="24.34" width="50.8" height="1.0" fill="#ffd966"/><rect x="0" y="32.62" width="50.8" height="1.0" fill="#ffd966"/><rect x="9.66" y="0" width="1.0" height="41.4" fill="#ffd966"/><rect x="19.82" y="0" width="1.0" height="41.4" fill="#ffd966"/><rect x="29.98" y="0" width="1.0" height="41.4" fill="#ffd966"/><rect x="40.14" y="0" width="1.0" height="41.4" fill="#ffd966"/><rect x="0.5" y="0.5" width="49.80" height="40.40" fill="none" stroke="#ffd966" stroke-width="1.0"/><rect x="2.60" y="3.29" width="5.3" height="1.7" fill="#505050"/><rect x="12.44" y="3.29" width="5.3" height="1.7" fill="#505050"/><rect x="22.28" y="3.29" width="5.3" height="1.7" fill="#505050"/><rect x="32.12" y="3.29" width="5.3" height="1.7" fill="#505050"/><rect x="41.96" y="3.29" width="5.3" height="1.7" fill="#505050"/><rect x="2.60" y="11.57" width="5.3" height="1.7" fill="#505050"/><rect x="12.44" y="11.57" width="5.3" height="1.7" fill="#505050"/><rect x="22.28" y="11.57" width="5.3" height="1.7" fill="#505050"/><rect x="32.12" y="11.57" width="5.3" height="1.7" fill="#505050"/><rect x="41.96" y="11.57" width="5.3" height="1.7" fill="#505050"/><rect x="2.60" y="19.85" width="5.3" height="1.7" fill="#505050"/><rect x="12.44" y="19.85" width="5.3" height="1.7" fill="#505050"/><rect x="22.28" y="19.85" width="5.3" height="1.7" fill="#505050"/><rect x="32.12" y="19.85" width="5.3" height="1.7" fill="#505050"/><rect x="41.96" y="19.85" width="5.3" height="1.7" fill="#505050"/><rect x="2.60" y="28.13" width="5.3" height="1.7" fill="#505050"/><rect x="12.44" y="28.13" width="5.3" height="1.7" fill="#505050"/><rect x="22.28" y="28.13" width="5.3" height="1.7" fill="#505050"/><rect x="32.12" y="28.13" width="5.3" height="1.7" fill="#505050"/><rect x="41.96" y="28.13" width="5.3" height="1.7" fill="#505050"/><rect x="2.60" y="36.41" width="5.3" height="1.7" fill="#505050"/><rect x="12.44" y="36.41" width="5.3" height="1.7" fill="#505050"/><rect x="22.28" y="36.41" width="5.3" height="1.7" fill="#505050"/><rect x="32.12" y="36.41" width="5.3" height="1.7" fill="#505050"/><rect x="41.96" y="36.41" width="5.3" height="1.7" fill="#505050"/></g><g transform="translate(1070.55,473.60)"><rect x="0" y="0.00" width="50.8" height="8.28" fill="#ddebf7"/><rect x="0" y="16.56" width="50.8" height="8.28" fill="#ddebf7"/><rect x="0" y="33.12" width="50.8" height="8.28" fill="#ddebf7"/><rect x="0" y="8.28" width="50.8" height="8.28" fill="#bdd7ee"/><rect x="0" y="24.84" width="50.8" height="8.28" fill="#bdd7ee"/><rect x="0" y="7.78" width="50.8" height="1.0" fill="#9bc2e6"/><rect x="0" y="16.06" width="50.8" height="1.0" fill="#9bc2e6"/><rect x="0" y="24.34" width="50.8" height="1.0" fill="#9bc2e6"/><rect x="0" y="32.62" width="50.8" height="1.0" fill="#9bc2e6"/><rect x="9.66" y="0" width="1.0" height="41.4" fill="#9bc2e6"/><rect x="19.82" y="0" width="1.0" height="41.4" fill="#9bc2e6"/><rect x="29.98" y="0" width="1.0" height="41.4" fill="#9bc2e6"/><rect x="40.14" y="0" width="1.0" height="41.4" fill="#9bc2e6"/><rect x="0.5" y="0.5" width="49.80" height="40.40" fill="none" stroke="#9bc2e6" stroke-width="1.0"/><rect x="2.60" y="3.29" width="5.3" height="1.7" fill="#505050"/><rect x="12.44" y="3.29" width="5.3" height="1.7" fill="#505050"/><rect x="22.28" y="3.29" width="5.3" height="1.7" fill="#505050"/><rect x="32.12" y="3.29" width="5.3" height="1.7" fill="#505050"/><rect x="41.96" y="3.29" width="5.3" height="1.7" fill="#505050"/><rect x="2.60" y="11.57" width="5.3" height="1.7" fill="#505050"/><rect x="12.44" y="11.57" width="5.3" height="1.7" fill="#505050"/><rect x="22.28" y="11.57" width="5.3" height="1.7" fill="#505050"/><rect x="32.12" y="11.57" width="5.3" height="1.7" fill="#505050"/><rect x="41.96" y="11.57" width="5.3" height="1.7" fill="#505050"/><rect x="2.60" y="19.85" width="5.3" height="1.7" fill="#505050"/><rect x="12.44" y="19.85" width="5.3" height="1.7" fill="#505050"/><rect x="22.28" y="19.85" width="5.3" height="1.7" fill="#505050"/><rect x="32.12" y="19.85" width="5.3" height="1.7" fill="#505050"/><rect x="41.96" y="19.85" width="5.3" height="1.7" fill="#505050"/><rect x="2.60" y="28.13" width="5.3" height="1.7" fill="#505050"/><rect x="12.44" y="28.13" width="5.3" height="1.7" fill="#505050"/><rect x="22.28" y="28.13" width="5.3" height="1.7" fill="#505050"/><rect x="32.12" y="28.13" width="5.3" height="1.7" fill="#505050"/><rect x="41.96" y="28.13" width="5.3" height="1.7" fill="#505050"/><rect x="2.60" y="36.41" width="5.3" height="1.7" fill="#505050"/><rect x="12.44" y="36.41" width="5.3" height="1.7" fill="#505050"/><rect x="22.28" y="36.41" width="5.3" height="1.7" fill="#505050"/><rect x="32.12" y="36.41" width="5.3" height="1.7" fill="#505050"/><rect x="41.96" y="36.41" width="5.3" height="1.7" fill="#505050"/></g><g transform="translate(1128.00,473.60)"><rect x="0" y="0.00" width="50.8" height="8.28" fill="#e2efda"/><rect x="0" y="16.56" width="50.8" height="8.28" fill="#e2efda"/><rect x="0" y="33.12" width="50.8" height="8.28" fill="#e2efda"/><rect x="0" y="8.28" width="50.8" height="8.28" fill="#c6e0b4"/><rect x="0" y="24.84" width="50.8" height="8.28" fill="#c6e0b4"/><rect x="0" y="7.78" width="50.8" height="1.0" fill="#a9d08e"/><rect x="0" y="16.06" width="50.8" height="1.0" fill="#a9d08e"/><rect x="0" y="24.34" width="50.8" height="1.0" fill="#a9d08e"/><rect x="0" y="32.62" width="50.8" height="1.0" fill="#a9d08e"/><rect x="9.66" y="0" width="1.0" height="41.4" fill="#a9d08e"/><rect x="19.82" y="0" width="1.0" height="41.4" fill="#a9d08e"/><rect x="29.98" y="0" width="1.0" height="41.4" fill="#a9d08e"/><rect x="40.14" y="0" width="1.0" height="41.4" fill="#a9d08e"/><rect x="0.5" y="0.5" width="49.80" height="40.40" fill="none" stroke="#a9d08e" stroke-width="1.0"/><rect x="2.60" y="3.29" width="5.3" height="1.7" fill="#505050"/><rect x="12.44" y="3.29" width="5.3" height="1.7" fill="#505050"/><rect x="22.28" y="3.29" width="5.3" height="1.7" fill="#505050"/><rect x="32.12" y="3.29" width="5.3" height="1.7" fill="#505050"/><rect x="41.96" y="3.29" width="5.3" height="1.7" fill="#505050"/><rect x="2.60" y="11.57" width="5.3" height="1.7" fill="#505050"/><rect x="12.44" y="11.57" width="5.3" height="1.7" fill="#505050"/><rect x="22.28" y="11.57" width="5.3" height="1.7" fill="#505050"/><rect x="32.12" y="11.57" width="5.3" height="1.7" fill="#505050"/><rect x="41.96" y="11.57" width="5.3" height="1.7" fill="#505050"/><rect x="2.60" y="19.85" width="5.3" height="1.7" fill="#505050"/><rect x="12.44" y="19.85" width="5.3" height="1.7" fill="#505050"/><rect x="22.28" y="19.85" width="5.3" height="1.7" fill="#505050"/><rect x="32.12" y="19.85" width="5.3" height="1.7" fill="#505050"/><rect x="41.96" y="19.85" width="5.3" height="1.7" fill="#505050"/><rect x="2.60" y="28.13" width="5.3" height="1.7" fill="#505050"/><rect x="12.44" y="28.13" width="5.3" height="1.7" fill="#505050"/><rect x="22.28" y="28.13" width="5.3" height="1.7" fill="#505050"/><rect x="32.12" y="28.13" width="5.3" height="1.7" fill="#505050"/><rect x="41.96" y="28.13" width="5.3" height="1.7" fill="#505050"/><rect x="2.60" y="36.41" width="5.3" height="1.7" fill="#505050"/><rect x="12.44" y="36.41" width="5.3" height="1.7" fill="#505050"/><rect x="22.28" y="36.41" width="5.3" height="1.7" fill="#505050"/><rect x="32.12" y="36.41" width="5.3" height="1.7" fill="#505050"/><rect x="41.96" y="36.41" width="5.3" height="1.7" fill="#505050"/></g><g transform="translate(783.30,559.20)"><rect x="0" y="0.00" width="50.8" height="8.28" fill="#000000"/><rect x="0" y="8.28" width="50.8" height="8.28" fill="#404040"/><rect x="0" y="24.84" width="50.8" height="8.28" fill="#404040"/><rect x="0" y="16.56" width="50.8" height="8.28" fill="#6f6f6f"/><rect x="0" y="33.12" width="50.8" height="8.28" fill="#6f6f6f"/><rect x="0" y="8.38" width="50.8" height="0.8" fill="#ffffff"/><rect x="2.60" y="3.29" width="5.3" height="1.7" fill="#c4c4c4"/><rect x="12.44" y="3.29" width="5.3" height="1.7" fill="#c4c4c4"/><rect x="22.28" y="3.29" width="5.3" height="1.7" fill="#c4c4c4"/><rect x="32.12" y="3.29" width="5.3" height="1.7" fill="#c4c4c4"/><rect x="41.96" y="3.29" width="5.3" height="1.7" fill="#c4c4c4"/><rect x="2.60" y="11.57" width="5.3" height="1.7" fill="#d0d0d0"/><rect x="12.44" y="11.57" width="5.3" height="1.7" fill="#d0d0d0"/><rect x="22.28" y="11.57" width="5.3" height="1.7" fill="#d0d0d0"/><rect x="32.12" y="11.57" width="5.3" height="1.7" fill="#d0d0d0"/><rect x="41.96" y="11.57" width="5.3" height="1.7" fill="#d0d0d0"/><rect x="2.60" y="19.85" width="5.3" height="1.7" fill="#d0d0d0"/><rect x="12.44" y="19.85" width="5.3" height="1.7" fill="#d0d0d0"/><rect x="22.28" y="19.85" width="5.3" height="1.7" fill="#d0d0d0"/><rect x="32.12" y="19.85" width="5.3" height="1.7" fill="#d0d0d0"/><rect x="41.96" y="19.85" width="5.3" height="1.7" fill="#d0d0d0"/><rect x="2.60" y="28.13" width="5.3" height="1.7" fill="#d0d0d0"/><rect x="12.44" y="28.13" width="5.3" height="1.7" fill="#d0d0d0"/><rect x="22.28" y="28.13" width="5.3" height="1.7" fill="#d0d0d0"/><rect x="32.12" y="28.13" width="5.3" height="1.7" fill="#d0d0d0"/><rect x="41.96" y="28.13" width="5.3" height="1.7" fill="#d0d0d0"/><rect x="2.60" y="36.41" width="5.3" height="1.7" fill="#d0d0d0"/><rect x="12.44" y="36.41" width="5.3" height="1.7" fill="#d0d0d0"/><rect x="22.28" y="36.41" width="5.3" height="1.7" fill="#d0d0d0"/><rect x="32.12" y="36.41" width="5.3" height="1.7" fill="#d0d0d0"/><rect x="41.96" y="36.41" width="5.3" height="1.7" fill="#d0d0d0"/></g><g transform="translate(840.75,559.20)"><rect x="0" y="0.00" width="50.8" height="8.28" fill="#000000"/><rect x="0" y="8.28" width="50.8" height="8.28" fill="#2f5597"/><rect x="0" y="24.84" width="50.8" height="8.28" fill="#2f5597"/><rect x="0" y="16.56" width="50.8" height="8.28" fill="#4472c4"/><rect x="0" y="33.12" width="50.8" height="8.28" fill="#4472c4"/><rect x="0" y="8.38" width="50.8" height="0.8" fill="#ffffff"/><rect x="2.60" y="3.29" width="5.3" height="1.7" fill="#c4c4c4"/><rect x="12.44" y="3.29" width="5.3" height="1.7" fill="#c4c4c4"/><rect x="22.28" y="3.29" width="5.3" height="1.7" fill="#c4c4c4"/><rect x="32.12" y="3.29" width="5.3" height="1.7" fill="#c4c4c4"/><rect x="41.96" y="3.29" width="5.3" height="1.7" fill="#c4c4c4"/><rect x="2.60" y="11.57" width="5.3" height="1.7" fill="#9dc3e6"/><rect x="12.44" y="11.57" width="5.3" height="1.7" fill="#9dc3e6"/><rect x="22.28" y="11.57" width="5.3" height="1.7" fill="#9dc3e6"/><rect x="32.12" y="11.57" width="5.3" height="1.7" fill="#9dc3e6"/><rect x="41.96" y="11.57" width="5.3" height="1.7" fill="#9dc3e6"/><rect x="2.60" y="19.85" width="5.3" height="1.7" fill="#9dc3e6"/><rect x="12.44" y="19.85" width="5.3" height="1.7" fill="#9dc3e6"/><rect x="22.28" y="19.85" width="5.3" height="1.7" fill="#9dc3e6"/><rect x="32.12" y="19.85" width="5.3" height="1.7" fill="#9dc3e6"/><rect x="41.96" y="19.85" width="5.3" height="1.7" fill="#9dc3e6"/><rect x="2.60" y="28.13" width="5.3" height="1.7" fill="#9dc3e6"/><rect x="12.44" y="28.13" width="5.3" height="1.7" fill="#9dc3e6"/><rect x="22.28" y="28.13" width="5.3" height="1.7" fill="#9dc3e6"/><rect x="32.12" y="28.13" width="5.3" height="1.7" fill="#9dc3e6"/><rect x="41.96" y="28.13" width="5.3" height="1.7" fill="#9dc3e6"/><rect x="2.60" y="36.41" width="5.3" height="1.7" fill="#9dc3e6"/><rect x="12.44" y="36.41" width="5.3" height="1.7" fill="#9dc3e6"/><rect x="22.28" y="36.41" width="5.3" height="1.7" fill="#9dc3e6"/><rect x="32.12" y="36.41" width="5.3" height="1.7" fill="#9dc3e6"/><rect x="41.96" y="36.41" width="5.3" height="1.7" fill="#9dc3e6"/></g><g transform="translate(898.20,559.20)"><rect x="0" y="0.00" width="50.8" height="8.28" fill="#000000"/><rect x="0" y="8.28" width="50.8" height="8.28" fill="#c55a11"/><rect x="0" y="24.84" width="50.8" height="8.28" fill="#c55a11"/><rect x="0" y="16.56" width="50.8" height="8.28" fill="#ed7d31"/><rect x="0" y="33.12" width="50.8" height="8.28" fill="#ed7d31"/><rect x="0" y="8.38" width="50.8" height="0.8" fill="#ffffff"/><rect x="2.60" y="3.29" width="5.3" height="1.7" fill="#c4c4c4"/><rect x="12.44" y="3.29" width="5.3" height="1.7" fill="#c4c4c4"/><rect x="22.28" y="3.29" width="5.3" height="1.7" fill="#c4c4c4"/><rect x="32.12" y="3.29" width="5.3" height="1.7" fill="#c4c4c4"/><rect x="41.96" y="3.29" width="5.3" height="1.7" fill="#c4c4c4"/><rect x="2.60" y="11.57" width="5.3" height="1.7" fill="#f8cbad"/><rect x="12.44" y="11.57" width="5.3" height="1.7" fill="#f8cbad"/><rect x="22.28" y="11.57" width="5.3" height="1.7" fill="#f8cbad"/><rect x="32.12" y="11.57" width="5.3" height="1.7" fill="#f8cbad"/><rect x="41.96" y="11.57" width="5.3" height="1.7" fill="#f8cbad"/><rect x="2.60" y="19.85" width="5.3" height="1.7" fill="#f8cbad"/><rect x="12.44" y="19.85" width="5.3" height="1.7" fill="#f8cbad"/><rect x="22.28" y="19.85" width="5.3" height="1.7" fill="#f8cbad"/><rect x="32.12" y="19.85" width="5.3" height="1.7" fill="#f8cbad"/><rect x="41.96" y="19.85" width="5.3" height="1.7" fill="#f8cbad"/><rect x="2.60" y="28.13" width="5.3" height="1.7" fill="#f8cbad"/><rect x="12.44" y="28.13" width="5.3" height="1.7" fill="#f8cbad"/><rect x="22.28" y="28.13" width="5.3" height="1.7" fill="#f8cbad"/><rect x="32.12" y="28.13" width="5.3" height="1.7" fill="#f8cbad"/><rect x="41.96" y="28.13" width="5.3" height="1.7" fill="#f8cbad"/><rect x="2.60" y="36.41" width="5.3" height="1.7" fill="#f8cbad"/><rect x="12.44" y="36.41" width="5.3" height="1.7" fill="#f8cbad"/><rect x="22.28" y="36.41" width="5.3" height="1.7" fill="#f8cbad"/><rect x="32.12" y="36.41" width="5.3" height="1.7" fill="#f8cbad"/><rect x="41.96" y="36.41" width="5.3" height="1.7" fill="#f8cbad"/></g><g transform="translate(955.65,559.20)"><rect x="0" y="0.00" width="50.8" height="8.28" fill="#000000"/><rect x="0" y="8.28" width="50.8" height="8.28" fill="#7b7b7b"/><rect x="0" y="24.84" width="50.8" height="8.28" fill="#7b7b7b"/><rect x="0" y="16.56" width="50.8" height="8.28" fill="#a5a5a5"/><rect x="0" y="33.12" width="50.8" height="8.28" fill="#a5a5a5"/><rect x="0" y="8.38" width="50.8" height="0.8" fill="#ffffff"/><rect x="2.60" y="3.29" width="5.3" height="1.7" fill="#c4c4c4"/><rect x="12.44" y="3.29" width="5.3" height="1.7" fill="#c4c4c4"/><rect x="22.28" y="3.29" width="5.3" height="1.7" fill="#c4c4c4"/><rect x="32.12" y="3.29" width="5.3" height="1.7" fill="#c4c4c4"/><rect x="41.96" y="3.29" width="5.3" height="1.7" fill="#c4c4c4"/><rect x="2.60" y="11.57" width="5.3" height="1.7" fill="#e0e0e0"/><rect x="12.44" y="11.57" width="5.3" height="1.7" fill="#e0e0e0"/><rect x="22.28" y="11.57" width="5.3" height="1.7" fill="#e0e0e0"/><rect x="32.12" y="11.57" width="5.3" height="1.7" fill="#e0e0e0"/><rect x="41.96" y="11.57" width="5.3" height="1.7" fill="#e0e0e0"/><rect x="2.60" y="19.85" width="5.3" height="1.7" fill="#e0e0e0"/><rect x="12.44" y="19.85" width="5.3" height="1.7" fill="#e0e0e0"/><rect x="22.28" y="19.85" width="5.3" height="1.7" fill="#e0e0e0"/><rect x="32.12" y="19.85" width="5.3" height="1.7" fill="#e0e0e0"/><rect x="41.96" y="19.85" width="5.3" height="1.7" fill="#e0e0e0"/><rect x="2.60" y="28.13" width="5.3" height="1.7" fill="#e0e0e0"/><rect x="12.44" y="28.13" width="5.3" height="1.7" fill="#e0e0e0"/><rect x="22.28" y="28.13" width="5.3" height="1.7" fill="#e0e0e0"/><rect x="32.12" y="28.13" width="5.3" height="1.7" fill="#e0e0e0"/><rect x="41.96" y="28.13" width="5.3" height="1.7" fill="#e0e0e0"/><rect x="2.60" y="36.41" width="5.3" height="1.7" fill="#e0e0e0"/><rect x="12.44" y="36.41" width="5.3" height="1.7" fill="#e0e0e0"/><rect x="22.28" y="36.41" width="5.3" height="1.7" fill="#e0e0e0"/><rect x="32.12" y="36.41" width="5.3" height="1.7" fill="#e0e0e0"/><rect x="41.96" y="36.41" width="5.3" height="1.7" fill="#e0e0e0"/></g><g transform="translate(1013.10,559.20)"><rect x="0" y="0.00" width="50.8" height="8.28" fill="#000000"/><rect x="0" y="8.28" width="50.8" height="8.28" fill="#bf8f00"/><rect x="0" y="24.84" width="50.8" height="8.28" fill="#bf8f00"/><rect x="0" y="16.56" width="50.8" height="8.28" fill="#ffc000"/><rect x="0" y="33.12" width="50.8" height="8.28" fill="#ffc000"/><rect x="0" y="8.38" width="50.8" height="0.8" fill="#ffffff"/><rect x="2.60" y="3.29" width="5.3" height="1.7" fill="#c4c4c4"/><rect x="12.44" y="3.29" width="5.3" height="1.7" fill="#c4c4c4"/><rect x="22.28" y="3.29" width="5.3" height="1.7" fill="#c4c4c4"/><rect x="32.12" y="3.29" width="5.3" height="1.7" fill="#c4c4c4"/><rect x="41.96" y="3.29" width="5.3" height="1.7" fill="#c4c4c4"/><rect x="2.60" y="11.57" width="5.3" height="1.7" fill="#ffe699"/><rect x="12.44" y="11.57" width="5.3" height="1.7" fill="#ffe699"/><rect x="22.28" y="11.57" width="5.3" height="1.7" fill="#ffe699"/><rect x="32.12" y="11.57" width="5.3" height="1.7" fill="#ffe699"/><rect x="41.96" y="11.57" width="5.3" height="1.7" fill="#ffe699"/><rect x="2.60" y="19.85" width="5.3" height="1.7" fill="#ffe699"/><rect x="12.44" y="19.85" width="5.3" height="1.7" fill="#ffe699"/><rect x="22.28" y="19.85" width="5.3" height="1.7" fill="#ffe699"/><rect x="32.12" y="19.85" width="5.3" height="1.7" fill="#ffe699"/><rect x="41.96" y="19.85" width="5.3" height="1.7" fill="#ffe699"/><rect x="2.60" y="28.13" width="5.3" height="1.7" fill="#ffe699"/><rect x="12.44" y="28.13" width="5.3" height="1.7" fill="#ffe699"/><rect x="22.28" y="28.13" width="5.3" height="1.7" fill="#ffe699"/><rect x="32.12" y="28.13" width="5.3" height="1.7" fill="#ffe699"/><rect x="41.96" y="28.13" width="5.3" height="1.7" fill="#ffe699"/><rect x="2.60" y="36.41" width="5.3" height="1.7" fill="#ffe699"/><rect x="12.44" y="36.41" width="5.3" height="1.7" fill="#ffe699"/><rect x="22.28" y="36.41" width="5.3" height="1.7" fill="#ffe699"/><rect x="32.12" y="36.41" width="5.3" height="1.7" fill="#ffe699"/><rect x="41.96" y="36.41" width="5.3" height="1.7" fill="#ffe699"/></g><g transform="translate(1070.55,559.20)"><rect x="0" y="0.00" width="50.8" height="8.28" fill="#000000"/><rect x="0" y="8.28" width="50.8" height="8.28" fill="#2e75b6"/><rect x="0" y="24.84" width="50.8" height="8.28" fill="#2e75b6"/><rect x="0" y="16.56" width="50.8" height="8.28" fill="#5b9bd5"/><rect x="0" y="33.12" width="50.8" height="8.28" fill="#5b9bd5"/><rect x="0" y="8.38" width="50.8" height="0.8" fill="#ffffff"/><rect x="2.60" y="3.29" width="5.3" height="1.7" fill="#c4c4c4"/><rect x="12.44" y="3.29" width="5.3" height="1.7" fill="#c4c4c4"/><rect x="22.28" y="3.29" width="5.3" height="1.7" fill="#c4c4c4"/><rect x="32.12" y="3.29" width="5.3" height="1.7" fill="#c4c4c4"/><rect x="41.96" y="3.29" width="5.3" height="1.7" fill="#c4c4c4"/><rect x="2.60" y="11.57" width="5.3" height="1.7" fill="#bdd7ee"/><rect x="12.44" y="11.57" width="5.3" height="1.7" fill="#bdd7ee"/><rect x="22.28" y="11.57" width="5.3" height="1.7" fill="#bdd7ee"/><rect x="32.12" y="11.57" width="5.3" height="1.7" fill="#bdd7ee"/><rect x="41.96" y="11.57" width="5.3" height="1.7" fill="#bdd7ee"/><rect x="2.60" y="19.85" width="5.3" height="1.7" fill="#bdd7ee"/><rect x="12.44" y="19.85" width="5.3" height="1.7" fill="#bdd7ee"/><rect x="22.28" y="19.85" width="5.3" height="1.7" fill="#bdd7ee"/><rect x="32.12" y="19.85" width="5.3" height="1.7" fill="#bdd7ee"/><rect x="41.96" y="19.85" width="5.3" height="1.7" fill="#bdd7ee"/><rect x="2.60" y="28.13" width="5.3" height="1.7" fill="#bdd7ee"/><rect x="12.44" y="28.13" width="5.3" height="1.7" fill="#bdd7ee"/><rect x="22.28" y="28.13" width="5.3" height="1.7" fill="#bdd7ee"/><rect x="32.12" y="28.13" width="5.3" height="1.7" fill="#bdd7ee"/><rect x="41.96" y="28.13" width="5.3" height="1.7" fill="#bdd7ee"/><rect x="2.60" y="36.41" width="5.3" height="1.7" fill="#bdd7ee"/><rect x="12.44" y="36.41" width="5.3" height="1.7" fill="#bdd7ee"/><rect x="22.28" y="36.41" width="5.3" height="1.7" fill="#bdd7ee"/><rect x="32.12" y="36.41" width="5.3" height="1.7" fill="#bdd7ee"/><rect x="41.96" y="36.41" width="5.3" height="1.7" fill="#bdd7ee"/></g><g transform="translate(1128.00,559.20)"><rect x="0" y="0.00" width="50.8" height="8.28" fill="#000000"/><rect x="0" y="8.28" width="50.8" height="8.28" fill="#548235"/><rect x="0" y="24.84" width="50.8" height="8.28" fill="#548235"/><rect x="0" y="16.56" width="50.8" height="8.28" fill="#70ad47"/><rect x="0" y="33.12" width="50.8" height="8.28" fill="#70ad47"/><rect x="0" y="8.38" width="50.8" height="0.8" fill="#ffffff"/><rect x="2.60" y="3.29" width="5.3" height="1.7" fill="#c4c4c4"/><rect x="12.44" y="3.29" width="5.3" height="1.7" fill="#c4c4c4"/><rect x="22.28" y="3.29" width="5.3" height="1.7" fill="#c4c4c4"/><rect x="32.12" y="3.29" width="5.3" height="1.7" fill="#c4c4c4"/><rect x="41.96" y="3.29" width="5.3" height="1.7" fill="#c4c4c4"/><rect x="2.60" y="11.57" width="5.3" height="1.7" fill="#c6e0b4"/><rect x="12.44" y="11.57" width="5.3" height="1.7" fill="#c6e0b4"/><rect x="22.28" y="11.57" width="5.3" height="1.7" fill="#c6e0b4"/><rect x="32.12" y="11.57" width="5.3" height="1.7" fill="#c6e0b4"/><rect x="41.96" y="11.57" width="5.3" height="1.7" fill="#c6e0b4"/><rect x="2.60" y="19.85" width="5.3" height="1.7" fill="#c6e0b4"/><rect x="12.44" y="19.85" width="5.3" height="1.7" fill="#c6e0b4"/><rect x="22.28" y="19.85" width="5.3" height="1.7" fill="#c6e0b4"/><rect x="32.12" y="19.85" width="5.3" height="1.7" fill="#c6e0b4"/><rect x="41.96" y="19.85" width="5.3" height="1.7" fill="#c6e0b4"/><rect x="2.60" y="28.13" width="5.3" height="1.7" fill="#c6e0b4"/><rect x="12.44" y="28.13" width="5.3" height="1.7" fill="#c6e0b4"/><rect x="22.28" y="28.13" width="5.3" height="1.7" fill="#c6e0b4"/><rect x="32.12" y="28.13" width="5.3" height="1.7" fill="#c6e0b4"/><rect x="41.96" y="28.13" width="5.3" height="1.7" fill="#c6e0b4"/><rect x="2.60" y="36.41" width="5.3" height="1.7" fill="#c6e0b4"/><rect x="12.44" y="36.41" width="5.3" height="1.7" fill="#c6e0b4"/><rect x="22.28" y="36.41" width="5.3" height="1.7" fill="#c6e0b4"/><rect x="32.12" y="36.41" width="5.3" height="1.7" fill="#c6e0b4"/><rect x="41.96" y="36.41" width="5.3" height="1.7" fill="#c6e0b4"/></g><g transform="translate(783.30,608.50)"><rect x="0" y="0.00" width="50.8" height="8.28" fill="#000000"/><rect x="0" y="8.28" width="50.8" height="8.28" fill="#a6a6a6"/><rect x="0" y="24.84" width="50.8" height="8.28" fill="#a6a6a6"/><rect x="0" y="16.56" width="50.8" height="8.28" fill="#d9d9d9"/><rect x="0" y="33.12" width="50.8" height="8.28" fill="#d9d9d9"/><rect x="2.60" y="3.29" width="5.3" height="1.7" fill="#e8e8e8"/><rect x="12.44" y="3.29" width="5.3" height="1.7" fill="#e8e8e8"/><rect x="22.28" y="3.29" width="5.3" height="1.7" fill="#e8e8e8"/><rect x="32.12" y="3.29" width="5.3" height="1.7" fill="#e8e8e8"/><rect x="41.96" y="3.29" width="5.3" height="1.7" fill="#e8e8e8"/><rect x="2.60" y="11.57" width="5.3" height="1.7" fill="#505050"/><rect x="12.44" y="11.57" width="5.3" height="1.7" fill="#505050"/><rect x="22.28" y="11.57" width="5.3" height="1.7" fill="#505050"/><rect x="32.12" y="11.57" width="5.3" height="1.7" fill="#505050"/><rect x="41.96" y="11.57" width="5.3" height="1.7" fill="#505050"/><rect x="2.60" y="19.85" width="5.3" height="1.7" fill="#505050"/><rect x="12.44" y="19.85" width="5.3" height="1.7" fill="#505050"/><rect x="22.28" y="19.85" width="5.3" height="1.7" fill="#505050"/><rect x="32.12" y="19.85" width="5.3" height="1.7" fill="#505050"/><rect x="41.96" y="19.85" width="5.3" height="1.7" fill="#505050"/><rect x="2.60" y="28.13" width="5.3" height="1.7" fill="#505050"/><rect x="12.44" y="28.13" width="5.3" height="1.7" fill="#505050"/><rect x="22.28" y="28.13" width="5.3" height="1.7" fill="#505050"/><rect x="32.12" y="28.13" width="5.3" height="1.7" fill="#505050"/><rect x="41.96" y="28.13" width="5.3" height="1.7" fill="#505050"/><rect x="2.60" y="36.41" width="5.3" height="1.7" fill="#505050"/><rect x="12.44" y="36.41" width="5.3" height="1.7" fill="#505050"/><rect x="22.28" y="36.41" width="5.3" height="1.7" fill="#505050"/><rect x="32.12" y="36.41" width="5.3" height="1.7" fill="#505050"/><rect x="41.96" y="36.41" width="5.3" height="1.7" fill="#505050"/></g><g transform="translate(840.75,608.50)"><rect x="0" y="0.00" width="50.8" height="8.28" fill="#ed7d31"/><rect x="0" y="8.28" width="50.8" height="8.28" fill="#b4c6e7"/><rect x="0" y="24.84" width="50.8" height="8.28" fill="#b4c6e7"/><rect x="0" y="16.56" width="50.8" height="8.28" fill="#d9e1f2"/><rect x="0" y="33.12" width="50.8" height="8.28" fill="#d9e1f2"/><rect x="2.60" y="3.29" width="5.3" height="1.7" fill="#e8e8e8"/><rect x="12.44" y="3.29" width="5.3" height="1.7" fill="#e8e8e8"/><rect x="22.28" y="3.29" width="5.3" height="1.7" fill="#e8e8e8"/><rect x="32.12" y="3.29" width="5.3" height="1.7" fill="#e8e8e8"/><rect x="41.96" y="3.29" width="5.3" height="1.7" fill="#e8e8e8"/><rect x="2.60" y="11.57" width="5.3" height="1.7" fill="#505050"/><rect x="12.44" y="11.57" width="5.3" height="1.7" fill="#505050"/><rect x="22.28" y="11.57" width="5.3" height="1.7" fill="#505050"/><rect x="32.12" y="11.57" width="5.3" height="1.7" fill="#505050"/><rect x="41.96" y="11.57" width="5.3" height="1.7" fill="#505050"/><rect x="2.60" y="19.85" width="5.3" height="1.7" fill="#505050"/><rect x="12.44" y="19.85" width="5.3" height="1.7" fill="#505050"/><rect x="22.28" y="19.85" width="5.3" height="1.7" fill="#505050"/><rect x="32.12" y="19.85" width="5.3" height="1.7" fill="#505050"/><rect x="41.96" y="19.85" width="5.3" height="1.7" fill="#505050"/><rect x="2.60" y="28.13" width="5.3" height="1.7" fill="#505050"/><rect x="12.44" y="28.13" width="5.3" height="1.7" fill="#505050"/><rect x="22.28" y="28.13" width="5.3" height="1.7" fill="#505050"/><rect x="32.12" y="28.13" width="5.3" height="1.7" fill="#505050"/><rect x="41.96" y="28.13" width="5.3" height="1.7" fill="#505050"/><rect x="2.60" y="36.41" width="5.3" height="1.7" fill="#505050"/><rect x="12.44" y="36.41" width="5.3" height="1.7" fill="#505050"/><rect x="22.28" y="36.41" width="5.3" height="1.7" fill="#505050"/><rect x="32.12" y="36.41" width="5.3" height="1.7" fill="#505050"/><rect x="41.96" y="36.41" width="5.3" height="1.7" fill="#505050"/></g><g transform="translate(898.20,608.50)"><rect x="0" y="0.00" width="50.8" height="8.28" fill="#ffc000"/><rect x="0" y="8.28" width="50.8" height="8.28" fill="#d9d9d9"/><rect x="0" y="24.84" width="50.8" height="8.28" fill="#d9d9d9"/><rect x="0" y="16.56" width="50.8" height="8.28" fill="#ededed"/><rect x="0" y="33.12" width="50.8" height="8.28" fill="#ededed"/><rect x="2.60" y="3.29" width="5.3" height="1.7" fill="#e8e8e8"/><rect x="12.44" y="3.29" width="5.3" height="1.7" fill="#e8e8e8"/><rect x="22.28" y="3.29" width="5.3" height="1.7" fill="#e8e8e8"/><rect x="32.12" y="3.29" width="5.3" height="1.7" fill="#e8e8e8"/><rect x="41.96" y="3.29" width="5.3" height="1.7" fill="#e8e8e8"/><rect x="2.60" y="11.57" width="5.3" height="1.7" fill="#505050"/><rect x="12.44" y="11.57" width="5.3" height="1.7" fill="#505050"/><rect x="22.28" y="11.57" width="5.3" height="1.7" fill="#505050"/><rect x="32.12" y="11.57" width="5.3" height="1.7" fill="#505050"/><rect x="41.96" y="11.57" width="5.3" height="1.7" fill="#505050"/><rect x="2.60" y="19.85" width="5.3" height="1.7" fill="#505050"/><rect x="12.44" y="19.85" width="5.3" height="1.7" fill="#505050"/><rect x="22.28" y="19.85" width="5.3" height="1.7" fill="#505050"/><rect x="32.12" y="19.85" width="5.3" height="1.7" fill="#505050"/><rect x="41.96" y="19.85" width="5.3" height="1.7" fill="#505050"/><rect x="2.60" y="28.13" width="5.3" height="1.7" fill="#505050"/><rect x="12.44" y="28.13" width="5.3" height="1.7" fill="#505050"/><rect x="22.28" y="28.13" width="5.3" height="1.7" fill="#505050"/><rect x="32.12" y="28.13" width="5.3" height="1.7" fill="#505050"/><rect x="41.96" y="28.13" width="5.3" height="1.7" fill="#505050"/><rect x="2.60" y="36.41" width="5.3" height="1.7" fill="#505050"/><rect x="12.44" y="36.41" width="5.3" height="1.7" fill="#505050"/><rect x="22.28" y="36.41" width="5.3" height="1.7" fill="#505050"/><rect x="32.12" y="36.41" width="5.3" height="1.7" fill="#505050"/><rect x="41.96" y="36.41" width="5.3" height="1.7" fill="#505050"/></g><g transform="translate(955.65,608.50)"><rect x="0" y="0.00" width="50.8" height="8.28" fill="#70ad47"/><rect x="0" y="8.28" width="50.8" height="8.28" fill="#bdd7ee"/><rect x="0" y="24.84" width="50.8" height="8.28" fill="#bdd7ee"/><rect x="0" y="16.56" width="50.8" height="8.28" fill="#ddebf7"/><rect x="0" y="33.12" width="50.8" height="8.28" fill="#ddebf7"/><rect x="2.60" y="3.29" width="5.3" height="1.7" fill="#e8e8e8"/><rect x="12.44" y="3.29" width="5.3" height="1.7" fill="#e8e8e8"/><rect x="22.28" y="3.29" width="5.3" height="1.7" fill="#e8e8e8"/><rect x="32.12" y="3.29" width="5.3" height="1.7" fill="#e8e8e8"/><rect x="41.96" y="3.29" width="5.3" height="1.7" fill="#e8e8e8"/><rect x="2.60" y="11.57" width="5.3" height="1.7" fill="#505050"/><rect x="12.44" y="11.57" width="5.3" height="1.7" fill="#505050"/><rect x="22.28" y="11.57" width="5.3" height="1.7" fill="#505050"/><rect x="32.12" y="11.57" width="5.3" height="1.7" fill="#505050"/><rect x="41.96" y="11.57" width="5.3" height="1.7" fill="#505050"/><rect x="2.60" y="19.85" width="5.3" height="1.7" fill="#505050"/><rect x="12.44" y="19.85" width="5.3" height="1.7" fill="#505050"/><rect x="22.28" y="19.85" width="5.3" height="1.7" fill="#505050"/><rect x="32.12" y="19.85" width="5.3" height="1.7" fill="#505050"/><rect x="41.96" y="19.85" width="5.3" height="1.7" fill="#505050"/><rect x="2.60" y="28.13" width="5.3" height="1.7" fill="#505050"/><rect x="12.44" y="28.13" width="5.3" height="1.7" fill="#505050"/><rect x="22.28" y="28.13" width="5.3" height="1.7" fill="#505050"/><rect x="32.12" y="28.13" width="5.3" height="1.7" fill="#505050"/><rect x="41.96" y="28.13" width="5.3" height="1.7" fill="#505050"/><rect x="2.60" y="36.41" width="5.3" height="1.7" fill="#505050"/><rect x="12.44" y="36.41" width="5.3" height="1.7" fill="#505050"/><rect x="22.28" y="36.41" width="5.3" height="1.7" fill="#505050"/><rect x="32.12" y="36.41" width="5.3" height="1.7" fill="#505050"/><rect x="41.96" y="36.41" width="5.3" height="1.7" fill="#505050"/></g><path d="M1184.5,122.5 L1188.3,116.5 L1192,122.5 Z" fill="#707070"/><rect x="1184.7" y="126.5" width="7.3" height="504.5" rx="1" fill="#6f6f6f"/><path d="M1184.5,642.5 L1188.3,648.5 L1192,642.5 Z" fill="#707070"/><rect x="790" y="662.5" width="12.5" height="12" fill="#3d8fd6" stroke="#7a7a7a" stroke-width="0.9"/><path d="M793.6,662.5 V674.5 M797,662.5 V674.5 M800,662.5 V674.5 M790,666.5 H802.5 M790,670.5 H802.5" stroke="#ffffff" stroke-width="1"/><rect x="788.8" y="660.5" width="6" height="6" fill="#fff"/><path d="M791.8,660.8 V666.2 M789.1,663.5 H794.5" stroke="#2e9e50" stroke-width="1.3"/><rect x="790" y="688.3" width="12.5" height="13" fill="#fff" stroke="#7a7a7a" stroke-width="1.1"/><rect x="790.5" y="688.8" width="11.5" height="3" fill="#a8a8a8"/><rect x="790.5" y="688.8" width="3" height="12" fill="#a8a8a8"/><path d="M796,699 H799.8 V694" fill="none" stroke="#3d8fd6" stroke-width="1.1"/><path d="M797.5,697.2 L795.7,699 L797.5,700.8" fill="none" stroke="#3d8fd6" stroke-width="1"/><rect x="788.8" y="686.5" width="6" height="6" fill="#fff"/><path d="M791.8,686.8 V692.2 M789.1,689.5 H794.5" stroke="#2e9e50" stroke-width="1.3"/><circle cx="979" cy="712" r="0.5" fill="#aaa"/><circle cx="982.5" cy="712" r="0.5" fill="#aaa"/><circle cx="986" cy="712" r="0.5" fill="#aaa"/><circle cx="989.5" cy="712" r="0.5" fill="#aaa"/><rect x="838.6" y="372.3" width="53" height="51" fill="#fff"/><g transform="translate(840.75,375.0)"><rect x="0" y="0.00" width="50.8" height="8.28" fill="#4472c4"/><rect x="0" y="8.28" width="50.8" height="8.28" fill="#b4c6e7"/><rect x="0" y="24.84" width="50.8" height="8.28" fill="#b4c6e7"/><rect x="0" y="16.56" width="50.8" height="8.28" fill="#d9e1f2"/><rect x="0" y="33.12" width="50.8" height="8.28" fill="#d9e1f2"/><rect x="0" y="7.68" width="50.8" height="1.2" fill="#ffffff"/><rect x="0" y="15.96" width="50.8" height="1.2" fill="#ffffff"/><rect x="0" y="24.24" width="50.8" height="1.2" fill="#ffffff"/><rect x="0" y="32.52" width="50.8" height="1.2" fill="#ffffff"/><rect x="9.56" y="0" width="1.2" height="41.4" fill="#ffffff"/><rect x="19.72" y="0" width="1.2" height="41.4" fill="#ffffff"/><rect x="29.88" y="0" width="1.2" height="41.4" fill="#ffffff"/><rect x="40.04" y="0" width="1.2" height="41.4" fill="#ffffff"/><rect x="2.60" y="3.29" width="5.3" height="1.7" fill="#e0e0e0"/><rect x="12.44" y="3.29" width="5.3" height="1.7" fill="#e0e0e0"/><rect x="22.28" y="3.29" width="5.3" height="1.7" fill="#e0e0e0"/><rect x="32.12" y="3.29" width="5.3" height="1.7" fill="#e0e0e0"/><rect x="41.96" y="3.29" width="5.3" height="1.7" fill="#e0e0e0"/><rect x="2.60" y="11.57" width="5.3" height="1.7" fill="#505050"/><rect x="12.44" y="11.57" width="5.3" height="1.7" fill="#505050"/><rect x="22.28" y="11.57" width="5.3" height="1.7" fill="#505050"/><rect x="32.12" y="11.57" width="5.3" height="1.7" fill="#505050"/><rect x="41.96" y="11.57" width="5.3" height="1.7" fill="#505050"/><rect x="2.60" y="19.85" width="5.3" height="1.7" fill="#505050"/><rect x="12.44" y="19.85" width="5.3" height="1.7" fill="#505050"/><rect x="22.28" y="19.85" width="5.3" height="1.7" fill="#505050"/><rect x="32.12" y="19.85" width="5.3" height="1.7" fill="#505050"/><rect x="41.96" y="19.85" width="5.3" height="1.7" fill="#505050"/><rect x="2.60" y="28.13" width="5.3" height="1.7" fill="#505050"/><rect x="12.44" y="28.13" width="5.3" height="1.7" fill="#505050"/><rect x="22.28" y="28.13" width="5.3" height="1.7" fill="#505050"/><rect x="32.12" y="28.13" width="5.3" height="1.7" fill="#505050"/><rect x="41.96" y="28.13" width="5.3" height="1.7" fill="#505050"/><rect x="2.60" y="36.41" width="5.3" height="1.7" fill="#505050"/><rect x="12.44" y="36.41" width="5.3" height="1.7" fill="#505050"/><rect x="22.28" y="36.41" width="5.3" height="1.7" fill="#505050"/><rect x="32.12" y="36.41" width="5.3" height="1.7" fill="#505050"/><rect x="41.96" y="36.41" width="5.3" height="1.7" fill="#505050"/></g><path d="M838.8,422.5 V372.5 H891.5" fill="none" stroke="#1a1a1a" stroke-width="1.4"/><path d="M839,422.3 H884" fill="none" stroke="#1a1a1a" stroke-width="1.6"/><rect x="836.75" y="370.65" width="55.8" height="53.3" fill="none" stroke="#e4101a" stroke-width="3.3"/><path d="M883,410 V421.5 L885.5,419 L887.5,423.5 L889.2,422.8 L887.2,418.3 L890.5,418.3 Z" fill="#fff" stroke="#303030" stroke-width="0.8"/></svg><div class="t" style="left:809.00px;top:665.02px;font-size:10.21px;color:#262626;transform:scaleX(0.974);">New Table Style...</div><div class="t" style="left:809.01px;top:690.92px;font-size:10.21px;color:#262626;transform:scaleX(0.970);">New PivotTable Style...</div><div class="a" style="left:810px;top:674.3px;width:6.5px;height:0.8px;background:#262626"></div><div class="a" style="left:833px;top:701px;width:4.8px;height:0.8px;background:#262626"></div><div class="a" style="left:894.6px;top:401.8px;width:124px;height:22.3px;background:#fff;border:1px solid #cfcfcf;box-shadow:1px 1px 2px rgba(0,0,0,0.12)"></div><div class="t" style="left:895.00px;top:409.22px;font-size:10.21px;color:#555555;transform:scaleX(0.977);">Blue, Table Style Medium 9</div><svg class="a" style="left:0;top:0" width="1280" height="720"><path d="M622.5,515.5 L829,401.8" stroke="#e8101a" stroke-width="3" fill="none"/><path d="M835.5,398.4 L824.8,397.6 L831,406.2 Z" fill="#e8101a"/></svg></body></html>
